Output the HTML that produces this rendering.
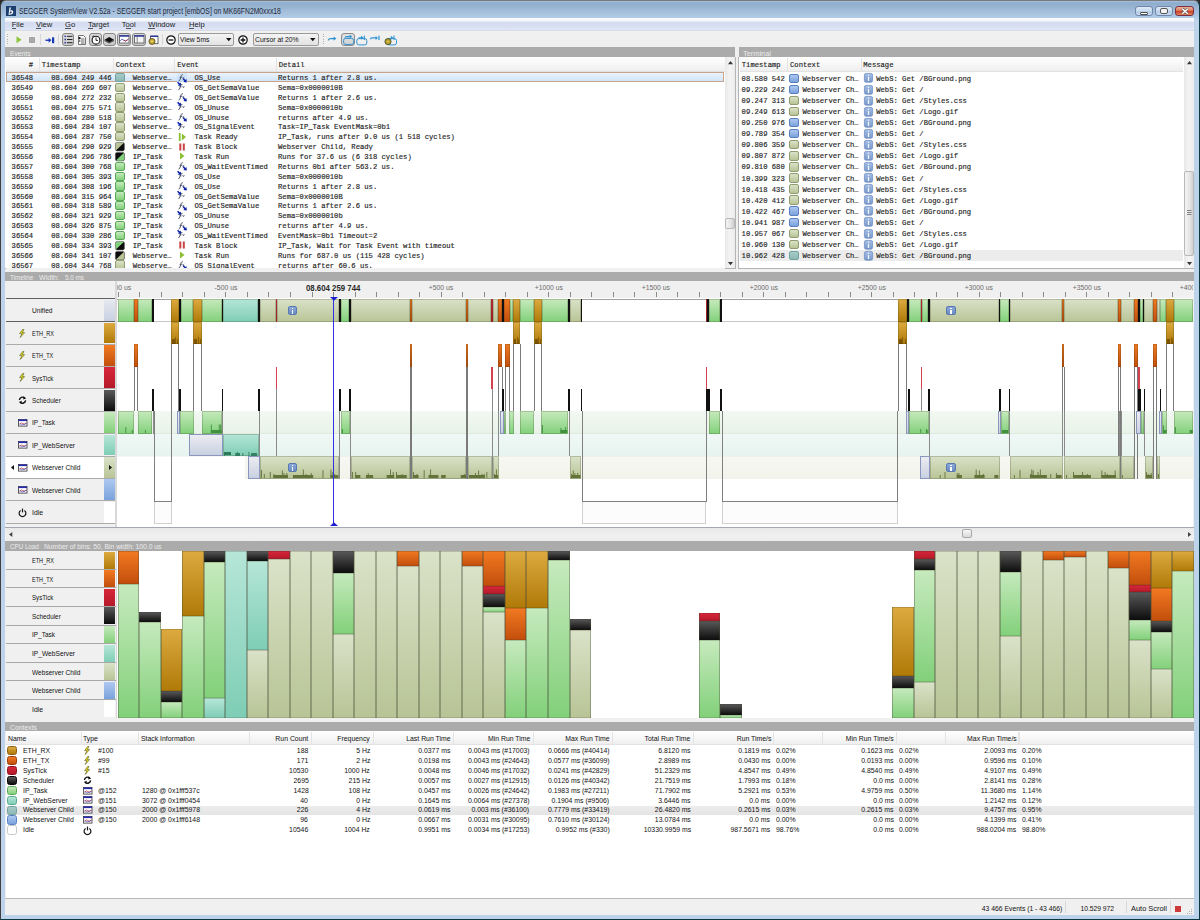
<!DOCTYPE html>
<html><head><meta charset="utf-8"><title>SEGGER SystemView</title>
<style>
html,body{margin:0;padding:0;width:1200px;height:920px;overflow:hidden;background:#2b2b2b}
#r{position:relative;width:1200px;height:920px;overflow:hidden}
#r div{position:absolute}
#r .t{white-space:pre}
#r .m{-webkit-text-stroke:0.15px currentColor}
svg{overflow:visible}
</style></head><body><div id="r">
<div style="left:0px;top:0px;width:1200px;height:920px;background:#2b2b2b;"></div>
<div style="left:0px;top:0px;width:1200px;height:920px;background:linear-gradient(#a8c0e0 0px,#8eaccc 2px,#a0bad8 9px,#b2cde6 17px,#bcd3ea 19px,#bdd3eb 100%);border:1px solid #404040;border-top-color:#7a7a7a;border-bottom-color:#0c3a42;border-right-color:#0c3a42;box-sizing:border-box;border-radius:6px 6px 0 0"></div>
<div style="left:5px;top:18px;width:1189px;height:897px;background:#f0f0f0;"></div>
<svg style="position:absolute;left:6px;top:6px;" width="10" height="10" viewBox="0 0 10 10"><rect width="10" height="10" fill="#1d3f6e"/><path d="M3.5 1.5 L5 1.5 L4.2 4.5 Q7.5 3.8 7.3 6.2 Q7 8.6 3.5 8.8 L2.5 8.8 Z M4 5.6 L3.5 7.8 Q5.8 7.6 5.9 6.3 Q6 5.2 4 5.6Z" fill="#fff"/></svg>
<div class="t" style="left:18.5px;top:4.99px;font-size:8.4px;line-height:12px;color:#1e2a3a;font-family:'Liberation Sans',sans-serif;transform:scaleX(0.811);transform-origin:left;">SEGGER SystemView V2.52a - SEGGER start project [embOS] on MK66FN2M0xxx18</div>
<div style="left:1135px;top:6px;width:18px;height:10px;background:linear-gradient(#dfe9f5,#c9dbef 50%,#b5cde8 51%,#c8dcf0);border:1px solid #6f86a8;border-radius:3px;box-sizing:border-box"></div>
<div style="left:1140px;top:12px;width:8px;height:3px;background:#fafafa;border:1px solid #505050;box-sizing:border-box;border-radius:1px"></div>
<div style="left:1155px;top:6px;width:18px;height:10px;background:linear-gradient(#dfe9f5,#c9dbef 50%,#b5cde8 51%,#c8dcf0);border:1px solid #6f86a8;border-radius:3px;box-sizing:border-box"></div>
<div style="left:1160px;top:8px;width:8px;height:6px;background:#f4f4f4;border:1px solid #555;box-sizing:border-box;border-radius:2px"></div>
<div style="left:1175px;top:6px;width:19px;height:10px;background:linear-gradient(#f0b49c,#e0765a 45%,#c8402a 55%,#e08a60);border:1px solid #7a3040;border-radius:3px;box-sizing:border-box"></div>
<svg style="position:absolute;left:1180.5px;top:8.3px;" width="8" height="6.5" viewBox="0 0 8 6.5"><path d="M1.3 0.8 L6.7 5.7 M6.7 0.8 L1.3 5.7" stroke="#555" stroke-width="2.6"/><path d="M1.3 0.8 L6.7 5.7 M6.7 0.8 L1.3 5.7" stroke="#fff" stroke-width="1.5"/></svg>
<div style="left:5px;top:18px;width:1189px;height:13px;background:linear-gradient(#fcfdff 0px,#f4f6fc 2.5px,#d6ddf0 4.5px,#d8dff2 9px,#e0e6f6 11.5px,#d6dae6 12.5px,#e4e6ec 13px)"></div>
<div class="t" style="left:11.7px;top:19.06px;font-size:7.6px;line-height:11px;color:#1a1a1a;font-family:'Liberation Sans',sans-serif;">File</div>
<div style="left:12px;top:28px;width:4px;height:1px;background:#555;"></div>
<div class="t" style="left:36px;top:19.06px;font-size:7.6px;line-height:11px;color:#1a1a1a;font-family:'Liberation Sans',sans-serif;">View</div>
<div style="left:36px;top:28px;width:5px;height:1px;background:#555;"></div>
<div class="t" style="left:65px;top:19.06px;font-size:7.6px;line-height:11px;color:#1a1a1a;font-family:'Liberation Sans',sans-serif;">Go</div>
<div style="left:65px;top:28px;width:6px;height:1px;background:#555;"></div>
<div class="t" style="left:88px;top:19.06px;font-size:7.6px;line-height:11px;color:#1a1a1a;font-family:'Liberation Sans',sans-serif;">Target</div>
<div style="left:88px;top:28px;width:5px;height:1px;background:#555;"></div>
<div class="t" style="left:121.7px;top:19.06px;font-size:7.6px;line-height:11px;color:#1a1a1a;font-family:'Liberation Sans',sans-serif;">Tool</div>
<div style="left:126px;top:28px;width:5px;height:1px;background:#555;"></div>
<div class="t" style="left:148.3px;top:19.06px;font-size:7.6px;line-height:11px;color:#1a1a1a;font-family:'Liberation Sans',sans-serif;">Window</div>
<div style="left:148px;top:28px;width:7px;height:1px;background:#555;"></div>
<div class="t" style="left:189px;top:19.06px;font-size:7.6px;line-height:11px;color:#1a1a1a;font-family:'Liberation Sans',sans-serif;">Help</div>
<div style="left:189px;top:28px;width:5px;height:1px;background:#555;"></div>
<div style="left:5px;top:31px;width:1189px;height:16px;background:linear-gradient(#f2f2ee,#f0f0f0 2px,#efefef)"></div>
<div style="left:7px;top:34px;width:1px;height:1px;background:#b0b0b0;"></div>
<div style="left:7px;top:36px;width:1px;height:1px;background:#b0b0b0;"></div>
<div style="left:7px;top:39px;width:1px;height:1px;background:#b0b0b0;"></div>
<div style="left:7px;top:41px;width:1px;height:1px;background:#b0b0b0;"></div>
<div style="left:7px;top:43px;width:1px;height:1px;background:#b0b0b0;"></div>
<div style="left:323px;top:34px;width:1px;height:1px;background:#b0b0b0;"></div>
<div style="left:323px;top:36px;width:1px;height:1px;background:#b0b0b0;"></div>
<div style="left:323px;top:39px;width:1px;height:1px;background:#b0b0b0;"></div>
<div style="left:323px;top:41px;width:1px;height:1px;background:#b0b0b0;"></div>
<div style="left:323px;top:43px;width:1px;height:1px;background:#b0b0b0;"></div>
<svg style="position:absolute;left:15.5px;top:36px;" width="6" height="7.5" viewBox="0 0 6 7.5"><path d="M0.5 0.3 L5.6 3.75 L0.5 7.2Z" fill="#8cc63e"/></svg>
<div style="left:29px;top:37px;width:6px;height:6px;background:#a8a8a8;"></div>
<div style="left:40px;top:34px;width:1px;height:11px;background:#d6d6d6;"></div>
<svg style="position:absolute;left:45px;top:36.5px;" width="10" height="6.5" viewBox="0 0 10 6.5"><path d="M0.5 3.25 H5.5" stroke="#1838b8" stroke-width="1.4"/><path d="M3.6 0.8 L6.4 3.25 L3.6 5.7Z" fill="#1838b8"/><rect x="7" y="0.3" width="2.2" height="5.9" fill="#1838b8"/></svg>
<div style="left:58px;top:34px;width:1px;height:11px;background:#d6d6d6;"></div>
<div style="left:62px;top:33px;width:12px;height:13px;background:linear-gradient(#dadada,#c8c8c8);border:1px solid #858585;border-radius:3px;box-sizing:border-box"></div>
<svg style="position:absolute;left:63.5px;top:34.5px;" width="9" height="9" viewBox="0 0 9 9"><rect x="0.5" y="0.6" width="1.4" height="1.4" fill="#1e2aa0"/><rect x="0.5" y="3.8" width="1.4" height="1.4" fill="#1e2aa0"/><rect x="0.5" y="7" width="1.4" height="1.4" fill="#1e2aa0"/><path d="M3 1.3H8.5M3 4.5H8.5M3 7.7H8.5" stroke="#222" stroke-width="1"/></svg>
<svg style="position:absolute;left:77px;top:34.5px;" width="9.5" height="10" viewBox="0 0 9.5 10"><path d="M1.5 0.5H6.5L8.5 2.5V9.5H1.5Z" fill="#fafafa" stroke="#555" stroke-width="0.8"/><path d="M4 4H7.5M4 6H7.5M4 8H7.5" stroke="#444" stroke-width="0.8"/><circle cx="2.6" cy="3.2" r="1.1" fill="#111"/><circle cx="2.6" cy="6" r="0.9" fill="#777"/></svg>
<div style="left:89px;top:33px;width:13px;height:13px;background:linear-gradient(#dadada,#c8c8c8);border:1px solid #858585;border-radius:3px;box-sizing:border-box"></div>
<div style="left:103px;top:33px;width:13px;height:13px;background:linear-gradient(#dadada,#c8c8c8);border:1px solid #858585;border-radius:3px;box-sizing:border-box"></div>
<div style="left:117px;top:33px;width:14px;height:13px;background:linear-gradient(#dadada,#c8c8c8);border:1px solid #858585;border-radius:3px;box-sizing:border-box"></div>
<div style="left:132px;top:33px;width:14px;height:13px;background:linear-gradient(#dadada,#c8c8c8);border:1px solid #858585;border-radius:3px;box-sizing:border-box"></div>
<svg style="position:absolute;left:91px;top:34.5px;" width="10" height="10" viewBox="0 0 10 10"><circle cx="5" cy="5.2" r="3.9" fill="#fff" stroke="#111" stroke-width="1.1"/><path d="M5 2.6V5.4H7" stroke="#111" stroke-width="0.9" fill="none"/><path d="M1.3 1.8 L2.8 0.8" stroke="#111" stroke-width="0.9"/></svg>
<svg style="position:absolute;left:104.2px;top:35.5px;" width="10.5" height="8" viewBox="0 0 10.5 8"><path d="M0.5 3.8 L5.2 1 L10 3.8 L5.2 6.4Z" fill="#111"/><path d="M0.5 3.8 V5 L5.2 7.6 L10 5 V3.8 L5.2 6.4Z" fill="#444"/></svg>
<svg style="position:absolute;left:119px;top:35px;" width="10.5" height="8.5" viewBox="0 0 10.5 8.5"><rect x="0.5" y="0.5" width="9.5" height="7.5" fill="#fff" stroke="#555" stroke-width="0.8"/><rect x="0.5" y="0.4" width="9.5" height="1.3" fill="#1e2aa0"/><path d="M1.2 5.8 Q2.8 3 4.6 5.2 T9.4 4.2" stroke="#2a40c0" stroke-width="0.8" fill="none"/><path d="M4.6 5.2 Q6.5 7.2 9.4 4.2" stroke="#c03030" stroke-width="0.8" fill="none"/></svg>
<svg style="position:absolute;left:133.5px;top:35px;" width="10.5" height="8.5" viewBox="0 0 10.5 8.5"><rect x="0.5" y="0.5" width="9.5" height="7.5" fill="#f4f4f4" stroke="#555" stroke-width="0.8"/><rect x="0.5" y="0.4" width="9.5" height="1.3" fill="#1e2aa0"/><path d="M3.2 1.7V8" stroke="#777" stroke-width="0.8"/></svg>
<svg style="position:absolute;left:147.5px;top:34.6px;" width="10.5" height="10" viewBox="0 0 10.5 10"><rect x="2.5" y="1.2" width="7.5" height="7.5" fill="#fff" stroke="#444" stroke-width="0.8"/><rect x="2.5" y="0.6" width="7.5" height="1.3" fill="#1e2aa0"/><circle cx="4" cy="6.4" r="3" fill="#c8a830" stroke="#4a4020" stroke-width="0.8"/><path d="M2.6 6.4H5.4M4 5V7.8" stroke="#f0e080" stroke-width="0.6"/></svg>
<div style="left:162px;top:34px;width:1px;height:11px;background:#d6d6d6;"></div>
<svg style="position:absolute;left:165.8px;top:35px;" width="10" height="10" viewBox="0 0 10 10"><circle cx="5" cy="5" r="4.2" fill="#fff" stroke="#111" stroke-width="1.2"/><path d="M2.6 5H7.4" stroke="#111" stroke-width="1.3"/></svg>
<div style="left:178px;top:33px;width:56px;height:13px;background:linear-gradient(#f4f4f4,#e2e2e2);border:1px solid #9a9a9a;border-radius:2px;box-sizing:border-box"></div>
<div class="t" style="left:180.2px;top:34.26px;font-size:7.6px;line-height:11px;color:#111;font-family:'Liberation Sans',sans-serif;transform:scaleX(0.900);transform-origin:left;">View 5ms</div>
<svg style="position:absolute;left:225.9px;top:38px;" width="5.5" height="3.5" viewBox="0 0 5.5 3.5"><path d="M0 0H5.5L2.75 3.3Z" fill="#111"/></svg>
<svg style="position:absolute;left:237.5px;top:35px;" width="10" height="10" viewBox="0 0 10 10"><circle cx="5" cy="5" r="4.2" fill="#fff" stroke="#111" stroke-width="1.2"/><path d="M2.6 5H7.4M5 2.6V7.4" stroke="#111" stroke-width="1.3"/></svg>
<div style="left:253px;top:33px;width:66px;height:13px;background:linear-gradient(#f4f4f4,#e2e2e2);border:1px solid #9a9a9a;border-radius:2px;box-sizing:border-box"></div>
<div class="t" style="left:255.2px;top:34.26px;font-size:7.6px;line-height:11px;color:#111;font-family:'Liberation Sans',sans-serif;transform:scaleX(0.900);transform-origin:left;">Cursor at 20%</div>
<svg style="position:absolute;left:310.3px;top:38px;" width="5.5" height="3.5" viewBox="0 0 5.5 3.5"><path d="M0 0H5.5L2.75 3.3Z" fill="#111"/></svg>
<svg style="position:absolute;left:326px;top:33px;" width="74" height="14" viewBox="0 0 74 14"><path d="M2.4 7.6 Q2.4 5.6 4.6 5.6 H8" stroke="#2e92d2" stroke-width="1.1" fill="none"/><path d="M7.6 3.4 L10.4 5.6 L7.6 7.8Z" fill="#2e92d2"/><rect x="30.8" y="5.6" width="10" height="6.3" rx="2" fill="none" stroke="#2e92d2" stroke-width="1"/><path d="M35 2.8 L37.6 4.8 L35 6.8Z" fill="#2e92d2"/><rect x="37.8" y="2.6" width="1.1" height="4.3" fill="#2e92d2"/><path d="M32.5 4.8H35" stroke="#2e92d2" stroke-width="1"/><path d="M44.5 6.2 Q44.5 4.9 46 4.9 H50" stroke="#2e92d2" stroke-width="1.1" fill="none"/><path d="M49.6 2.9 L52 4.9 L49.6 6.9Z" fill="#2e92d2"/><rect x="52.4" y="2.7" width="1.2" height="4.4" fill="#2e92d2"/><rect x="61" y="5.6" width="9.5" height="6.3" rx="2" fill="none" stroke="#2e92d2" stroke-width="1"/><path d="M64.8 2.8 L67.2 4.8 L64.8 6.8Z" fill="#2e92d2"/><rect x="67.4" y="2.6" width="1.1" height="4.3" fill="#2e92d2"/><circle cx="62" cy="8.6" r="3.1" fill="#b89a28" stroke="#3a4a30" stroke-width="0.8"/><path d="M60.5 8.6H63.5M62 7V10.2" stroke="#e8d060" stroke-width="0.6"/></svg>
<div style="left:341px;top:33px;width:14px;height:13px;background:linear-gradient(#e2e2e2,#d2d2d2);border:1px solid #8a8a8a;border-radius:3px;box-sizing:border-box"></div>
<svg style="position:absolute;left:340.6px;top:33px;" width="15" height="13" viewBox="0 0 15 13"><rect x="2.6" y="5.4" width="10" height="6" rx="2" fill="none" stroke="#2e92d2" stroke-width="1"/><path d="M4.2 4.8 Q4.2 3.6 5.6 3.6 H8.8" stroke="#2e92d2" stroke-width="1.1" fill="none"/><path d="M8.6 1.6 L11.2 3.6 L8.6 5.6Z" fill="#2e92d2"/></svg>
<div style="left:5px;top:47px;width:730px;height:10px;background:#ababab;"></div>
<div class="t" style="left:10px;top:47.86px;font-size:7.6px;line-height:11px;color:#ececec;font-family:'Liberation Sans',sans-serif;transform:scaleX(0.882);transform-origin:left;">Events</div>
<div style="left:739px;top:47px;width:455px;height:10px;background:#ababab;"></div>
<div class="t" style="left:743px;top:47.86px;font-size:7.6px;line-height:11px;color:#ececec;font-family:'Liberation Sans',sans-serif;transform:scaleX(0.975);transform-origin:left;">Terminal</div>
<div style="left:735px;top:47px;width:4px;height:221px;background:#f0f0f0;"></div>
<div style="left:5px;top:57px;width:731px;height:212px;background:#fff;border-right:1px solid #b4b4b4;border-bottom:1px solid #b4b4b4;box-sizing:border-box"></div>
<div style="left:738px;top:57px;width:456px;height:212px;background:#fff;border-left:1px solid #b4b4b4;border-bottom:1px solid #b4b4b4;box-sizing:border-box"></div>
<div style="left:6px;top:57px;width:719px;height:15px;background:linear-gradient(#ffffff,#f6f6f6 60%,#eeeeee);border-bottom:1px solid #e2e2e2;box-sizing:border-box"></div>
<div style="left:39px;top:58px;width:1px;height:13px;background:#e4e4e4;"></div>
<div style="left:113px;top:58px;width:1px;height:13px;background:#e4e4e4;"></div>
<div style="left:174px;top:58px;width:1px;height:13px;background:#e4e4e4;"></div>
<div style="left:276px;top:58px;width:1px;height:13px;background:#e4e4e4;"></div>
<div class="t m" style="left:28.7px;top:60.28px;font-size:7.2px;line-height:10px;color:#222;font-family:'Liberation Mono',monospace;">#</div>
<div class="t m" style="left:41.7px;top:60.28px;font-size:7.2px;line-height:10px;color:#222;font-family:'Liberation Mono',monospace;">Timestamp</div>
<div class="t m" style="left:115.7px;top:60.28px;font-size:7.2px;line-height:10px;color:#222;font-family:'Liberation Mono',monospace;">Context</div>
<div class="t m" style="left:177.3px;top:60.28px;font-size:7.2px;line-height:10px;color:#222;font-family:'Liberation Mono',monospace;">Event</div>
<div class="t m" style="left:278.7px;top:60.28px;font-size:7.2px;line-height:10px;color:#222;font-family:'Liberation Mono',monospace;">Detail</div>
<div style="left:740px;top:57px;width:443px;height:15px;background:linear-gradient(#ffffff,#f6f6f6 60%,#eeeeee);border-bottom:1px solid #e2e2e2;box-sizing:border-box"></div>
<div style="left:787px;top:58px;width:1px;height:13px;background:#e4e4e4;"></div>
<div style="left:861px;top:58px;width:1px;height:13px;background:#e4e4e4;"></div>
<div class="t m" style="left:741.8px;top:60.28px;font-size:7.2px;line-height:10px;color:#222;font-family:'Liberation Mono',monospace;">Timestamp</div>
<div class="t m" style="left:790px;top:60.28px;font-size:7.2px;line-height:10px;color:#222;font-family:'Liberation Mono',monospace;">Context</div>
<div class="t m" style="left:863.3px;top:60.28px;font-size:7.2px;line-height:10px;color:#222;font-family:'Liberation Mono',monospace;">Message</div>
<div style="left:725px;top:57px;width:10px;height:211px;background:linear-gradient(90deg,#e8e8e8,#f4f4f4 50%,#ececec)"></div>
<svg style="position:absolute;left:727.5px;top:60.5px;" width="5" height="3.5" viewBox="0 0 5 3.5"><path d="M0 3.3H5L2.5 0Z" fill="#333"/></svg>
<svg style="position:absolute;left:727.5px;top:261.5px;" width="5" height="3.5" viewBox="0 0 5 3.5"><path d="M0 0H5L2.5 3.3Z" fill="#333"/></svg>
<div style="left:725px;top:218px;width:10px;height:11px;background:linear-gradient(90deg,#f4f4f4,#e4e4e4 60%,#cfcfcf);border:1px solid #b8bab8;border-radius:2px;box-sizing:border-box"></div>
<div style="left:1184px;top:57px;width:10px;height:211px;background:linear-gradient(90deg,#e8e8e8,#f4f4f4 50%,#ececec)"></div>
<svg style="position:absolute;left:1187px;top:60.5px;" width="5" height="3.5" viewBox="0 0 5 3.5"><path d="M0 3.3H5L2.5 0Z" fill="#333"/></svg>
<svg style="position:absolute;left:1187px;top:261.5px;" width="5" height="3.5" viewBox="0 0 5 3.5"><path d="M0 0H5L2.5 3.3Z" fill="#333"/></svg>
<div style="left:1184px;top:171px;width:10px;height:85px;background:linear-gradient(90deg,#f4f4f4,#e4e4e4 60%,#cfcfcf);border:1px solid #b8bab8;border-radius:2px;box-sizing:border-box"></div>
<svg style="position:absolute;left:1187px;top:210.4px;" width="4.5" height="1" viewBox="0 0 4.5 1"><rect width="4.5" height="0.9" fill="#777"/></svg>
<svg style="position:absolute;left:1187px;top:212.4px;" width="4.5" height="1" viewBox="0 0 4.5 1"><rect width="4.5" height="0.9" fill="#777"/></svg>
<svg style="position:absolute;left:1187px;top:214.4px;" width="4.5" height="1" viewBox="0 0 4.5 1"><rect width="4.5" height="0.9" fill="#777"/></svg>
<div style="left:6px;top:72px;width:718px;height:10px;background:linear-gradient(#eaf3fc,#d2e4f7);border:1px solid #c8a48c;box-sizing:border-box"></div>
<div style="left:177px;top:73px;width:10px;height:9px;background:linear-gradient(#d8eafc,#c0dcf6)"></div>
<div class="t m" style="left:11.6px;top:73.08px;font-size:7.2px;line-height:10px;color:#222;font-family:'Liberation Mono',monospace;">36548</div>
<div class="t m" style="left:51.2px;top:73.08px;font-size:7.2px;line-height:10px;color:#222;font-family:'Liberation Mono',monospace;">08.604 249 446</div>
<div style="left:115px;top:73px;width:10px;height:9px;background:linear-gradient(#a8ccc8,#8cb8b4);border:1px solid #70a0a0;border-radius:2px;box-sizing:border-box"></div>
<div class="t m" style="left:132.7px;top:73.08px;font-size:7.2px;line-height:10px;color:#222;font-family:'Liberation Mono',monospace;">Webserve…</div>
<svg style="position:absolute;left:177px;top:72.5px;" width="11" height="10" viewBox="0 0 11 10"><path d="M1.6 8 Q2.6 8.2 3.2 6.2 L4.2 2.6 Q4.7 1.4 5.8 1.8" stroke="#4a5268" stroke-width="1" fill="none"/><path d="M2.6 4.4H5" stroke="#4a5268" stroke-width="0.8"/><path d="M5.4 3.8L7.2 6M7.2 3.8L5.4 6" stroke="#4a5268" stroke-width="0.6"/><path d="M6.2 5.8 L8.4 8" stroke="#0a1ea8" stroke-width="1.5"/><path d="M9.8 9.4 L6.4 9 L9.4 6Z" fill="#0a1ea8"/></svg>
<div class="t m" style="left:194.5px;top:73.08px;font-size:7.2px;line-height:10px;color:#222;font-family:'Liberation Mono',monospace;">OS_Use</div>
<div class="t m" style="left:278px;top:73.08px;font-size:7.2px;line-height:10px;color:#222;font-family:'Liberation Mono',monospace;">Returns 1 after 2.8 us.</div>
<div class="t m" style="left:11.6px;top:82.95px;font-size:7.2px;line-height:10px;color:#222;font-family:'Liberation Mono',monospace;">36549</div>
<div class="t m" style="left:51.2px;top:82.95px;font-size:7.2px;line-height:10px;color:#222;font-family:'Liberation Mono',monospace;">08.604 269 607</div>
<div style="left:115px;top:83px;width:10px;height:9px;background:linear-gradient(#dae2c8,#b8c496);border:1px solid #909c70;border-radius:2px;box-sizing:border-box"></div>
<div class="t m" style="left:132.7px;top:82.95px;font-size:7.2px;line-height:10px;color:#222;font-family:'Liberation Mono',monospace;">Webserve…</div>
<svg style="position:absolute;left:177px;top:82.37px;" width="11" height="10" viewBox="0 0 11 10"><path d="M0.6 0.3 L2.8 2.5" stroke="#0a1ea8" stroke-width="1.5"/><path d="M4.2 3.9 L0.8 3.5 L3.8 0.5Z" fill="#0a1ea8"/><path d="M1.4 7.6 Q2.4 7.8 3 5.8 L3.9 3.2 Q4.4 2 5.4 2.4" stroke="#4a5268" stroke-width="1" fill="none"/><path d="M2.4 4.8H4.6" stroke="#4a5268" stroke-width="0.8"/><path d="M5.6 4 L6.5 5.8 L7.4 4" stroke="#4a5268" stroke-width="0.7" fill="none"/></svg>
<div class="t m" style="left:194.5px;top:82.95px;font-size:7.2px;line-height:10px;color:#222;font-family:'Liberation Mono',monospace;">OS_GetSemaValue</div>
<div class="t m" style="left:278px;top:82.95px;font-size:7.2px;line-height:10px;color:#222;font-family:'Liberation Mono',monospace;">Sema=0x0000010B</div>
<div class="t m" style="left:11.6px;top:92.82px;font-size:7.2px;line-height:10px;color:#222;font-family:'Liberation Mono',monospace;">36550</div>
<div class="t m" style="left:51.2px;top:92.82px;font-size:7.2px;line-height:10px;color:#222;font-family:'Liberation Mono',monospace;">08.604 272 232</div>
<div style="left:115px;top:93px;width:10px;height:9px;background:linear-gradient(#dae2c8,#b8c496);border:1px solid #909c70;border-radius:2px;box-sizing:border-box"></div>
<div class="t m" style="left:132.7px;top:92.82px;font-size:7.2px;line-height:10px;color:#222;font-family:'Liberation Mono',monospace;">Webserve…</div>
<svg style="position:absolute;left:177px;top:92.24px;" width="11" height="10" viewBox="0 0 11 10"><path d="M1.6 8 Q2.6 8.2 3.2 6.2 L4.2 2.6 Q4.7 1.4 5.8 1.8" stroke="#4a5268" stroke-width="1" fill="none"/><path d="M2.6 4.4H5" stroke="#4a5268" stroke-width="0.8"/><path d="M5.4 3.8L7.2 6M7.2 3.8L5.4 6" stroke="#4a5268" stroke-width="0.6"/><path d="M6.2 5.8 L8.4 8" stroke="#0a1ea8" stroke-width="1.5"/><path d="M9.8 9.4 L6.4 9 L9.4 6Z" fill="#0a1ea8"/></svg>
<div class="t m" style="left:194.5px;top:92.82px;font-size:7.2px;line-height:10px;color:#222;font-family:'Liberation Mono',monospace;">OS_GetSemaValue</div>
<div class="t m" style="left:278px;top:92.82px;font-size:7.2px;line-height:10px;color:#222;font-family:'Liberation Mono',monospace;">Returns 1 after 2.6 us.</div>
<div class="t m" style="left:11.6px;top:102.69px;font-size:7.2px;line-height:10px;color:#222;font-family:'Liberation Mono',monospace;">36551</div>
<div class="t m" style="left:51.2px;top:102.69px;font-size:7.2px;line-height:10px;color:#222;font-family:'Liberation Mono',monospace;">08.604 275 571</div>
<div style="left:115px;top:102px;width:10px;height:10px;background:linear-gradient(#dae2c8,#b8c496);border:1px solid #909c70;border-radius:2px;box-sizing:border-box"></div>
<div class="t m" style="left:132.7px;top:102.69px;font-size:7.2px;line-height:10px;color:#222;font-family:'Liberation Mono',monospace;">Webserve…</div>
<svg style="position:absolute;left:177px;top:102.11px;" width="11" height="10" viewBox="0 0 11 10"><path d="M0.6 0.3 L2.8 2.5" stroke="#0a1ea8" stroke-width="1.5"/><path d="M4.2 3.9 L0.8 3.5 L3.8 0.5Z" fill="#0a1ea8"/><path d="M1.4 7.6 Q2.4 7.8 3 5.8 L3.9 3.2 Q4.4 2 5.4 2.4" stroke="#4a5268" stroke-width="1" fill="none"/><path d="M2.4 4.8H4.6" stroke="#4a5268" stroke-width="0.8"/><path d="M5.6 4 L6.5 5.8 L7.4 4" stroke="#4a5268" stroke-width="0.7" fill="none"/></svg>
<div class="t m" style="left:194.5px;top:102.69px;font-size:7.2px;line-height:10px;color:#222;font-family:'Liberation Mono',monospace;">OS_Unuse</div>
<div class="t m" style="left:278px;top:102.69px;font-size:7.2px;line-height:10px;color:#222;font-family:'Liberation Mono',monospace;">Sema=0x0000010b</div>
<div class="t m" style="left:11.6px;top:112.56px;font-size:7.2px;line-height:10px;color:#222;font-family:'Liberation Mono',monospace;">36552</div>
<div class="t m" style="left:51.2px;top:112.56px;font-size:7.2px;line-height:10px;color:#222;font-family:'Liberation Mono',monospace;">08.604 280 518</div>
<div style="left:115px;top:112px;width:10px;height:10px;background:linear-gradient(#dae2c8,#b8c496);border:1px solid #909c70;border-radius:2px;box-sizing:border-box"></div>
<div class="t m" style="left:132.7px;top:112.56px;font-size:7.2px;line-height:10px;color:#222;font-family:'Liberation Mono',monospace;">Webserve…</div>
<svg style="position:absolute;left:177px;top:111.98px;" width="11" height="10" viewBox="0 0 11 10"><path d="M1.6 8 Q2.6 8.2 3.2 6.2 L4.2 2.6 Q4.7 1.4 5.8 1.8" stroke="#4a5268" stroke-width="1" fill="none"/><path d="M2.6 4.4H5" stroke="#4a5268" stroke-width="0.8"/><path d="M5.4 3.8L7.2 6M7.2 3.8L5.4 6" stroke="#4a5268" stroke-width="0.6"/><path d="M6.2 5.8 L8.4 8" stroke="#0a1ea8" stroke-width="1.5"/><path d="M9.8 9.4 L6.4 9 L9.4 6Z" fill="#0a1ea8"/></svg>
<div class="t m" style="left:194.5px;top:112.56px;font-size:7.2px;line-height:10px;color:#222;font-family:'Liberation Mono',monospace;">OS_Unuse</div>
<div class="t m" style="left:278px;top:112.56px;font-size:7.2px;line-height:10px;color:#222;font-family:'Liberation Mono',monospace;">returns after 4.9 us.</div>
<div class="t m" style="left:11.6px;top:122.43px;font-size:7.2px;line-height:10px;color:#222;font-family:'Liberation Mono',monospace;">36553</div>
<div class="t m" style="left:51.2px;top:122.43px;font-size:7.2px;line-height:10px;color:#222;font-family:'Liberation Mono',monospace;">08.604 284 107</div>
<div style="left:115px;top:122px;width:10px;height:10px;background:linear-gradient(#dae2c8,#b8c496);border:1px solid #909c70;border-radius:2px;box-sizing:border-box"></div>
<div class="t m" style="left:132.7px;top:122.43px;font-size:7.2px;line-height:10px;color:#222;font-family:'Liberation Mono',monospace;">Webserve…</div>
<svg style="position:absolute;left:177px;top:121.85px;" width="11" height="10" viewBox="0 0 11 10"><path d="M0.6 0.3 L2.8 2.5" stroke="#0a1ea8" stroke-width="1.5"/><path d="M4.2 3.9 L0.8 3.5 L3.8 0.5Z" fill="#0a1ea8"/><path d="M1.4 7.6 Q2.4 7.8 3 5.8 L3.9 3.2 Q4.4 2 5.4 2.4" stroke="#4a5268" stroke-width="1" fill="none"/><path d="M2.4 4.8H4.6" stroke="#4a5268" stroke-width="0.8"/><path d="M5.6 4 L6.5 5.8 L7.4 4" stroke="#4a5268" stroke-width="0.7" fill="none"/></svg>
<div class="t m" style="left:194.5px;top:122.43px;font-size:7.2px;line-height:10px;color:#222;font-family:'Liberation Mono',monospace;">OS_SignalEvent</div>
<div class="t m" style="left:278px;top:122.43px;font-size:7.2px;line-height:10px;color:#222;font-family:'Liberation Mono',monospace;">Task=IP_Task EventMask=0b1</div>
<div class="t m" style="left:11.6px;top:132.3px;font-size:7.2px;line-height:10px;color:#222;font-family:'Liberation Mono',monospace;">36554</div>
<div class="t m" style="left:51.2px;top:132.3px;font-size:7.2px;line-height:10px;color:#222;font-family:'Liberation Mono',monospace;">08.604 287 750</div>
<div style="left:115px;top:132px;width:10px;height:9px;background:linear-gradient(#dae2c8,#b8c496);border:1px solid #909c70;border-radius:2px;box-sizing:border-box"></div>
<div class="t m" style="left:132.7px;top:132.3px;font-size:7.2px;line-height:10px;color:#222;font-family:'Liberation Mono',monospace;">Webserve…</div>
<svg style="position:absolute;left:177px;top:131.72px;" width="11" height="10" viewBox="0 0 11 10"><rect x="1.8" y="1" width="1.8" height="8" fill="#8cc034"/><path d="M4.8 1.5 L9 5 L4.8 8.5Z" fill="#8cc034"/></svg>
<div class="t m" style="left:194.5px;top:132.3px;font-size:7.2px;line-height:10px;color:#222;font-family:'Liberation Mono',monospace;">Task Ready</div>
<div class="t m" style="left:278px;top:132.3px;font-size:7.2px;line-height:10px;color:#222;font-family:'Liberation Mono',monospace;">IP_Task, runs after 9.0 us (1 518 cycles)</div>
<div class="t m" style="left:11.6px;top:142.17px;font-size:7.2px;line-height:10px;color:#222;font-family:'Liberation Mono',monospace;">36555</div>
<div class="t m" style="left:51.2px;top:142.17px;font-size:7.2px;line-height:10px;color:#222;font-family:'Liberation Mono',monospace;">08.604 290 929</div>
<svg style="position:absolute;left:115px;top:141.94px;" width="9.8" height="9.3" viewBox="0 0 9.8 9.3"><defs><clipPath id="c153"><rect x="0.4" y="0.4" width="9" height="8.5" rx="1.6"/></clipPath></defs><g clip-path="url(#c153)"><rect width="9.8" height="9.3" fill="#b8c496"/><path d="M9.8 0 L9.8 9.3 L0 9.3 Z" fill="#0c0c0c"/></g><rect x="0.4" y="0.4" width="9" height="8.5" rx="1.6" fill="none" stroke="#555" stroke-width="0.6"/></svg>
<div class="t m" style="left:132.7px;top:142.17px;font-size:7.2px;line-height:10px;color:#222;font-family:'Liberation Mono',monospace;">Webserve…</div>
<svg style="position:absolute;left:177px;top:141.59px;" width="11" height="10" viewBox="0 0 11 10"><rect x="2.3" y="1.5" width="2" height="7" fill="#c84444"/><rect x="5.8" y="1.5" width="2" height="7" fill="#c84444"/></svg>
<div class="t m" style="left:194.5px;top:142.17px;font-size:7.2px;line-height:10px;color:#222;font-family:'Liberation Mono',monospace;">Task Block</div>
<div class="t m" style="left:278px;top:142.17px;font-size:7.2px;line-height:10px;color:#222;font-family:'Liberation Mono',monospace;">Webserver Child, Ready</div>
<div class="t m" style="left:11.6px;top:152.04px;font-size:7.2px;line-height:10px;color:#222;font-family:'Liberation Mono',monospace;">36556</div>
<div class="t m" style="left:51.2px;top:152.04px;font-size:7.2px;line-height:10px;color:#222;font-family:'Liberation Mono',monospace;">08.604 296 786</div>
<svg style="position:absolute;left:115px;top:151.81px;" width="9.8" height="9.3" viewBox="0 0 9.8 9.3"><defs><clipPath id="c160"><rect x="0.4" y="0.4" width="9" height="8.5" rx="1.6"/></clipPath></defs><g clip-path="url(#c160)"><rect width="9.8" height="9.3" fill="#0c0c0c"/><path d="M9.8 0 L9.8 9.3 L0 9.3 Z" fill="#82d07a"/></g><rect x="0.4" y="0.4" width="9" height="8.5" rx="1.6" fill="none" stroke="#555" stroke-width="0.6"/></svg>
<div class="t m" style="left:132.7px;top:152.04px;font-size:7.2px;line-height:10px;color:#222;font-family:'Liberation Mono',monospace;">IP_Task</div>
<svg style="position:absolute;left:177px;top:151.46px;" width="11" height="10" viewBox="0 0 11 10"><path d="M3 1.5 L7.5 5 L3 8.5Z" fill="#8cc034"/></svg>
<div class="t m" style="left:194.5px;top:152.04px;font-size:7.2px;line-height:10px;color:#222;font-family:'Liberation Mono',monospace;">Task Run</div>
<div class="t m" style="left:278px;top:152.04px;font-size:7.2px;line-height:10px;color:#222;font-family:'Liberation Mono',monospace;">Runs for 37.6 us (6 318 cycles)</div>
<div class="t m" style="left:11.6px;top:161.91px;font-size:7.2px;line-height:10px;color:#222;font-family:'Liberation Mono',monospace;">36557</div>
<div class="t m" style="left:51.2px;top:161.91px;font-size:7.2px;line-height:10px;color:#222;font-family:'Liberation Mono',monospace;">08.604 300 768</div>
<div style="left:115px;top:162px;width:10px;height:9px;background:linear-gradient(#c6eabd,#82d07a);border:1px solid #58a858;border-radius:2px;box-sizing:border-box"></div>
<div class="t m" style="left:132.7px;top:161.91px;font-size:7.2px;line-height:10px;color:#222;font-family:'Liberation Mono',monospace;">IP_Task</div>
<svg style="position:absolute;left:177px;top:161.33px;" width="11" height="10" viewBox="0 0 11 10"><path d="M1.6 8 Q2.6 8.2 3.2 6.2 L4.2 2.6 Q4.7 1.4 5.8 1.8" stroke="#4a5268" stroke-width="1" fill="none"/><path d="M2.6 4.4H5" stroke="#4a5268" stroke-width="0.8"/><path d="M5.4 3.8L7.2 6M7.2 3.8L5.4 6" stroke="#4a5268" stroke-width="0.6"/><path d="M6.2 5.8 L8.4 8" stroke="#0a1ea8" stroke-width="1.5"/><path d="M9.8 9.4 L6.4 9 L9.4 6Z" fill="#0a1ea8"/></svg>
<div class="t m" style="left:194.5px;top:161.91px;font-size:7.2px;line-height:10px;color:#222;font-family:'Liberation Mono',monospace;">OS_WaitEventTimed</div>
<div class="t m" style="left:278px;top:161.91px;font-size:7.2px;line-height:10px;color:#222;font-family:'Liberation Mono',monospace;">Returns 0b1 after 563.2 us.</div>
<div class="t m" style="left:11.6px;top:171.78px;font-size:7.2px;line-height:10px;color:#222;font-family:'Liberation Mono',monospace;">36558</div>
<div class="t m" style="left:51.2px;top:171.78px;font-size:7.2px;line-height:10px;color:#222;font-family:'Liberation Mono',monospace;">08.604 305 393</div>
<div style="left:115px;top:172px;width:10px;height:9px;background:linear-gradient(#c6eabd,#82d07a);border:1px solid #58a858;border-radius:2px;box-sizing:border-box"></div>
<div class="t m" style="left:132.7px;top:171.78px;font-size:7.2px;line-height:10px;color:#222;font-family:'Liberation Mono',monospace;">IP_Task</div>
<svg style="position:absolute;left:177px;top:171.2px;" width="11" height="10" viewBox="0 0 11 10"><path d="M0.6 0.3 L2.8 2.5" stroke="#0a1ea8" stroke-width="1.5"/><path d="M4.2 3.9 L0.8 3.5 L3.8 0.5Z" fill="#0a1ea8"/><path d="M1.4 7.6 Q2.4 7.8 3 5.8 L3.9 3.2 Q4.4 2 5.4 2.4" stroke="#4a5268" stroke-width="1" fill="none"/><path d="M2.4 4.8H4.6" stroke="#4a5268" stroke-width="0.8"/><path d="M5.6 4 L6.5 5.8 L7.4 4" stroke="#4a5268" stroke-width="0.7" fill="none"/></svg>
<div class="t m" style="left:194.5px;top:171.78px;font-size:7.2px;line-height:10px;color:#222;font-family:'Liberation Mono',monospace;">OS_Use</div>
<div class="t m" style="left:278px;top:171.78px;font-size:7.2px;line-height:10px;color:#222;font-family:'Liberation Mono',monospace;">Sema=0x0000010b</div>
<div class="t m" style="left:11.6px;top:181.65px;font-size:7.2px;line-height:10px;color:#222;font-family:'Liberation Mono',monospace;">36559</div>
<div class="t m" style="left:51.2px;top:181.65px;font-size:7.2px;line-height:10px;color:#222;font-family:'Liberation Mono',monospace;">08.604 308 196</div>
<div style="left:115px;top:181px;width:10px;height:10px;background:linear-gradient(#c6eabd,#82d07a);border:1px solid #58a858;border-radius:2px;box-sizing:border-box"></div>
<div class="t m" style="left:132.7px;top:181.65px;font-size:7.2px;line-height:10px;color:#222;font-family:'Liberation Mono',monospace;">IP_Task</div>
<svg style="position:absolute;left:177px;top:181.07px;" width="11" height="10" viewBox="0 0 11 10"><path d="M1.6 8 Q2.6 8.2 3.2 6.2 L4.2 2.6 Q4.7 1.4 5.8 1.8" stroke="#4a5268" stroke-width="1" fill="none"/><path d="M2.6 4.4H5" stroke="#4a5268" stroke-width="0.8"/><path d="M5.4 3.8L7.2 6M7.2 3.8L5.4 6" stroke="#4a5268" stroke-width="0.6"/><path d="M6.2 5.8 L8.4 8" stroke="#0a1ea8" stroke-width="1.5"/><path d="M9.8 9.4 L6.4 9 L9.4 6Z" fill="#0a1ea8"/></svg>
<div class="t m" style="left:194.5px;top:181.65px;font-size:7.2px;line-height:10px;color:#222;font-family:'Liberation Mono',monospace;">OS_Use</div>
<div class="t m" style="left:278px;top:181.65px;font-size:7.2px;line-height:10px;color:#222;font-family:'Liberation Mono',monospace;">Returns 1 after 2.8 us.</div>
<div class="t m" style="left:11.6px;top:191.52px;font-size:7.2px;line-height:10px;color:#222;font-family:'Liberation Mono',monospace;">36560</div>
<div class="t m" style="left:51.2px;top:191.52px;font-size:7.2px;line-height:10px;color:#222;font-family:'Liberation Mono',monospace;">08.604 315 964</div>
<div style="left:115px;top:191px;width:10px;height:10px;background:linear-gradient(#c6eabd,#82d07a);border:1px solid #58a858;border-radius:2px;box-sizing:border-box"></div>
<div class="t m" style="left:132.7px;top:191.52px;font-size:7.2px;line-height:10px;color:#222;font-family:'Liberation Mono',monospace;">IP_Task</div>
<svg style="position:absolute;left:177px;top:190.94px;" width="11" height="10" viewBox="0 0 11 10"><path d="M0.6 0.3 L2.8 2.5" stroke="#0a1ea8" stroke-width="1.5"/><path d="M4.2 3.9 L0.8 3.5 L3.8 0.5Z" fill="#0a1ea8"/><path d="M1.4 7.6 Q2.4 7.8 3 5.8 L3.9 3.2 Q4.4 2 5.4 2.4" stroke="#4a5268" stroke-width="1" fill="none"/><path d="M2.4 4.8H4.6" stroke="#4a5268" stroke-width="0.8"/><path d="M5.6 4 L6.5 5.8 L7.4 4" stroke="#4a5268" stroke-width="0.7" fill="none"/></svg>
<div class="t m" style="left:194.5px;top:191.52px;font-size:7.2px;line-height:10px;color:#222;font-family:'Liberation Mono',monospace;">OS_GetSemaValue</div>
<div class="t m" style="left:278px;top:191.52px;font-size:7.2px;line-height:10px;color:#222;font-family:'Liberation Mono',monospace;">Sema=0x0000010B</div>
<div class="t m" style="left:11.6px;top:201.39px;font-size:7.2px;line-height:10px;color:#222;font-family:'Liberation Mono',monospace;">36561</div>
<div class="t m" style="left:51.2px;top:201.39px;font-size:7.2px;line-height:10px;color:#222;font-family:'Liberation Mono',monospace;">08.604 318 589</div>
<div style="left:115px;top:201px;width:10px;height:9px;background:linear-gradient(#c6eabd,#82d07a);border:1px solid #58a858;border-radius:2px;box-sizing:border-box"></div>
<div class="t m" style="left:132.7px;top:201.39px;font-size:7.2px;line-height:10px;color:#222;font-family:'Liberation Mono',monospace;">IP_Task</div>
<svg style="position:absolute;left:177px;top:200.81px;" width="11" height="10" viewBox="0 0 11 10"><path d="M1.6 8 Q2.6 8.2 3.2 6.2 L4.2 2.6 Q4.7 1.4 5.8 1.8" stroke="#4a5268" stroke-width="1" fill="none"/><path d="M2.6 4.4H5" stroke="#4a5268" stroke-width="0.8"/><path d="M5.4 3.8L7.2 6M7.2 3.8L5.4 6" stroke="#4a5268" stroke-width="0.6"/><path d="M6.2 5.8 L8.4 8" stroke="#0a1ea8" stroke-width="1.5"/><path d="M9.8 9.4 L6.4 9 L9.4 6Z" fill="#0a1ea8"/></svg>
<div class="t m" style="left:194.5px;top:201.39px;font-size:7.2px;line-height:10px;color:#222;font-family:'Liberation Mono',monospace;">OS_GetSemaValue</div>
<div class="t m" style="left:278px;top:201.39px;font-size:7.2px;line-height:10px;color:#222;font-family:'Liberation Mono',monospace;">Returns 1 after 2.6 us.</div>
<div class="t m" style="left:11.6px;top:211.26px;font-size:7.2px;line-height:10px;color:#222;font-family:'Liberation Mono',monospace;">36562</div>
<div class="t m" style="left:51.2px;top:211.26px;font-size:7.2px;line-height:10px;color:#222;font-family:'Liberation Mono',monospace;">08.604 321 929</div>
<div style="left:115px;top:211px;width:10px;height:9px;background:linear-gradient(#c6eabd,#82d07a);border:1px solid #58a858;border-radius:2px;box-sizing:border-box"></div>
<div class="t m" style="left:132.7px;top:211.26px;font-size:7.2px;line-height:10px;color:#222;font-family:'Liberation Mono',monospace;">IP_Task</div>
<svg style="position:absolute;left:177px;top:210.68px;" width="11" height="10" viewBox="0 0 11 10"><path d="M0.6 0.3 L2.8 2.5" stroke="#0a1ea8" stroke-width="1.5"/><path d="M4.2 3.9 L0.8 3.5 L3.8 0.5Z" fill="#0a1ea8"/><path d="M1.4 7.6 Q2.4 7.8 3 5.8 L3.9 3.2 Q4.4 2 5.4 2.4" stroke="#4a5268" stroke-width="1" fill="none"/><path d="M2.4 4.8H4.6" stroke="#4a5268" stroke-width="0.8"/><path d="M5.6 4 L6.5 5.8 L7.4 4" stroke="#4a5268" stroke-width="0.7" fill="none"/></svg>
<div class="t m" style="left:194.5px;top:211.26px;font-size:7.2px;line-height:10px;color:#222;font-family:'Liberation Mono',monospace;">OS_Unuse</div>
<div class="t m" style="left:278px;top:211.26px;font-size:7.2px;line-height:10px;color:#222;font-family:'Liberation Mono',monospace;">Sema=0x0000010b</div>
<div class="t m" style="left:11.6px;top:221.13px;font-size:7.2px;line-height:10px;color:#222;font-family:'Liberation Mono',monospace;">36563</div>
<div class="t m" style="left:51.2px;top:221.13px;font-size:7.2px;line-height:10px;color:#222;font-family:'Liberation Mono',monospace;">08.604 326 875</div>
<div style="left:115px;top:221px;width:10px;height:9px;background:linear-gradient(#c6eabd,#82d07a);border:1px solid #58a858;border-radius:2px;box-sizing:border-box"></div>
<div class="t m" style="left:132.7px;top:221.13px;font-size:7.2px;line-height:10px;color:#222;font-family:'Liberation Mono',monospace;">IP_Task</div>
<svg style="position:absolute;left:177px;top:220.55px;" width="11" height="10" viewBox="0 0 11 10"><path d="M1.6 8 Q2.6 8.2 3.2 6.2 L4.2 2.6 Q4.7 1.4 5.8 1.8" stroke="#4a5268" stroke-width="1" fill="none"/><path d="M2.6 4.4H5" stroke="#4a5268" stroke-width="0.8"/><path d="M5.4 3.8L7.2 6M7.2 3.8L5.4 6" stroke="#4a5268" stroke-width="0.6"/><path d="M6.2 5.8 L8.4 8" stroke="#0a1ea8" stroke-width="1.5"/><path d="M9.8 9.4 L6.4 9 L9.4 6Z" fill="#0a1ea8"/></svg>
<div class="t m" style="left:194.5px;top:221.13px;font-size:7.2px;line-height:10px;color:#222;font-family:'Liberation Mono',monospace;">OS_Unuse</div>
<div class="t m" style="left:278px;top:221.13px;font-size:7.2px;line-height:10px;color:#222;font-family:'Liberation Mono',monospace;">returns after 4.9 us.</div>
<div class="t m" style="left:11.6px;top:231px;font-size:7.2px;line-height:10px;color:#222;font-family:'Liberation Mono',monospace;">36564</div>
<div class="t m" style="left:51.2px;top:231px;font-size:7.2px;line-height:10px;color:#222;font-family:'Liberation Mono',monospace;">08.604 330 286</div>
<div style="left:115px;top:231px;width:10px;height:9px;background:linear-gradient(#c6eabd,#82d07a);border:1px solid #58a858;border-radius:2px;box-sizing:border-box"></div>
<div class="t m" style="left:132.7px;top:231px;font-size:7.2px;line-height:10px;color:#222;font-family:'Liberation Mono',monospace;">IP_Task</div>
<svg style="position:absolute;left:177px;top:230.42px;" width="11" height="10" viewBox="0 0 11 10"><path d="M0.6 0.3 L2.8 2.5" stroke="#0a1ea8" stroke-width="1.5"/><path d="M4.2 3.9 L0.8 3.5 L3.8 0.5Z" fill="#0a1ea8"/><path d="M1.4 7.6 Q2.4 7.8 3 5.8 L3.9 3.2 Q4.4 2 5.4 2.4" stroke="#4a5268" stroke-width="1" fill="none"/><path d="M2.4 4.8H4.6" stroke="#4a5268" stroke-width="0.8"/><path d="M5.6 4 L6.5 5.8 L7.4 4" stroke="#4a5268" stroke-width="0.7" fill="none"/></svg>
<div class="t m" style="left:194.5px;top:231px;font-size:7.2px;line-height:10px;color:#222;font-family:'Liberation Mono',monospace;">OS_WaitEventTimed</div>
<div class="t m" style="left:278px;top:231px;font-size:7.2px;line-height:10px;color:#222;font-family:'Liberation Mono',monospace;">EventMask=0b1 Timeout=2</div>
<div class="t m" style="left:11.6px;top:240.87px;font-size:7.2px;line-height:10px;color:#222;font-family:'Liberation Mono',monospace;">36565</div>
<div class="t m" style="left:51.2px;top:240.87px;font-size:7.2px;line-height:10px;color:#222;font-family:'Liberation Mono',monospace;">08.604 334 393</div>
<svg style="position:absolute;left:115px;top:240.64px;" width="9.8" height="9.3" viewBox="0 0 9.8 9.3"><defs><clipPath id="c223"><rect x="0.4" y="0.4" width="9" height="8.5" rx="1.6"/></clipPath></defs><g clip-path="url(#c223)"><rect width="9.8" height="9.3" fill="#82d07a"/><path d="M9.8 0 L9.8 9.3 L0 9.3 Z" fill="#0c0c0c"/></g><rect x="0.4" y="0.4" width="9" height="8.5" rx="1.6" fill="none" stroke="#555" stroke-width="0.6"/></svg>
<div class="t m" style="left:132.7px;top:240.87px;font-size:7.2px;line-height:10px;color:#222;font-family:'Liberation Mono',monospace;">IP_Task</div>
<svg style="position:absolute;left:177px;top:240.29px;" width="11" height="10" viewBox="0 0 11 10"><rect x="2.3" y="1.5" width="2" height="7" fill="#c84444"/><rect x="5.8" y="1.5" width="2" height="7" fill="#c84444"/></svg>
<div class="t m" style="left:194.5px;top:240.87px;font-size:7.2px;line-height:10px;color:#222;font-family:'Liberation Mono',monospace;">Task Block</div>
<div class="t m" style="left:278px;top:240.87px;font-size:7.2px;line-height:10px;color:#222;font-family:'Liberation Mono',monospace;">IP_Task, Wait for Task Event with timeout</div>
<div class="t m" style="left:11.6px;top:250.74px;font-size:7.2px;line-height:10px;color:#222;font-family:'Liberation Mono',monospace;">36566</div>
<div class="t m" style="left:51.2px;top:250.74px;font-size:7.2px;line-height:10px;color:#222;font-family:'Liberation Mono',monospace;">08.604 341 107</div>
<svg style="position:absolute;left:115px;top:250.51px;" width="9.8" height="9.3" viewBox="0 0 9.8 9.3"><defs><clipPath id="c230"><rect x="0.4" y="0.4" width="9" height="8.5" rx="1.6"/></clipPath></defs><g clip-path="url(#c230)"><rect width="9.8" height="9.3" fill="#0c0c0c"/><path d="M9.8 0 L9.8 9.3 L0 9.3 Z" fill="#b8c496"/></g><rect x="0.4" y="0.4" width="9" height="8.5" rx="1.6" fill="none" stroke="#555" stroke-width="0.6"/></svg>
<div class="t m" style="left:132.7px;top:250.74px;font-size:7.2px;line-height:10px;color:#222;font-family:'Liberation Mono',monospace;">Webserve…</div>
<svg style="position:absolute;left:177px;top:250.16px;" width="11" height="10" viewBox="0 0 11 10"><path d="M3 1.5 L7.5 5 L3 8.5Z" fill="#8cc034"/></svg>
<div class="t m" style="left:194.5px;top:250.74px;font-size:7.2px;line-height:10px;color:#222;font-family:'Liberation Mono',monospace;">Task Run</div>
<div class="t m" style="left:278px;top:250.74px;font-size:7.2px;line-height:10px;color:#222;font-family:'Liberation Mono',monospace;">Runs for 687.0 us (115 428 cycles)</div>
<div class="t m" style="left:11.6px;top:260.61px;font-size:7.2px;line-height:10px;color:#222;font-family:'Liberation Mono',monospace;">36567</div>
<div class="t m" style="left:51.2px;top:260.61px;font-size:7.2px;line-height:10px;color:#222;font-family:'Liberation Mono',monospace;">08.604 344 768</div>
<div style="left:115px;top:260px;width:10px;height:10px;background:linear-gradient(#dae2c8,#b8c496);border:1px solid #909c70;border-radius:2px;box-sizing:border-box"></div>
<div class="t m" style="left:132.7px;top:260.61px;font-size:7.2px;line-height:10px;color:#222;font-family:'Liberation Mono',monospace;">Webserve…</div>
<svg style="position:absolute;left:177px;top:260.03px;" width="11" height="10" viewBox="0 0 11 10"><path d="M1.6 8 Q2.6 8.2 3.2 6.2 L4.2 2.6 Q4.7 1.4 5.8 1.8" stroke="#4a5268" stroke-width="1" fill="none"/><path d="M2.6 4.4H5" stroke="#4a5268" stroke-width="0.8"/><path d="M5.4 3.8L7.2 6M7.2 3.8L5.4 6" stroke="#4a5268" stroke-width="0.6"/><path d="M6.2 5.8 L8.4 8" stroke="#0a1ea8" stroke-width="1.5"/><path d="M9.8 9.4 L6.4 9 L9.4 6Z" fill="#0a1ea8"/></svg>
<div class="t m" style="left:194.5px;top:260.61px;font-size:7.2px;line-height:10px;color:#222;font-family:'Liberation Mono',monospace;">OS_SignalEvent</div>
<div class="t m" style="left:278px;top:260.61px;font-size:7.2px;line-height:10px;color:#222;font-family:'Liberation Mono',monospace;">returns after 60.6 us.</div>
<div style="left:6px;top:268px;width:719px;height:4px;background:#f0f0f0;"></div>
<div style="left:740px;top:250px;width:443px;height:11px;background:#ececec;"></div>
<div class="t m" style="left:741.6px;top:73.83px;font-size:7.2px;line-height:10px;color:#222;font-family:'Liberation Mono',monospace;">08.580 542</div>
<div style="left:789px;top:74px;width:10px;height:9px;background:linear-gradient(#aec8f0,#7aa2dc);border:1px solid #5880c0;border-radius:2px;box-sizing:border-box"></div>
<div class="t m" style="left:802.5px;top:73.83px;font-size:7.2px;line-height:10px;color:#222;font-family:'Liberation Mono',monospace;">Webserver Ch…</div>
<svg style="position:absolute;left:863.7px;top:73.45px;" width="9" height="9.6" viewBox="0 0 9 9.6"><defs><linearGradient id="ig" x1="0" y1="0" x2="0" y2="1"><stop offset="0" stop-color="#a4bee6"/><stop offset="1" stop-color="#7898cc"/></linearGradient></defs><rect x="0.4" y="0.4" width="8.2" height="8.8" rx="1.6" fill="url(#ig)" stroke="#6a88bc" stroke-width="0.7"/><rect x="3.85" y="1.7" width="1.3" height="1.2" fill="#f4f8ff"/><rect x="3.85" y="3.9" width="1.3" height="4.1" fill="#f4f8ff"/></svg>
<div class="t m" style="left:876.2px;top:73.83px;font-size:7.2px;line-height:10px;color:#222;font-family:'Liberation Mono',monospace;">WebS: Get /BGround.png</div>
<div class="t m" style="left:741.6px;top:84.91px;font-size:7.2px;line-height:10px;color:#222;font-family:'Liberation Mono',monospace;">09.229 242</div>
<div style="left:789px;top:85px;width:10px;height:9px;background:linear-gradient(#aec8f0,#7aa2dc);border:1px solid #5880c0;border-radius:2px;box-sizing:border-box"></div>
<div class="t m" style="left:802.5px;top:84.91px;font-size:7.2px;line-height:10px;color:#222;font-family:'Liberation Mono',monospace;">Webserver Ch…</div>
<svg style="position:absolute;left:863.7px;top:84.53px;" width="9" height="9.6" viewBox="0 0 9 9.6"><defs><linearGradient id="ig" x1="0" y1="0" x2="0" y2="1"><stop offset="0" stop-color="#a4bee6"/><stop offset="1" stop-color="#7898cc"/></linearGradient></defs><rect x="0.4" y="0.4" width="8.2" height="8.8" rx="1.6" fill="url(#ig)" stroke="#6a88bc" stroke-width="0.7"/><rect x="3.85" y="1.7" width="1.3" height="1.2" fill="#f4f8ff"/><rect x="3.85" y="3.9" width="1.3" height="4.1" fill="#f4f8ff"/></svg>
<div class="t m" style="left:876.2px;top:84.91px;font-size:7.2px;line-height:10px;color:#222;font-family:'Liberation Mono',monospace;">WebS: Get /</div>
<div class="t m" style="left:741.6px;top:95.99px;font-size:7.2px;line-height:10px;color:#222;font-family:'Liberation Mono',monospace;">09.247 313</div>
<div style="left:789px;top:96px;width:10px;height:9px;background:linear-gradient(#dae2c8,#b8c496);border:1px solid #909c70;border-radius:2px;box-sizing:border-box"></div>
<div class="t m" style="left:802.5px;top:95.99px;font-size:7.2px;line-height:10px;color:#222;font-family:'Liberation Mono',monospace;">Webserver Ch…</div>
<svg style="position:absolute;left:863.7px;top:95.61px;" width="9" height="9.6" viewBox="0 0 9 9.6"><defs><linearGradient id="ig" x1="0" y1="0" x2="0" y2="1"><stop offset="0" stop-color="#a4bee6"/><stop offset="1" stop-color="#7898cc"/></linearGradient></defs><rect x="0.4" y="0.4" width="8.2" height="8.8" rx="1.6" fill="url(#ig)" stroke="#6a88bc" stroke-width="0.7"/><rect x="3.85" y="1.7" width="1.3" height="1.2" fill="#f4f8ff"/><rect x="3.85" y="3.9" width="1.3" height="4.1" fill="#f4f8ff"/></svg>
<div class="t m" style="left:876.2px;top:95.99px;font-size:7.2px;line-height:10px;color:#222;font-family:'Liberation Mono',monospace;">WebS: Get /Styles.css</div>
<div class="t m" style="left:741.6px;top:107.07px;font-size:7.2px;line-height:10px;color:#222;font-family:'Liberation Mono',monospace;">09.249 613</div>
<div style="left:789px;top:107px;width:10px;height:9px;background:linear-gradient(#dae2c8,#b8c496);border:1px solid #909c70;border-radius:2px;box-sizing:border-box"></div>
<div class="t m" style="left:802.5px;top:107.07px;font-size:7.2px;line-height:10px;color:#222;font-family:'Liberation Mono',monospace;">Webserver Ch…</div>
<svg style="position:absolute;left:863.7px;top:106.69px;" width="9" height="9.6" viewBox="0 0 9 9.6"><defs><linearGradient id="ig" x1="0" y1="0" x2="0" y2="1"><stop offset="0" stop-color="#a4bee6"/><stop offset="1" stop-color="#7898cc"/></linearGradient></defs><rect x="0.4" y="0.4" width="8.2" height="8.8" rx="1.6" fill="url(#ig)" stroke="#6a88bc" stroke-width="0.7"/><rect x="3.85" y="1.7" width="1.3" height="1.2" fill="#f4f8ff"/><rect x="3.85" y="3.9" width="1.3" height="4.1" fill="#f4f8ff"/></svg>
<div class="t m" style="left:876.2px;top:107.07px;font-size:7.2px;line-height:10px;color:#222;font-family:'Liberation Mono',monospace;">WebS: Get /Logo.gif</div>
<div class="t m" style="left:741.6px;top:118.15px;font-size:7.2px;line-height:10px;color:#222;font-family:'Liberation Mono',monospace;">09.250 976</div>
<div style="left:789px;top:118px;width:10px;height:9px;background:linear-gradient(#aec8f0,#7aa2dc);border:1px solid #5880c0;border-radius:2px;box-sizing:border-box"></div>
<div class="t m" style="left:802.5px;top:118.15px;font-size:7.2px;line-height:10px;color:#222;font-family:'Liberation Mono',monospace;">Webserver Ch…</div>
<svg style="position:absolute;left:863.7px;top:117.77px;" width="9" height="9.6" viewBox="0 0 9 9.6"><defs><linearGradient id="ig" x1="0" y1="0" x2="0" y2="1"><stop offset="0" stop-color="#a4bee6"/><stop offset="1" stop-color="#7898cc"/></linearGradient></defs><rect x="0.4" y="0.4" width="8.2" height="8.8" rx="1.6" fill="url(#ig)" stroke="#6a88bc" stroke-width="0.7"/><rect x="3.85" y="1.7" width="1.3" height="1.2" fill="#f4f8ff"/><rect x="3.85" y="3.9" width="1.3" height="4.1" fill="#f4f8ff"/></svg>
<div class="t m" style="left:876.2px;top:118.15px;font-size:7.2px;line-height:10px;color:#222;font-family:'Liberation Mono',monospace;">WebS: Get /BGround.png</div>
<div class="t m" style="left:741.6px;top:129.23px;font-size:7.2px;line-height:10px;color:#222;font-family:'Liberation Mono',monospace;">09.789 354</div>
<div style="left:789px;top:129px;width:10px;height:9px;background:linear-gradient(#aec8f0,#7aa2dc);border:1px solid #5880c0;border-radius:2px;box-sizing:border-box"></div>
<div class="t m" style="left:802.5px;top:129.23px;font-size:7.2px;line-height:10px;color:#222;font-family:'Liberation Mono',monospace;">Webserver Ch…</div>
<svg style="position:absolute;left:863.7px;top:128.85px;" width="9" height="9.6" viewBox="0 0 9 9.6"><defs><linearGradient id="ig" x1="0" y1="0" x2="0" y2="1"><stop offset="0" stop-color="#a4bee6"/><stop offset="1" stop-color="#7898cc"/></linearGradient></defs><rect x="0.4" y="0.4" width="8.2" height="8.8" rx="1.6" fill="url(#ig)" stroke="#6a88bc" stroke-width="0.7"/><rect x="3.85" y="1.7" width="1.3" height="1.2" fill="#f4f8ff"/><rect x="3.85" y="3.9" width="1.3" height="4.1" fill="#f4f8ff"/></svg>
<div class="t m" style="left:876.2px;top:129.23px;font-size:7.2px;line-height:10px;color:#222;font-family:'Liberation Mono',monospace;">WebS: Get /</div>
<div class="t m" style="left:741.6px;top:140.31px;font-size:7.2px;line-height:10px;color:#222;font-family:'Liberation Mono',monospace;">09.806 359</div>
<div style="left:789px;top:140px;width:10px;height:9px;background:linear-gradient(#dae2c8,#b8c496);border:1px solid #909c70;border-radius:2px;box-sizing:border-box"></div>
<div class="t m" style="left:802.5px;top:140.31px;font-size:7.2px;line-height:10px;color:#222;font-family:'Liberation Mono',monospace;">Webserver Ch…</div>
<svg style="position:absolute;left:863.7px;top:139.93px;" width="9" height="9.6" viewBox="0 0 9 9.6"><defs><linearGradient id="ig" x1="0" y1="0" x2="0" y2="1"><stop offset="0" stop-color="#a4bee6"/><stop offset="1" stop-color="#7898cc"/></linearGradient></defs><rect x="0.4" y="0.4" width="8.2" height="8.8" rx="1.6" fill="url(#ig)" stroke="#6a88bc" stroke-width="0.7"/><rect x="3.85" y="1.7" width="1.3" height="1.2" fill="#f4f8ff"/><rect x="3.85" y="3.9" width="1.3" height="4.1" fill="#f4f8ff"/></svg>
<div class="t m" style="left:876.2px;top:140.31px;font-size:7.2px;line-height:10px;color:#222;font-family:'Liberation Mono',monospace;">WebS: Get /Styles.css</div>
<div class="t m" style="left:741.6px;top:151.39px;font-size:7.2px;line-height:10px;color:#222;font-family:'Liberation Mono',monospace;">09.807 872</div>
<div style="left:789px;top:151px;width:10px;height:10px;background:linear-gradient(#dae2c8,#b8c496);border:1px solid #909c70;border-radius:2px;box-sizing:border-box"></div>
<div class="t m" style="left:802.5px;top:151.39px;font-size:7.2px;line-height:10px;color:#222;font-family:'Liberation Mono',monospace;">Webserver Ch…</div>
<svg style="position:absolute;left:863.7px;top:151.01px;" width="9" height="9.6" viewBox="0 0 9 9.6"><defs><linearGradient id="ig" x1="0" y1="0" x2="0" y2="1"><stop offset="0" stop-color="#a4bee6"/><stop offset="1" stop-color="#7898cc"/></linearGradient></defs><rect x="0.4" y="0.4" width="8.2" height="8.8" rx="1.6" fill="url(#ig)" stroke="#6a88bc" stroke-width="0.7"/><rect x="3.85" y="1.7" width="1.3" height="1.2" fill="#f4f8ff"/><rect x="3.85" y="3.9" width="1.3" height="4.1" fill="#f4f8ff"/></svg>
<div class="t m" style="left:876.2px;top:151.39px;font-size:7.2px;line-height:10px;color:#222;font-family:'Liberation Mono',monospace;">WebS: Get /Logo.gif</div>
<div class="t m" style="left:741.6px;top:162.47px;font-size:7.2px;line-height:10px;color:#222;font-family:'Liberation Mono',monospace;">09.810 680</div>
<div style="left:789px;top:162px;width:10px;height:10px;background:linear-gradient(#dae2c8,#b8c496);border:1px solid #909c70;border-radius:2px;box-sizing:border-box"></div>
<div class="t m" style="left:802.5px;top:162.47px;font-size:7.2px;line-height:10px;color:#222;font-family:'Liberation Mono',monospace;">Webserver Ch…</div>
<svg style="position:absolute;left:863.7px;top:162.09px;" width="9" height="9.6" viewBox="0 0 9 9.6"><defs><linearGradient id="ig" x1="0" y1="0" x2="0" y2="1"><stop offset="0" stop-color="#a4bee6"/><stop offset="1" stop-color="#7898cc"/></linearGradient></defs><rect x="0.4" y="0.4" width="8.2" height="8.8" rx="1.6" fill="url(#ig)" stroke="#6a88bc" stroke-width="0.7"/><rect x="3.85" y="1.7" width="1.3" height="1.2" fill="#f4f8ff"/><rect x="3.85" y="3.9" width="1.3" height="4.1" fill="#f4f8ff"/></svg>
<div class="t m" style="left:876.2px;top:162.47px;font-size:7.2px;line-height:10px;color:#222;font-family:'Liberation Mono',monospace;">WebS: Get /BGround.png</div>
<div class="t m" style="left:741.6px;top:173.55px;font-size:7.2px;line-height:10px;color:#222;font-family:'Liberation Mono',monospace;">10.399 323</div>
<div style="left:789px;top:173px;width:10px;height:10px;background:linear-gradient(#dae2c8,#b8c496);border:1px solid #909c70;border-radius:2px;box-sizing:border-box"></div>
<div class="t m" style="left:802.5px;top:173.55px;font-size:7.2px;line-height:10px;color:#222;font-family:'Liberation Mono',monospace;">Webserver Ch…</div>
<svg style="position:absolute;left:863.7px;top:173.17px;" width="9" height="9.6" viewBox="0 0 9 9.6"><defs><linearGradient id="ig" x1="0" y1="0" x2="0" y2="1"><stop offset="0" stop-color="#a4bee6"/><stop offset="1" stop-color="#7898cc"/></linearGradient></defs><rect x="0.4" y="0.4" width="8.2" height="8.8" rx="1.6" fill="url(#ig)" stroke="#6a88bc" stroke-width="0.7"/><rect x="3.85" y="1.7" width="1.3" height="1.2" fill="#f4f8ff"/><rect x="3.85" y="3.9" width="1.3" height="4.1" fill="#f4f8ff"/></svg>
<div class="t m" style="left:876.2px;top:173.55px;font-size:7.2px;line-height:10px;color:#222;font-family:'Liberation Mono',monospace;">WebS: Get /</div>
<div class="t m" style="left:741.6px;top:184.63px;font-size:7.2px;line-height:10px;color:#222;font-family:'Liberation Mono',monospace;">10.418 435</div>
<div style="left:789px;top:184px;width:10px;height:10px;background:linear-gradient(#dae2c8,#b8c496);border:1px solid #909c70;border-radius:2px;box-sizing:border-box"></div>
<div class="t m" style="left:802.5px;top:184.63px;font-size:7.2px;line-height:10px;color:#222;font-family:'Liberation Mono',monospace;">Webserver Ch…</div>
<svg style="position:absolute;left:863.7px;top:184.25px;" width="9" height="9.6" viewBox="0 0 9 9.6"><defs><linearGradient id="ig" x1="0" y1="0" x2="0" y2="1"><stop offset="0" stop-color="#a4bee6"/><stop offset="1" stop-color="#7898cc"/></linearGradient></defs><rect x="0.4" y="0.4" width="8.2" height="8.8" rx="1.6" fill="url(#ig)" stroke="#6a88bc" stroke-width="0.7"/><rect x="3.85" y="1.7" width="1.3" height="1.2" fill="#f4f8ff"/><rect x="3.85" y="3.9" width="1.3" height="4.1" fill="#f4f8ff"/></svg>
<div class="t m" style="left:876.2px;top:184.63px;font-size:7.2px;line-height:10px;color:#222;font-family:'Liberation Mono',monospace;">WebS: Get /Styles.css</div>
<div class="t m" style="left:741.6px;top:195.71px;font-size:7.2px;line-height:10px;color:#222;font-family:'Liberation Mono',monospace;">10.420 412</div>
<div style="left:789px;top:195px;width:10px;height:10px;background:linear-gradient(#dae2c8,#b8c496);border:1px solid #909c70;border-radius:2px;box-sizing:border-box"></div>
<div class="t m" style="left:802.5px;top:195.71px;font-size:7.2px;line-height:10px;color:#222;font-family:'Liberation Mono',monospace;">Webserver Ch…</div>
<svg style="position:absolute;left:863.7px;top:195.33px;" width="9" height="9.6" viewBox="0 0 9 9.6"><defs><linearGradient id="ig" x1="0" y1="0" x2="0" y2="1"><stop offset="0" stop-color="#a4bee6"/><stop offset="1" stop-color="#7898cc"/></linearGradient></defs><rect x="0.4" y="0.4" width="8.2" height="8.8" rx="1.6" fill="url(#ig)" stroke="#6a88bc" stroke-width="0.7"/><rect x="3.85" y="1.7" width="1.3" height="1.2" fill="#f4f8ff"/><rect x="3.85" y="3.9" width="1.3" height="4.1" fill="#f4f8ff"/></svg>
<div class="t m" style="left:876.2px;top:195.71px;font-size:7.2px;line-height:10px;color:#222;font-family:'Liberation Mono',monospace;">WebS: Get /Logo.gif</div>
<div class="t m" style="left:741.6px;top:206.79px;font-size:7.2px;line-height:10px;color:#222;font-family:'Liberation Mono',monospace;">10.422 467</div>
<div style="left:789px;top:206px;width:10px;height:10px;background:linear-gradient(#aec8f0,#7aa2dc);border:1px solid #5880c0;border-radius:2px;box-sizing:border-box"></div>
<div class="t m" style="left:802.5px;top:206.79px;font-size:7.2px;line-height:10px;color:#222;font-family:'Liberation Mono',monospace;">Webserver Ch…</div>
<svg style="position:absolute;left:863.7px;top:206.41px;" width="9" height="9.6" viewBox="0 0 9 9.6"><defs><linearGradient id="ig" x1="0" y1="0" x2="0" y2="1"><stop offset="0" stop-color="#a4bee6"/><stop offset="1" stop-color="#7898cc"/></linearGradient></defs><rect x="0.4" y="0.4" width="8.2" height="8.8" rx="1.6" fill="url(#ig)" stroke="#6a88bc" stroke-width="0.7"/><rect x="3.85" y="1.7" width="1.3" height="1.2" fill="#f4f8ff"/><rect x="3.85" y="3.9" width="1.3" height="4.1" fill="#f4f8ff"/></svg>
<div class="t m" style="left:876.2px;top:206.79px;font-size:7.2px;line-height:10px;color:#222;font-family:'Liberation Mono',monospace;">WebS: Get /BGround.png</div>
<div class="t m" style="left:741.6px;top:217.87px;font-size:7.2px;line-height:10px;color:#222;font-family:'Liberation Mono',monospace;">10.941 987</div>
<div style="left:789px;top:218px;width:10px;height:9px;background:linear-gradient(#aec8f0,#7aa2dc);border:1px solid #5880c0;border-radius:2px;box-sizing:border-box"></div>
<div class="t m" style="left:802.5px;top:217.87px;font-size:7.2px;line-height:10px;color:#222;font-family:'Liberation Mono',monospace;">Webserver Ch…</div>
<svg style="position:absolute;left:863.7px;top:217.49px;" width="9" height="9.6" viewBox="0 0 9 9.6"><defs><linearGradient id="ig" x1="0" y1="0" x2="0" y2="1"><stop offset="0" stop-color="#a4bee6"/><stop offset="1" stop-color="#7898cc"/></linearGradient></defs><rect x="0.4" y="0.4" width="8.2" height="8.8" rx="1.6" fill="url(#ig)" stroke="#6a88bc" stroke-width="0.7"/><rect x="3.85" y="1.7" width="1.3" height="1.2" fill="#f4f8ff"/><rect x="3.85" y="3.9" width="1.3" height="4.1" fill="#f4f8ff"/></svg>
<div class="t m" style="left:876.2px;top:217.87px;font-size:7.2px;line-height:10px;color:#222;font-family:'Liberation Mono',monospace;">WebS: Get /</div>
<div class="t m" style="left:741.6px;top:228.95px;font-size:7.2px;line-height:10px;color:#222;font-family:'Liberation Mono',monospace;">10.957 067</div>
<div style="left:789px;top:229px;width:10px;height:9px;background:linear-gradient(#dae2c8,#b8c496);border:1px solid #909c70;border-radius:2px;box-sizing:border-box"></div>
<div class="t m" style="left:802.5px;top:228.95px;font-size:7.2px;line-height:10px;color:#222;font-family:'Liberation Mono',monospace;">Webserver Ch…</div>
<svg style="position:absolute;left:863.7px;top:228.57px;" width="9" height="9.6" viewBox="0 0 9 9.6"><defs><linearGradient id="ig" x1="0" y1="0" x2="0" y2="1"><stop offset="0" stop-color="#a4bee6"/><stop offset="1" stop-color="#7898cc"/></linearGradient></defs><rect x="0.4" y="0.4" width="8.2" height="8.8" rx="1.6" fill="url(#ig)" stroke="#6a88bc" stroke-width="0.7"/><rect x="3.85" y="1.7" width="1.3" height="1.2" fill="#f4f8ff"/><rect x="3.85" y="3.9" width="1.3" height="4.1" fill="#f4f8ff"/></svg>
<div class="t m" style="left:876.2px;top:228.95px;font-size:7.2px;line-height:10px;color:#222;font-family:'Liberation Mono',monospace;">WebS: Get /Styles.css</div>
<div class="t m" style="left:741.6px;top:240.03px;font-size:7.2px;line-height:10px;color:#222;font-family:'Liberation Mono',monospace;">10.960 130</div>
<div style="left:789px;top:240px;width:10px;height:9px;background:linear-gradient(#dae2c8,#b8c496);border:1px solid #909c70;border-radius:2px;box-sizing:border-box"></div>
<div class="t m" style="left:802.5px;top:240.03px;font-size:7.2px;line-height:10px;color:#222;font-family:'Liberation Mono',monospace;">Webserver Ch…</div>
<svg style="position:absolute;left:863.7px;top:239.65px;" width="9" height="9.6" viewBox="0 0 9 9.6"><defs><linearGradient id="ig" x1="0" y1="0" x2="0" y2="1"><stop offset="0" stop-color="#a4bee6"/><stop offset="1" stop-color="#7898cc"/></linearGradient></defs><rect x="0.4" y="0.4" width="8.2" height="8.8" rx="1.6" fill="url(#ig)" stroke="#6a88bc" stroke-width="0.7"/><rect x="3.85" y="1.7" width="1.3" height="1.2" fill="#f4f8ff"/><rect x="3.85" y="3.9" width="1.3" height="4.1" fill="#f4f8ff"/></svg>
<div class="t m" style="left:876.2px;top:240.03px;font-size:7.2px;line-height:10px;color:#222;font-family:'Liberation Mono',monospace;">WebS: Get /Logo.gif</div>
<div class="t m" style="left:741.6px;top:251.11px;font-size:7.2px;line-height:10px;color:#222;font-family:'Liberation Mono',monospace;">10.962 428</div>
<div style="left:789px;top:251px;width:10px;height:9px;background:linear-gradient(#a8ccc8,#8cb8b4);border:1px solid #70a0a0;border-radius:2px;box-sizing:border-box"></div>
<div class="t m" style="left:802.5px;top:251.11px;font-size:7.2px;line-height:10px;color:#222;font-family:'Liberation Mono',monospace;">Webserver Ch…</div>
<svg style="position:absolute;left:863.7px;top:250.73px;" width="9" height="9.6" viewBox="0 0 9 9.6"><defs><linearGradient id="ig" x1="0" y1="0" x2="0" y2="1"><stop offset="0" stop-color="#a4bee6"/><stop offset="1" stop-color="#7898cc"/></linearGradient></defs><rect x="0.4" y="0.4" width="8.2" height="8.8" rx="1.6" fill="url(#ig)" stroke="#6a88bc" stroke-width="0.7"/><rect x="3.85" y="1.7" width="1.3" height="1.2" fill="#f4f8ff"/><rect x="3.85" y="3.9" width="1.3" height="4.1" fill="#f4f8ff"/></svg>
<div class="t m" style="left:876.2px;top:251.11px;font-size:7.2px;line-height:10px;color:#222;font-family:'Liberation Mono',monospace;">WebS: Get /BGround.png</div>
<div style="left:5px;top:269px;width:1189px;height:3px;background:#f0f0f0;"></div>
<div style="left:5px;top:272px;width:1189px;height:9px;background:#ababab;"></div>
<div class="t" style="left:10px;top:271.86px;font-size:7.6px;line-height:11px;color:#ececec;font-family:'Liberation Sans',sans-serif;transform:scaleX(0.819);transform-origin:left;">Timeline</div>
<div class="t" style="left:39px;top:271.86px;font-size:7.6px;line-height:11px;color:#ececec;font-family:'Liberation Sans',sans-serif;transform:scaleX(0.929);transform-origin:left;">Width:</div>
<div class="t" style="left:65px;top:271.86px;font-size:7.6px;line-height:11px;color:#ececec;font-family:'Liberation Sans',sans-serif;transform:scaleX(0.833);transform-origin:left;">5.0 ms</div>
<div style="left:5px;top:281px;width:1189px;height:246px;background:#f0f0f0;"></div>
<div style="left:117px;top:299px;width:1076px;height:228px;background:#ffffff;"></div>
<div style="left:6px;top:281px;width:110px;height:18px;background:#f0f0f0;"></div>
<div style="left:6px;top:299px;width:110px;height:23px;background:#f0f0f0;"></div>
<div style="left:104px;top:300px;width:11px;height:21px;background:linear-gradient(#e4e8f0,#c8d0e0);"></div>
<div class="t" style="left:31.5px;top:305.34px;font-size:7.8px;line-height:11px;color:#111;font-family:'Liberation Sans',sans-serif;transform:scaleX(0.844);transform-origin:left;">Unified</div>
<div style="left:6px;top:322px;width:110px;height:22px;background:#f0f0f0;"></div>
<div style="left:104px;top:323px;width:11px;height:20px;background:linear-gradient(#dcaa40,#b07a08);"></div>
<svg style="position:absolute;left:18px;top:328.5px;" width="8" height="9" viewBox="0 0 8 9"><path d="M4.6 0.5 L1.6 4.6 L3.9 4.6 L2.2 8.5 L6.6 3.6 L4.3 3.6 L6 0.5Z" fill="#e8e020" stroke="#4a4a10" stroke-width="0.55"/></svg>
<div class="t" style="left:31.5px;top:327.79px;font-size:7.8px;line-height:11px;color:#111;font-family:'Liberation Sans',sans-serif;transform:scaleX(0.715);transform-origin:left;">ETH_RX</div>
<div style="left:6px;top:344px;width:110px;height:23px;background:#f0f0f0;"></div>
<div style="left:104px;top:345px;width:11px;height:21px;background:linear-gradient(#f27a22,#c24e0c);"></div>
<svg style="position:absolute;left:18px;top:350.9px;" width="8" height="9" viewBox="0 0 8 9"><path d="M4.6 0.5 L1.6 4.6 L3.9 4.6 L2.2 8.5 L6.6 3.6 L4.3 3.6 L6 0.5Z" fill="#e8e020" stroke="#4a4a10" stroke-width="0.55"/></svg>
<div class="t" style="left:31.5px;top:350.19px;font-size:7.8px;line-height:11px;color:#111;font-family:'Liberation Sans',sans-serif;transform:scaleX(0.712);transform-origin:left;">ETH_TX</div>
<div style="left:6px;top:367px;width:110px;height:22px;background:#f0f0f0;"></div>
<div style="left:104px;top:367px;width:11px;height:21px;background:linear-gradient(#d8263a,#b41a2a);"></div>
<svg style="position:absolute;left:18px;top:373.3px;" width="8" height="9" viewBox="0 0 8 9"><path d="M4.6 0.5 L1.6 4.6 L3.9 4.6 L2.2 8.5 L6.6 3.6 L4.3 3.6 L6 0.5Z" fill="#e8e020" stroke="#4a4a10" stroke-width="0.55"/></svg>
<div class="t" style="left:31.5px;top:372.59px;font-size:7.8px;line-height:11px;color:#111;font-family:'Liberation Sans',sans-serif;transform:scaleX(0.789);transform-origin:left;">SysTick</div>
<div style="left:6px;top:389px;width:110px;height:22px;background:#f0f0f0;"></div>
<div style="left:104px;top:390px;width:11px;height:21px;background:linear-gradient(#5a5a5a,#0c0c0c);"></div>
<svg style="position:absolute;left:18px;top:396px;" width="9" height="8.4" viewBox="0 0 9 8.4"><path d="M1.4 4 A3.1 3.1 0 0 1 6.6 2" stroke="#111" stroke-width="1.4" fill="none"/><path d="M5.6 0.3 L8.2 2.4 L5.2 3.6Z" fill="#111"/><path d="M7.6 4.4 A3.1 3.1 0 0 1 2.4 6.4" stroke="#111" stroke-width="1.4" fill="none"/><path d="M3.4 8.1 L0.8 6 L3.8 4.8Z" fill="#111"/></svg>
<div class="t" style="left:31.5px;top:394.99px;font-size:7.8px;line-height:11px;color:#111;font-family:'Liberation Sans',sans-serif;transform:scaleX(0.820);transform-origin:left;">Scheduler</div>
<div style="left:6px;top:411px;width:110px;height:23px;background:#f0f0f0;"></div>
<div style="left:104px;top:412px;width:11px;height:21px;background:linear-gradient(#c6eabd,#82d07a);"></div>
<svg style="position:absolute;left:18px;top:418.8px;" width="9.5" height="7.6" viewBox="0 0 9.5 7.6"><rect x="0.5" y="0.5" width="8.5" height="6.6" fill="#fff" stroke="#333" stroke-width="0.8"/><rect x="0.5" y="0.5" width="8.5" height="1.6" fill="#2a2ab0"/><path d="M1.5 5.5 Q3 2.8 5 4.6 T8.5 3.6" stroke="#c03030" stroke-width="0.7" fill="none"/><path d="M1.5 4.5 L4 6 L8.5 4.5" stroke="#2a2ab0" stroke-width="0.6" fill="none"/></svg>
<div class="t" style="left:31.5px;top:417.39px;font-size:7.8px;line-height:11px;color:#111;font-family:'Liberation Sans',sans-serif;transform:scaleX(0.829);transform-origin:left;">IP_Task</div>
<div style="left:6px;top:434px;width:110px;height:22px;background:#f0f0f0;"></div>
<div style="left:104px;top:435px;width:11px;height:20px;background:linear-gradient(#b6e6d8,#7ecdb4);"></div>
<svg style="position:absolute;left:18px;top:441.2px;" width="9.5" height="7.6" viewBox="0 0 9.5 7.6"><rect x="0.5" y="0.5" width="8.5" height="6.6" fill="#fff" stroke="#333" stroke-width="0.8"/><rect x="0.5" y="0.5" width="8.5" height="1.6" fill="#2a2ab0"/><path d="M1.5 5.5 Q3 2.8 5 4.6 T8.5 3.6" stroke="#c03030" stroke-width="0.7" fill="none"/><path d="M1.5 4.5 L4 6 L8.5 4.5" stroke="#2a2ab0" stroke-width="0.6" fill="none"/></svg>
<div class="t" style="left:31.5px;top:439.79px;font-size:7.8px;line-height:11px;color:#111;font-family:'Liberation Sans',sans-serif;transform:scaleX(0.852);transform-origin:left;">IP_WebServer</div>
<div style="left:6px;top:456px;width:110px;height:23px;background:#ffffff;"></div>
<div style="left:104px;top:457px;width:11px;height:21px;background:linear-gradient(#dae2c8,#b8c496);"></div>
<svg style="position:absolute;left:18px;top:463.6px;" width="9.5" height="7.6" viewBox="0 0 9.5 7.6"><rect x="0.5" y="0.5" width="8.5" height="6.6" fill="#fff" stroke="#333" stroke-width="0.8"/><rect x="0.5" y="0.5" width="8.5" height="1.6" fill="#2a2ab0"/><path d="M1.5 5.5 Q3 2.8 5 4.6 T8.5 3.6" stroke="#c03030" stroke-width="0.7" fill="none"/><path d="M1.5 4.5 L4 6 L8.5 4.5" stroke="#2a2ab0" stroke-width="0.6" fill="none"/></svg>
<div class="t" style="left:31.5px;top:462.19px;font-size:7.8px;line-height:11px;color:#111;font-family:'Liberation Sans',sans-serif;transform:scaleX(0.843);transform-origin:left;">Webserver Child</div>
<svg style="position:absolute;left:10.5px;top:464.9px;" width="3" height="5" viewBox="0 0 3 5"><path d="M3 0V5L0 2.5Z" fill="#111"/></svg>
<svg style="position:absolute;left:108.5px;top:464.9px;" width="3" height="5" viewBox="0 0 3 5"><path d="M0 0V5L3 2.5Z" fill="#111"/></svg>
<div style="left:6px;top:479px;width:110px;height:22px;background:#f0f0f0;"></div>
<div style="left:104px;top:479px;width:11px;height:21px;background:linear-gradient(#aec8f0,#7aa2dc);"></div>
<svg style="position:absolute;left:18px;top:486px;" width="9.5" height="7.6" viewBox="0 0 9.5 7.6"><rect x="0.5" y="0.5" width="8.5" height="6.6" fill="#fff" stroke="#333" stroke-width="0.8"/><rect x="0.5" y="0.5" width="8.5" height="1.6" fill="#2a2ab0"/><path d="M1.5 5.5 Q3 2.8 5 4.6 T8.5 3.6" stroke="#c03030" stroke-width="0.7" fill="none"/><path d="M1.5 4.5 L4 6 L8.5 4.5" stroke="#2a2ab0" stroke-width="0.6" fill="none"/></svg>
<div class="t" style="left:31.5px;top:484.59px;font-size:7.8px;line-height:11px;color:#111;font-family:'Liberation Sans',sans-serif;transform:scaleX(0.843);transform-origin:left;">Webserver Child</div>
<div style="left:6px;top:501px;width:110px;height:22px;background:#f0f0f0;"></div>
<div style="left:104px;top:502px;width:11px;height:21px;background:linear-gradient(#ffffff,#ffffff);"></div>
<svg style="position:absolute;left:18px;top:508px;" width="9" height="9" viewBox="0 0 9 9"><path d="M2.6 2.4 A3.4 3.4 0 1 0 6.4 2.4" stroke="#111" stroke-width="1.2" fill="none"/><path d="M4.5 0.6V4.4" stroke="#111" stroke-width="1.2"/></svg>
<div class="t" style="left:31.5px;top:506.99px;font-size:7.8px;line-height:11px;color:#111;font-family:'Liberation Sans',sans-serif;transform:scaleX(0.875);transform-origin:left;">Idle</div>
<div style="left:6px;top:321px;width:110px;height:1px;background:#acacac;"></div>
<div style="left:6px;top:344px;width:110px;height:1px;background:#acacac;"></div>
<div style="left:6px;top:366px;width:110px;height:1px;background:#acacac;"></div>
<div style="left:6px;top:388px;width:110px;height:1px;background:#acacac;"></div>
<div style="left:6px;top:411px;width:110px;height:1px;background:#acacac;"></div>
<div style="left:6px;top:433px;width:110px;height:1px;background:#acacac;"></div>
<div style="left:6px;top:456px;width:110px;height:1px;background:#acacac;"></div>
<div style="left:6px;top:478px;width:110px;height:1px;background:#acacac;"></div>
<div style="left:6px;top:500px;width:110px;height:1px;background:#acacac;"></div>
<div style="left:6px;top:523px;width:110px;height:1px;background:#acacac;"></div>
<div style="left:6px;top:298px;width:110px;height:1px;background:#606060;"></div>
<div style="left:6px;top:321px;width:110px;height:1px;background:#606060;"></div>
<div style="left:115px;top:281px;width:2px;height:246px;background:#d8d8d8;"></div>
<div style="left:117px;top:281px;width:1076px;height:17px;background:#f0f0f0;"></div>
<div style="left:117px;top:298px;width:1076px;height:1px;background:#ffffff;"></div>
<div style="left:117.3px;top:281px;width:1076px;height:18px;overflow:hidden">
<div style="left:0.7px;top:11px;width:1px;height:5px;background:#8a8a8a;"></div>
<div style="left:21.7px;top:11px;width:1px;height:5px;background:#8a8a8a;"></div>
<div style="left:43.7px;top:11px;width:1px;height:5px;background:#8a8a8a;"></div>
<div style="left:64.7px;top:11px;width:1px;height:5px;background:#8a8a8a;"></div>
<div style="left:86.7px;top:11px;width:1px;height:5px;background:#8a8a8a;"></div>
<div style="left:107.7px;top:11px;width:1px;height:5px;background:#8a8a8a;"></div>
<div style="left:129.7px;top:11px;width:1px;height:5px;background:#8a8a8a;"></div>
<div style="left:150.7px;top:11px;width:1px;height:5px;background:#8a8a8a;"></div>
<div style="left:172.7px;top:11px;width:1px;height:5px;background:#8a8a8a;"></div>
<div style="left:194.7px;top:11px;width:1px;height:5px;background:#8a8a8a;"></div>
<div style="left:215.7px;top:11px;width:1px;height:5px;background:#8a8a8a;"></div>
<div style="left:237.7px;top:11px;width:1px;height:5px;background:#8a8a8a;"></div>
<div style="left:258.7px;top:11px;width:1px;height:5px;background:#8a8a8a;"></div>
<div style="left:280.7px;top:11px;width:1px;height:5px;background:#8a8a8a;"></div>
<div style="left:301.7px;top:11px;width:1px;height:5px;background:#8a8a8a;"></div>
<div style="left:323.7px;top:11px;width:1px;height:5px;background:#8a8a8a;"></div>
<div style="left:344.7px;top:11px;width:1px;height:5px;background:#8a8a8a;"></div>
<div style="left:366.7px;top:11px;width:1px;height:5px;background:#8a8a8a;"></div>
<div style="left:387.7px;top:11px;width:1px;height:5px;background:#8a8a8a;"></div>
<div style="left:409.7px;top:11px;width:1px;height:5px;background:#8a8a8a;"></div>
<div style="left:430.7px;top:11px;width:1px;height:5px;background:#8a8a8a;"></div>
<div style="left:452.7px;top:11px;width:1px;height:5px;background:#8a8a8a;"></div>
<div style="left:473.7px;top:11px;width:1px;height:5px;background:#8a8a8a;"></div>
<div style="left:495.7px;top:11px;width:1px;height:5px;background:#8a8a8a;"></div>
<div style="left:516.7px;top:11px;width:1px;height:5px;background:#8a8a8a;"></div>
<div style="left:538.7px;top:11px;width:1px;height:5px;background:#8a8a8a;"></div>
<div style="left:559.7px;top:11px;width:1px;height:5px;background:#8a8a8a;"></div>
<div style="left:581.7px;top:11px;width:1px;height:5px;background:#8a8a8a;"></div>
<div style="left:602.7px;top:11px;width:1px;height:5px;background:#8a8a8a;"></div>
<div style="left:624.7px;top:11px;width:1px;height:5px;background:#8a8a8a;"></div>
<div style="left:645.7px;top:11px;width:1px;height:5px;background:#8a8a8a;"></div>
<div style="left:667.7px;top:11px;width:1px;height:5px;background:#8a8a8a;"></div>
<div style="left:688.7px;top:11px;width:1px;height:5px;background:#8a8a8a;"></div>
<div style="left:710.7px;top:11px;width:1px;height:5px;background:#8a8a8a;"></div>
<div style="left:732.7px;top:11px;width:1px;height:5px;background:#8a8a8a;"></div>
<div style="left:753.7px;top:11px;width:1px;height:5px;background:#8a8a8a;"></div>
<div style="left:775.7px;top:11px;width:1px;height:5px;background:#8a8a8a;"></div>
<div style="left:796.7px;top:11px;width:1px;height:5px;background:#8a8a8a;"></div>
<div style="left:818.7px;top:11px;width:1px;height:5px;background:#8a8a8a;"></div>
<div style="left:839.7px;top:11px;width:1px;height:5px;background:#8a8a8a;"></div>
<div style="left:861.7px;top:11px;width:1px;height:5px;background:#8a8a8a;"></div>
<div style="left:882.7px;top:11px;width:1px;height:5px;background:#8a8a8a;"></div>
<div style="left:904.7px;top:11px;width:1px;height:5px;background:#8a8a8a;"></div>
<div style="left:925.7px;top:11px;width:1px;height:5px;background:#8a8a8a;"></div>
<div style="left:947.7px;top:11px;width:1px;height:5px;background:#8a8a8a;"></div>
<div style="left:968.7px;top:11px;width:1px;height:5px;background:#8a8a8a;"></div>
<div style="left:990.7px;top:11px;width:1px;height:5px;background:#8a8a8a;"></div>
<div style="left:1011.7px;top:11px;width:1px;height:5px;background:#8a8a8a;"></div>
<div style="left:1033.7px;top:11px;width:1px;height:5px;background:#8a8a8a;"></div>
<div style="left:1054.7px;top:11px;width:1px;height:5px;background:#8a8a8a;"></div>
<div class="t" style="left:-13.01px;top:2.1px;font-size:7.2px;line-height:10px;color:#6a6a6a;font-family:'Liberation Sans',sans-serif;transform:scaleX(0.950);transform-origin:center;">-1000 us</div>
<div class="t" style="left:96.59px;top:2.1px;font-size:7.2px;line-height:10px;color:#6a6a6a;font-family:'Liberation Sans',sans-serif;transform:scaleX(0.950);transform-origin:center;">-500 us</div>
<div class="t" style="left:310.89px;top:2.1px;font-size:7.2px;line-height:10px;color:#6a6a6a;font-family:'Liberation Sans',sans-serif;transform:scaleX(0.950);transform-origin:center;">+500 us</div>
<div class="t" style="left:416.49px;top:2.1px;font-size:7.2px;line-height:10px;color:#6a6a6a;font-family:'Liberation Sans',sans-serif;transform:scaleX(0.950);transform-origin:center;">+1000 us</div>
<div class="t" style="left:524.09px;top:2.1px;font-size:7.2px;line-height:10px;color:#6a6a6a;font-family:'Liberation Sans',sans-serif;transform:scaleX(0.950);transform-origin:center;">+1500 us</div>
<div class="t" style="left:631.69px;top:2.1px;font-size:7.2px;line-height:10px;color:#6a6a6a;font-family:'Liberation Sans',sans-serif;transform:scaleX(0.950);transform-origin:center;">+2000 us</div>
<div class="t" style="left:739.29px;top:2.1px;font-size:7.2px;line-height:10px;color:#6a6a6a;font-family:'Liberation Sans',sans-serif;transform:scaleX(0.950);transform-origin:center;">+2500 us</div>
<div class="t" style="left:846.89px;top:2.1px;font-size:7.2px;line-height:10px;color:#6a6a6a;font-family:'Liberation Sans',sans-serif;transform:scaleX(0.950);transform-origin:center;">+3000 us</div>
<div class="t" style="left:954.49px;top:2.1px;font-size:7.2px;line-height:10px;color:#6a6a6a;font-family:'Liberation Sans',sans-serif;transform:scaleX(0.950);transform-origin:center;">+3500 us</div>
<div class="t" style="left:1062.09px;top:2.1px;font-size:7.2px;line-height:10px;color:#6a6a6a;font-family:'Liberation Sans',sans-serif;transform:scaleX(0.950);transform-origin:center;">+4000 us</div>
</div>
<div class="t" style="left:306px;top:283.5px;font-size:8.2px;line-height:10px;font-family:'Liberation Sans',sans-serif;font-weight:bold;color:#2a2a2a;transform:scaleX(0.955);transform-origin:left">08.604 259 744</div>
<div style="left:116px;top:281px;width:1px;height:18px;background:#d8d8d8;"></div>
<div style="left:117px;top:411px;width:1076px;height:23px;background:linear-gradient(#f2f8f2,#e8f3e8);"></div>
<div style="left:117px;top:434px;width:1076px;height:22px;background:linear-gradient(#f0f8f6,#e6f4f0);"></div>
<div style="left:245px;top:456px;width:948px;height:23px;background:linear-gradient(#f8f8f4,#f2f3ea);"></div>
<div style="left:117px;top:433px;width:1076px;height:1px;background:rgba(0,0,0,0.03);"></div>
<div style="left:117px;top:456px;width:1076px;height:1px;background:rgba(0,0,0,0.03);"></div>
<div style="left:117px;top:299px;width:1076px;height:1px;background:#a0a0a0;"></div>
<div style="left:117px;top:321px;width:1076px;height:1px;background:#c8c8c8;"></div>
<div style="left:154px;top:501px;width:18px;height:23px;background:#fcfcfc;border:1px solid #d0d0d0;border-top:none;box-sizing:border-box"></div>
<div style="left:154px;top:411px;width:1px;height:91px;background:#808080;"></div>
<div style="left:171px;top:411px;width:1px;height:91px;background:#808080;"></div>
<div style="left:154px;top:501px;width:18px;height:1px;background:#808080;"></div>
<div style="left:582px;top:501px;width:124px;height:23px;background:#fcfcfc;border:1px solid #d0d0d0;border-top:none;box-sizing:border-box"></div>
<div style="left:582px;top:411px;width:1px;height:91px;background:#808080;"></div>
<div style="left:706px;top:411px;width:1px;height:91px;background:#808080;"></div>
<div style="left:582px;top:501px;width:124px;height:1px;background:#808080;"></div>
<div style="left:722px;top:501px;width:176px;height:23px;background:#fcfcfc;border:1px solid #d0d0d0;border-top:none;box-sizing:border-box"></div>
<div style="left:722px;top:411px;width:1px;height:91px;background:#808080;"></div>
<div style="left:897px;top:411px;width:1px;height:91px;background:#808080;"></div>
<div style="left:722px;top:501px;width:176px;height:1px;background:#808080;"></div>
<div style="left:171px;top:344px;width:1px;height:67px;background:#7a7a7a;"></div>
<div style="left:178px;top:344px;width:1px;height:67px;background:#7a7a7a;"></div>
<div style="left:193px;top:344px;width:1px;height:67px;background:#7a7a7a;"></div>
<div style="left:201px;top:344px;width:1px;height:67px;background:#7a7a7a;"></div>
<div style="left:513px;top:344px;width:1px;height:67px;background:#7a7a7a;"></div>
<div style="left:520px;top:344px;width:1px;height:67px;background:#7a7a7a;"></div>
<div style="left:534px;top:344px;width:1px;height:67px;background:#7a7a7a;"></div>
<div style="left:541px;top:344px;width:1px;height:67px;background:#7a7a7a;"></div>
<div style="left:898px;top:344px;width:1px;height:67px;background:#7a7a7a;"></div>
<div style="left:906px;top:344px;width:1px;height:67px;background:#7a7a7a;"></div>
<div style="left:1166px;top:344px;width:1px;height:67px;background:#7a7a7a;"></div>
<div style="left:1173px;top:344px;width:1px;height:67px;background:#7a7a7a;"></div>
<div style="left:134px;top:367px;width:1px;height:44px;background:#7a7a7a;"></div>
<div style="left:137px;top:367px;width:1px;height:44px;background:#7a7a7a;"></div>
<div style="left:410px;top:367px;width:1px;height:112px;background:#7a7a7a;"></div>
<div style="left:411px;top:367px;width:1px;height:112px;background:#7a7a7a;"></div>
<div style="left:466px;top:367px;width:1px;height:112px;background:#7a7a7a;"></div>
<div style="left:467px;top:367px;width:1px;height:112px;background:#7a7a7a;"></div>
<div style="left:498px;top:367px;width:1px;height:44px;background:#7a7a7a;"></div>
<div style="left:502px;top:367px;width:1px;height:44px;background:#7a7a7a;"></div>
<div style="left:505px;top:367px;width:1px;height:44px;background:#7a7a7a;"></div>
<div style="left:509px;top:367px;width:1px;height:44px;background:#7a7a7a;"></div>
<div style="left:1062px;top:367px;width:1px;height:112px;background:#7a7a7a;"></div>
<div style="left:1064px;top:367px;width:1px;height:112px;background:#7a7a7a;"></div>
<div style="left:1118px;top:367px;width:1px;height:112px;background:#7a7a7a;"></div>
<div style="left:1120px;top:367px;width:1px;height:112px;background:#7a7a7a;"></div>
<div style="left:1134px;top:367px;width:1px;height:112px;background:#7a7a7a;"></div>
<div style="left:1137px;top:367px;width:1px;height:112px;background:#7a7a7a;"></div>
<div style="left:1153px;top:367px;width:1px;height:112px;background:#7a7a7a;"></div>
<div style="left:1156px;top:367px;width:1px;height:112px;background:#7a7a7a;"></div>
<div style="left:276px;top:389px;width:1px;height:90px;background:#8a8a8a;"></div>
<div style="left:492px;top:389px;width:1px;height:90px;background:#8a8a8a;"></div>
<div style="left:706px;top:389px;width:1px;height:22px;background:#8a8a8a;"></div>
<div style="left:921px;top:389px;width:1px;height:22px;background:#8a8a8a;"></div>
<div style="left:1138px;top:389px;width:2px;height:22px;background:#8a8a8a;"></div>
<div style="left:339px;top:411px;width:1px;height:68px;background:#8a8a8a;"></div>
<div style="left:350px;top:411px;width:1px;height:68px;background:#8a8a8a;"></div>
<div style="left:222px;top:411px;width:1px;height:23px;background:#8a8a8a;"></div>
<div style="left:259px;top:411px;width:1px;height:45px;background:#8a8a8a;"></div>
<div style="left:569px;top:411px;width:1px;height:45px;background:#8a8a8a;"></div>
<div style="left:929px;top:411px;width:1px;height:45px;background:#8a8a8a;"></div>
<div style="left:1009px;top:411px;width:1px;height:45px;background:#8a8a8a;"></div>
<div style="left:1144px;top:411px;width:1px;height:45px;background:#8a8a8a;"></div>
<div style="left:498px;top:411px;width:1px;height:68px;background:#8a8a8a;"></div>
<div style="left:153px;top:411px;width:1px;height:23px;background:#8a8a8a;"></div>
<div style="left:1062px;top:411px;width:1px;height:68px;background:#8a8a8a;"></div>
<div style="left:1064px;top:411px;width:1px;height:68px;background:#8a8a8a;"></div>
<div style="left:1119px;top:411px;width:1px;height:68px;background:#8a8a8a;"></div>
<div style="left:1121px;top:411px;width:1px;height:68px;background:#8a8a8a;"></div>
<div style="left:118px;top:299px;width:16px;height:23px;background:linear-gradient(#c6eabd,#82d07a);box-shadow:inset 0 0 0 1px rgba(40,50,20,0.22);"></div>
<div style="left:134px;top:299px;width:4px;height:23px;background:linear-gradient(#f27a22,#c24e0c);box-shadow:inset 0 0 0 1px rgba(40,50,20,0.22);"></div>
<div style="left:138px;top:299px;width:14px;height:23px;background:linear-gradient(#c6eabd,#82d07a);box-shadow:inset 0 0 0 1px rgba(40,50,20,0.22);"></div>
<div style="left:152px;top:299px;width:2px;height:23px;background:#111;"></div>
<div style="left:171px;top:299px;width:8px;height:23px;background:linear-gradient(#dcaa40,#b07a08);box-shadow:inset 0 0 0 1px rgba(40,50,20,0.22);"></div>
<div style="left:179px;top:299px;width:2px;height:23px;background:#111;"></div>
<div style="left:181px;top:299px;width:12px;height:23px;background:linear-gradient(#c6eabd,#82d07a);box-shadow:inset 0 0 0 1px rgba(40,50,20,0.22);"></div>
<div style="left:193px;top:299px;width:9px;height:23px;background:linear-gradient(#dcaa40,#b07a08);box-shadow:inset 0 0 0 1px rgba(40,50,20,0.22);"></div>
<div style="left:202px;top:299px;width:20px;height:23px;background:linear-gradient(#c6eabd,#82d07a);box-shadow:inset 0 0 0 1px rgba(40,50,20,0.22);"></div>
<div style="left:222px;top:299px;width:1px;height:23px;background:#111;"></div>
<div style="left:223px;top:299px;width:35px;height:23px;background:linear-gradient(#b6e6d8,#7ecdb4);box-shadow:inset 0 0 0 1px rgba(40,50,20,0.22);"></div>
<div style="left:258px;top:299px;width:2px;height:23px;background:#111;"></div>
<div style="left:260px;top:299px;width:16px;height:23px;background:linear-gradient(#dae2c8,#b8c496);box-shadow:inset 0 0 0 1px rgba(40,50,20,0.22);"></div>
<div style="left:276px;top:299px;width:1px;height:23px;background:linear-gradient(#d8263a,#b41a2a);box-shadow:inset 0 0 0 1px rgba(40,50,20,0.22);"></div>
<div style="left:277px;top:299px;width:62px;height:23px;background:linear-gradient(#dae2c8,#b8c496);box-shadow:inset 0 0 0 1px rgba(40,50,20,0.22);"></div>
<div style="left:339px;top:299px;width:2px;height:23px;background:#111;"></div>
<div style="left:341px;top:299px;width:8px;height:23px;background:linear-gradient(#c6eabd,#82d07a);box-shadow:inset 0 0 0 1px rgba(40,50,20,0.22);"></div>
<div style="left:349px;top:299px;width:2px;height:23px;background:#111;"></div>
<div style="left:351px;top:299px;width:59px;height:23px;background:linear-gradient(#dae2c8,#b8c496);box-shadow:inset 0 0 0 1px rgba(40,50,20,0.22);"></div>
<div style="left:410px;top:299px;width:2px;height:23px;background:linear-gradient(#f27a22,#c24e0c);box-shadow:inset 0 0 0 1px rgba(40,50,20,0.22);"></div>
<div style="left:412px;top:299px;width:54px;height:23px;background:linear-gradient(#dae2c8,#b8c496);box-shadow:inset 0 0 0 1px rgba(40,50,20,0.22);"></div>
<div style="left:466px;top:299px;width:2px;height:23px;background:linear-gradient(#f27a22,#c24e0c);box-shadow:inset 0 0 0 1px rgba(40,50,20,0.22);"></div>
<div style="left:468px;top:299px;width:23px;height:23px;background:linear-gradient(#dae2c8,#b8c496);box-shadow:inset 0 0 0 1px rgba(40,50,20,0.22);"></div>
<div style="left:491px;top:299px;width:2px;height:23px;background:linear-gradient(#d8263a,#b41a2a);box-shadow:inset 0 0 0 1px rgba(40,50,20,0.22);"></div>
<div style="left:493px;top:299px;width:5px;height:23px;background:linear-gradient(#dae2c8,#b8c496);box-shadow:inset 0 0 0 1px rgba(40,50,20,0.22);"></div>
<div style="left:498px;top:299px;width:4px;height:23px;background:linear-gradient(#f27a22,#c24e0c);box-shadow:inset 0 0 0 1px rgba(40,50,20,0.22);"></div>
<div style="left:502px;top:299px;width:2px;height:23px;background:#111;"></div>
<div style="left:504px;top:299px;width:6px;height:23px;background:linear-gradient(#f27a22,#c24e0c);box-shadow:inset 0 0 0 1px rgba(40,50,20,0.22);"></div>
<div style="left:510px;top:299px;width:3px;height:23px;background:linear-gradient(#c6eabd,#82d07a);box-shadow:inset 0 0 0 1px rgba(40,50,20,0.22);"></div>
<div style="left:513px;top:299px;width:7px;height:23px;background:linear-gradient(#dcaa40,#b07a08);box-shadow:inset 0 0 0 1px rgba(40,50,20,0.22);"></div>
<div style="left:520px;top:299px;width:14px;height:23px;background:linear-gradient(#c6eabd,#82d07a);box-shadow:inset 0 0 0 1px rgba(40,50,20,0.22);"></div>
<div style="left:534px;top:299px;width:8px;height:23px;background:linear-gradient(#dcaa40,#b07a08);box-shadow:inset 0 0 0 1px rgba(40,50,20,0.22);"></div>
<div style="left:542px;top:299px;width:26px;height:23px;background:linear-gradient(#c6eabd,#82d07a);box-shadow:inset 0 0 0 1px rgba(40,50,20,0.22);"></div>
<div style="left:568px;top:299px;width:2px;height:23px;background:#111;"></div>
<div style="left:570px;top:299px;width:11px;height:23px;background:linear-gradient(#dae2c8,#b8c496);box-shadow:inset 0 0 0 1px rgba(40,50,20,0.22);"></div>
<div style="left:581px;top:299px;width:1px;height:23px;background:#111;"></div>
<div style="left:706px;top:299px;width:1px;height:23px;background:linear-gradient(#d8263a,#b41a2a);box-shadow:inset 0 0 0 1px rgba(40,50,20,0.22);"></div>
<div style="left:707px;top:299px;width:2px;height:23px;background:#111;"></div>
<div style="left:709px;top:299px;width:11px;height:23px;background:linear-gradient(#c6eabd,#82d07a);box-shadow:inset 0 0 0 1px rgba(40,50,20,0.22);"></div>
<div style="left:720px;top:299px;width:2px;height:23px;background:#111;"></div>
<div style="left:898px;top:299px;width:9px;height:23px;background:linear-gradient(#dcaa40,#b07a08);box-shadow:inset 0 0 0 1px rgba(40,50,20,0.22);"></div>
<div style="left:907px;top:299px;width:2px;height:23px;background:#111;"></div>
<div style="left:909px;top:299px;width:12px;height:23px;background:linear-gradient(#c6eabd,#82d07a);box-shadow:inset 0 0 0 1px rgba(40,50,20,0.22);"></div>
<div style="left:921px;top:299px;width:1px;height:23px;background:linear-gradient(#d8263a,#b41a2a);box-shadow:inset 0 0 0 1px rgba(40,50,20,0.22);"></div>
<div style="left:922px;top:299px;width:6px;height:23px;background:linear-gradient(#c6eabd,#82d07a);box-shadow:inset 0 0 0 1px rgba(40,50,20,0.22);"></div>
<div style="left:928px;top:299px;width:2px;height:23px;background:#111;"></div>
<div style="left:930px;top:299px;width:69px;height:23px;background:linear-gradient(#dae2c8,#b8c496);box-shadow:inset 0 0 0 1px rgba(40,50,20,0.22);"></div>
<div style="left:999px;top:299px;width:1px;height:23px;background:#111;"></div>
<div style="left:1000px;top:299px;width:9px;height:23px;background:linear-gradient(#c6eabd,#82d07a);box-shadow:inset 0 0 0 1px rgba(40,50,20,0.22);"></div>
<div style="left:1009px;top:299px;width:1px;height:23px;background:#111;"></div>
<div style="left:1010px;top:299px;width:52px;height:23px;background:linear-gradient(#dae2c8,#b8c496);box-shadow:inset 0 0 0 1px rgba(40,50,20,0.22);"></div>
<div style="left:1062px;top:299px;width:2px;height:23px;background:linear-gradient(#f27a22,#c24e0c);box-shadow:inset 0 0 0 1px rgba(40,50,20,0.22);"></div>
<div style="left:1064px;top:299px;width:54px;height:23px;background:linear-gradient(#dae2c8,#b8c496);box-shadow:inset 0 0 0 1px rgba(40,50,20,0.22);"></div>
<div style="left:1118px;top:299px;width:3px;height:23px;background:linear-gradient(#f27a22,#c24e0c);box-shadow:inset 0 0 0 1px rgba(40,50,20,0.22);"></div>
<div style="left:1121px;top:299px;width:13px;height:23px;background:linear-gradient(#dae2c8,#b8c496);box-shadow:inset 0 0 0 1px rgba(40,50,20,0.22);"></div>
<div style="left:1134px;top:299px;width:4px;height:23px;background:linear-gradient(#f27a22,#c24e0c);box-shadow:inset 0 0 0 1px rgba(40,50,20,0.22);"></div>
<div style="left:1138px;top:299px;width:2px;height:23px;background:#111;"></div>
<div style="left:1140px;top:299px;width:3px;height:23px;background:linear-gradient(#c6eabd,#82d07a);box-shadow:inset 0 0 0 1px rgba(40,50,20,0.22);"></div>
<div style="left:1143px;top:299px;width:1px;height:23px;background:#111;"></div>
<div style="left:1144px;top:299px;width:9px;height:23px;background:linear-gradient(#dae2c8,#b8c496);box-shadow:inset 0 0 0 1px rgba(40,50,20,0.22);"></div>
<div style="left:1153px;top:299px;width:4px;height:23px;background:linear-gradient(#f27a22,#c24e0c);box-shadow:inset 0 0 0 1px rgba(40,50,20,0.22);"></div>
<div style="left:1157px;top:299px;width:3px;height:23px;background:linear-gradient(#dae2c8,#b8c496);box-shadow:inset 0 0 0 1px rgba(40,50,20,0.22);"></div>
<div style="left:1160px;top:299px;width:1px;height:23px;background:#111;"></div>
<div style="left:1160px;top:299px;width:6px;height:23px;background:linear-gradient(#c6eabd,#82d07a);box-shadow:inset 0 0 0 1px rgba(40,50,20,0.22);"></div>
<div style="left:1166px;top:299px;width:8px;height:23px;background:linear-gradient(#dcaa40,#b07a08);box-shadow:inset 0 0 0 1px rgba(40,50,20,0.22);"></div>
<div style="left:1174px;top:299px;width:19px;height:23px;background:linear-gradient(#c6eabd,#82d07a);box-shadow:inset 0 0 0 1px rgba(40,50,20,0.22);"></div>
<div style="left:171px;top:322px;width:8px;height:22px;background:linear-gradient(#dcaa40,#b07a08);box-shadow:inset 0 0 0 1px rgba(40,50,20,0.22);"></div>
<div style="left:172px;top:339px;width:3px;height:5px;background:rgba(80,50,0,0.55);"></div>
<div style="left:175px;top:337px;width:1px;height:7px;background:rgba(80,50,0,0.45);"></div>
<div style="left:177px;top:339px;width:1px;height:5px;background:rgba(80,50,0,0.45);"></div>
<div style="left:193px;top:322px;width:9px;height:22px;background:linear-gradient(#dcaa40,#b07a08);box-shadow:inset 0 0 0 1px rgba(40,50,20,0.22);"></div>
<div style="left:194px;top:339px;width:3px;height:5px;background:rgba(80,50,0,0.55);"></div>
<div style="left:198px;top:337px;width:1px;height:7px;background:rgba(80,50,0,0.45);"></div>
<div style="left:200px;top:339px;width:1px;height:5px;background:rgba(80,50,0,0.45);"></div>
<div style="left:513px;top:322px;width:7px;height:22px;background:linear-gradient(#dcaa40,#b07a08);box-shadow:inset 0 0 0 1px rgba(40,50,20,0.22);"></div>
<div style="left:514px;top:339px;width:2px;height:5px;background:rgba(80,50,0,0.55);"></div>
<div style="left:517px;top:337px;width:1px;height:7px;background:rgba(80,50,0,0.45);"></div>
<div style="left:518px;top:339px;width:1px;height:5px;background:rgba(80,50,0,0.45);"></div>
<div style="left:534px;top:322px;width:8px;height:22px;background:linear-gradient(#dcaa40,#b07a08);box-shadow:inset 0 0 0 1px rgba(40,50,20,0.22);"></div>
<div style="left:535px;top:339px;width:3px;height:5px;background:rgba(80,50,0,0.55);"></div>
<div style="left:538px;top:337px;width:1px;height:7px;background:rgba(80,50,0,0.45);"></div>
<div style="left:540px;top:339px;width:1px;height:5px;background:rgba(80,50,0,0.45);"></div>
<div style="left:898px;top:322px;width:9px;height:22px;background:linear-gradient(#dcaa40,#b07a08);box-shadow:inset 0 0 0 1px rgba(40,50,20,0.22);"></div>
<div style="left:899px;top:339px;width:3px;height:5px;background:rgba(80,50,0,0.55);"></div>
<div style="left:902px;top:337px;width:1px;height:7px;background:rgba(80,50,0,0.45);"></div>
<div style="left:905px;top:339px;width:1px;height:5px;background:rgba(80,50,0,0.45);"></div>
<div style="left:1166px;top:322px;width:8px;height:22px;background:linear-gradient(#dcaa40,#b07a08);box-shadow:inset 0 0 0 1px rgba(40,50,20,0.22);"></div>
<div style="left:1167px;top:339px;width:3px;height:5px;background:rgba(80,50,0,0.55);"></div>
<div style="left:1171px;top:337px;width:1px;height:7px;background:rgba(80,50,0,0.45);"></div>
<div style="left:1172px;top:339px;width:1px;height:5px;background:rgba(80,50,0,0.45);"></div>
<div style="left:134px;top:344px;width:4px;height:23px;background:linear-gradient(#f27a22,#c24e0c);box-shadow:inset 0 0 0 1px rgba(40,50,20,0.22);"></div>
<div style="left:410px;top:344px;width:2px;height:23px;background:linear-gradient(#f27a22,#c24e0c);box-shadow:inset 0 0 0 1px rgba(40,50,20,0.22);"></div>
<div style="left:466px;top:344px;width:2px;height:23px;background:linear-gradient(#f27a22,#c24e0c);box-shadow:inset 0 0 0 1px rgba(40,50,20,0.22);"></div>
<div style="left:498px;top:344px;width:4px;height:23px;background:linear-gradient(#f27a22,#c24e0c);box-shadow:inset 0 0 0 1px rgba(40,50,20,0.22);"></div>
<div style="left:505px;top:344px;width:5px;height:23px;background:linear-gradient(#f27a22,#c24e0c);box-shadow:inset 0 0 0 1px rgba(40,50,20,0.22);"></div>
<div style="left:1062px;top:344px;width:2px;height:23px;background:linear-gradient(#f27a22,#c24e0c);box-shadow:inset 0 0 0 1px rgba(40,50,20,0.22);"></div>
<div style="left:1118px;top:344px;width:3px;height:23px;background:linear-gradient(#f27a22,#c24e0c);box-shadow:inset 0 0 0 1px rgba(40,50,20,0.22);"></div>
<div style="left:1134px;top:344px;width:4px;height:23px;background:linear-gradient(#f27a22,#c24e0c);box-shadow:inset 0 0 0 1px rgba(40,50,20,0.22);"></div>
<div style="left:1153px;top:344px;width:4px;height:23px;background:linear-gradient(#f27a22,#c24e0c);box-shadow:inset 0 0 0 1px rgba(40,50,20,0.22);"></div>
<div style="left:276px;top:367px;width:1px;height:22px;background:#d44050;"></div>
<div style="left:491px;top:367px;width:2px;height:22px;background:#d44050;"></div>
<div style="left:706px;top:367px;width:1px;height:22px;background:#d44050;"></div>
<div style="left:921px;top:367px;width:1px;height:22px;background:#d44050;"></div>
<div style="left:1138px;top:367px;width:2px;height:22px;background:#d44050;"></div>
<div style="left:152px;top:389px;width:2px;height:22px;background:#111;"></div>
<div style="left:179px;top:389px;width:2px;height:22px;background:#111;"></div>
<div style="left:222px;top:389px;width:1px;height:22px;background:#111;"></div>
<div style="left:258px;top:389px;width:2px;height:22px;background:#111;"></div>
<div style="left:339px;top:389px;width:2px;height:22px;background:#111;"></div>
<div style="left:349px;top:389px;width:2px;height:22px;background:#111;"></div>
<div style="left:502px;top:389px;width:2px;height:22px;background:#111;"></div>
<div style="left:568px;top:389px;width:2px;height:22px;background:#111;"></div>
<div style="left:581px;top:389px;width:1px;height:22px;background:#111;"></div>
<div style="left:706px;top:389px;width:4px;height:22px;background:#111;"></div>
<div style="left:720px;top:389px;width:2px;height:22px;background:#111;"></div>
<div style="left:908px;top:389px;width:2px;height:22px;background:#111;"></div>
<div style="left:928px;top:389px;width:2px;height:22px;background:#111;"></div>
<div style="left:999px;top:389px;width:2px;height:22px;background:#111;"></div>
<div style="left:1009px;top:389px;width:1px;height:22px;background:#111;"></div>
<div style="left:1138px;top:389px;width:3px;height:22px;background:#111;"></div>
<div style="left:1144px;top:389px;width:1px;height:22px;background:#111;"></div>
<div style="left:1160px;top:389px;width:1px;height:22px;background:#111;"></div>
<div style="left:177px;top:411px;width:3px;height:23px;background:linear-gradient(#ececf2,#c8d0e0);border:1px solid #8a96bc;box-sizing:border-box"></div>
<div style="left:500px;top:411px;width:4px;height:23px;background:linear-gradient(#ececf2,#c8d0e0);border:1px solid #8a96bc;box-sizing:border-box"></div>
<div style="left:906px;top:411px;width:3px;height:23px;background:linear-gradient(#ececf2,#c8d0e0);border:1px solid #8a96bc;box-sizing:border-box"></div>
<div style="left:998px;top:411px;width:3px;height:23px;background:linear-gradient(#ececf2,#c8d0e0);border:1px solid #8a96bc;box-sizing:border-box"></div>
<div style="left:1136px;top:411px;width:5px;height:23px;background:linear-gradient(#ececf2,#c8d0e0);border:1px solid #8a96bc;box-sizing:border-box"></div>
<div style="left:1159px;top:411px;width:3px;height:23px;background:linear-gradient(#ececf2,#c8d0e0);border:1px solid #8a96bc;box-sizing:border-box"></div>
<div style="left:189px;top:434px;width:34px;height:22px;background:linear-gradient(#ececf2,#c8d0e0);border:1px solid #8a96bc;box-sizing:border-box"></div>
<div style="left:248px;top:456px;width:12px;height:23px;background:linear-gradient(#ececf2,#c8d0e0);border:1px solid #8a96bc;box-sizing:border-box"></div>
<div style="left:920px;top:456px;width:10px;height:23px;background:linear-gradient(#ececf2,#c8d0e0);border:1px solid #8a96bc;box-sizing:border-box"></div>
<div style="left:118px;top:411px;width:16px;height:23px;background:linear-gradient(#c6eabd,#82d07a);box-shadow:inset 0 0 0 1px rgba(40,50,20,0.22);"></div>
<svg style="position:absolute;left:118px;top:423.2px;" width="15.75" height="10" viewBox="0 0 15.75 10"><g fill="#3a8a3a" opacity="0.9"><rect x="7.36" y="4.00" width="0.9" height="6.00"/><rect x="13.73" y="7.00" width="1.02" height="3.00"/></g></svg>
<div style="left:138px;top:411px;width:14px;height:23px;background:linear-gradient(#c6eabd,#82d07a);box-shadow:inset 0 0 0 1px rgba(40,50,20,0.22);"></div>
<svg style="position:absolute;left:138.25px;top:423.2px;" width="14.25" height="10" viewBox="0 0 14.25 10"><g fill="#3a8a3a" opacity="0.9"><rect x="6.94" y="7.00" width="0.9" height="3.00"/></g></svg>
<div style="left:180px;top:411px;width:14px;height:23px;background:linear-gradient(#c6eabd,#82d07a);box-shadow:inset 0 0 0 1px rgba(40,50,20,0.22);"></div>
<div style="left:202px;top:411px;width:20px;height:23px;background:linear-gradient(#c6eabd,#82d07a);box-shadow:inset 0 0 0 1px rgba(40,50,20,0.22);"></div>
<svg style="position:absolute;left:201.5px;top:423.2px;" width="20.75" height="10" viewBox="0 0 20.75 10"><g fill="#3a8a3a" opacity="0.9"><rect x="8.88" y="7.00" width="10.87" height="3.00"/><rect x="8.88" y="1.50" width="0.9" height="8.50"/><rect x="16.81" y="1.50" width="0.9" height="8.50"/><rect x="18.27" y="1.50" width="0.9" height="8.50"/></g></svg>
<div style="left:341px;top:411px;width:9px;height:23px;background:linear-gradient(#c6eabd,#82d07a);box-shadow:inset 0 0 0 1px rgba(40,50,20,0.22);"></div>
<svg style="position:absolute;left:340.6px;top:423.2px;" width="9.7" height="10" viewBox="0 0 9.7 10"><g fill="#3a8a3a" opacity="0.9"><rect x="1.00" y="6.00" width="0.9" height="4.00"/></g></svg>
<div style="left:504px;top:411px;width:2px;height:23px;background:linear-gradient(#c6eabd,#82d07a);box-shadow:inset 0 0 0 1px rgba(40,50,20,0.22);"></div>
<div style="left:509px;top:411px;width:5px;height:23px;background:linear-gradient(#c6eabd,#82d07a);box-shadow:inset 0 0 0 1px rgba(40,50,20,0.22);"></div>
<div style="left:520px;top:411px;width:14px;height:23px;background:linear-gradient(#c6eabd,#82d07a);box-shadow:inset 0 0 0 1px rgba(40,50,20,0.22);"></div>
<div style="left:541px;top:411px;width:27px;height:23px;background:linear-gradient(#c6eabd,#82d07a);box-shadow:inset 0 0 0 1px rgba(40,50,20,0.22);"></div>
<svg style="position:absolute;left:541.25px;top:423.2px;" width="27" height="10" viewBox="0 0 27 10"><g fill="#3a8a3a" opacity="0.9"><rect x="1.00" y="2.00" width="0.9" height="8.00"/><rect x="19.47" y="7.00" width="6.53" height="3.00"/><rect x="19.47" y="5.00" width="0.9" height="5.00"/><rect x="24.17" y="4.00" width="0.9" height="6.00"/></g></svg>
<div style="left:709px;top:411px;width:11px;height:23px;background:linear-gradient(#c6eabd,#82d07a);box-shadow:inset 0 0 0 1px rgba(40,50,20,0.22);"></div>
<div style="left:909px;top:411px;width:20px;height:23px;background:linear-gradient(#c6eabd,#82d07a);box-shadow:inset 0 0 0 1px rgba(40,50,20,0.22);"></div>
<svg style="position:absolute;left:909.3px;top:423.2px;" width="19.7" height="10" viewBox="0 0 19.7 10"><g fill="#3a8a3a" opacity="0.9"><rect x="11.27" y="6.00" width="0.9" height="4.00"/><rect x="17.17" y="7.00" width="1.53" height="3.00"/><rect x="17.17" y="6.00" width="0.9" height="4.00"/></g></svg>
<div style="left:1001px;top:411px;width:8px;height:23px;background:linear-gradient(#c6eabd,#82d07a);box-shadow:inset 0 0 0 1px rgba(40,50,20,0.22);"></div>
<svg style="position:absolute;left:1000.8px;top:423.2px;" width="8.2" height="10" viewBox="0 0 8.2 10"><g fill="#3a8a3a" opacity="0.9"><rect x="1.00" y="7.00" width="6.20" height="3.00"/></g></svg>
<div style="left:1141px;top:411px;width:3px;height:23px;background:linear-gradient(#c6eabd,#82d07a);box-shadow:inset 0 0 0 1px rgba(40,50,20,0.22);"></div>
<div style="left:1162px;top:411px;width:5px;height:23px;background:linear-gradient(#c6eabd,#82d07a);box-shadow:inset 0 0 0 1px rgba(40,50,20,0.22);"></div>
<svg style="position:absolute;left:1161.5px;top:423.2px;" width="5.5" height="10" viewBox="0 0 5.5 10"><g fill="#3a8a3a" opacity="0.9"><rect x="1.00" y="7.00" width="3.50" height="3.00"/><rect x="1.00" y="2.50" width="0.9" height="7.50"/></g></svg>
<div style="left:1174px;top:411px;width:19px;height:23px;background:linear-gradient(#c6eabd,#82d07a);box-shadow:inset 0 0 0 1px rgba(40,50,20,0.22);"></div>
<svg style="position:absolute;left:1173.5px;top:423.2px;" width="19.8" height="10" viewBox="0 0 19.8 10"><g fill="#3a8a3a" opacity="0.9"><rect x="1.00" y="4.00" width="0.9" height="6.00"/><rect x="15.62" y="7.00" width="3.18" height="3.00"/></g></svg>
<div style="left:223px;top:434px;width:36px;height:22px;background:linear-gradient(#b6e6d8,#7ecdb4);box-shadow:inset 0 0 0 1px rgba(40,50,20,0.22);"></div>
<svg style="position:absolute;left:223.3px;top:445.6px;" width="35.4" height="10" viewBox="0 0 35.4 10"><g fill="#2a7a5a" opacity="0.9"><rect x="1.00" y="6.00" width="0.9" height="4.00"/><rect x="12.32" y="7.00" width="4.66" height="3.00"/><rect x="13.99" y="6.00" width="0.9" height="4.00"/><rect x="19.42" y="7.00" width="0.9" height="3.00"/><rect x="25.49" y="6.00" width="0.9" height="4.00"/><rect x="28.13" y="7.00" width="5.85" height="3.00"/></g></svg>
<div style="left:224px;top:452px;width:7px;height:3px;background:#2a7a5a;"></div>
<div style="left:260px;top:456px;width:79px;height:23px;background:linear-gradient(#dae2c8,#b8c496);box-shadow:inset 0 0 0 1px rgba(40,50,20,0.22);"></div>
<svg style="position:absolute;left:260px;top:468px;" width="79.3" height="10" viewBox="0 0 79.3 10"><g fill="#5a6a30" opacity="0.9"><rect x="1.00" y="2.00" width="0.9" height="8.00"/><rect x="3.84" y="6.00" width="0.9" height="4.00"/><rect x="9.80" y="4.00" width="0.9" height="6.00"/><rect x="13.46" y="7.00" width="14.49" height="3.00"/><rect x="13.46" y="6.00" width="0.9" height="4.00"/><rect x="21.88" y="2.50" width="0.9" height="7.50"/><rect x="23.51" y="5.00" width="0.9" height="5.00"/><rect x="26.41" y="5.00" width="0.9" height="5.00"/><rect x="32.92" y="7.00" width="20.27" height="3.00"/><rect x="42.87" y="1.50" width="0.9" height="8.50"/><rect x="45.61" y="6.00" width="0.9" height="4.00"/><rect x="50.83" y="5.00" width="0.9" height="5.00"/><rect x="62.52" y="2.00" width="0.9" height="8.00"/><rect x="70.47" y="7.00" width="7.83" height="3.00"/><rect x="70.47" y="1.50" width="0.9" height="8.50"/><rect x="72.39" y="4.00" width="0.9" height="6.00"/><rect x="74.23" y="6.00" width="0.9" height="4.00"/></g></svg>
<div style="left:351px;top:456px;width:59px;height:23px;background:linear-gradient(#dae2c8,#b8c496);box-shadow:inset 0 0 0 1px rgba(40,50,20,0.22);"></div>
<svg style="position:absolute;left:350.6px;top:468px;" width="59.4" height="10" viewBox="0 0 59.4 10"><g fill="#5a6a30" opacity="0.9"><rect x="1.00" y="4.00" width="0.9" height="6.00"/><rect x="4.26" y="7.00" width="5.06" height="3.00"/><rect x="4.26" y="4.00" width="0.9" height="6.00"/><rect x="14.96" y="7.00" width="7.19" height="3.00"/><rect x="16.75" y="5.00" width="0.9" height="5.00"/><rect x="35.64" y="7.00" width="7.53" height="3.00"/><rect x="39.03" y="1.50" width="0.9" height="8.50"/><rect x="41.75" y="4.00" width="0.9" height="6.00"/><rect x="45.09" y="7.00" width="10.62" height="3.00"/><rect x="45.09" y="4.00" width="0.9" height="6.00"/><rect x="50.70" y="6.00" width="0.9" height="4.00"/></g></svg>
<div style="left:412px;top:456px;width:54px;height:23px;background:linear-gradient(#dae2c8,#b8c496);box-shadow:inset 0 0 0 1px rgba(40,50,20,0.22);"></div>
<svg style="position:absolute;left:411.5px;top:468px;" width="55" height="10" viewBox="0 0 55 10"><g fill="#5a6a30" opacity="0.9"><rect x="1.00" y="7.00" width="5.54" height="3.00"/><rect x="1.00" y="4.00" width="0.9" height="6.00"/><rect x="4.45" y="6.00" width="0.9" height="4.00"/><rect x="11.70" y="2.00" width="0.9" height="8.00"/><rect x="16.51" y="7.00" width="9.93" height="3.00"/><rect x="18.14" y="1.50" width="0.9" height="8.50"/><rect x="29.15" y="7.00" width="4.51" height="3.00"/><rect x="48.74" y="7.00" width="5.26" height="3.00"/><rect x="51.84" y="6.00" width="0.9" height="4.00"/></g></svg>
<div style="left:468px;top:456px;width:24px;height:23px;background:linear-gradient(#dae2c8,#b8c496);box-shadow:inset 0 0 0 1px rgba(40,50,20,0.22);"></div>
<svg style="position:absolute;left:468.25px;top:468px;" width="23.75" height="10" viewBox="0 0 23.75 10"><g fill="#5a6a30" opacity="0.9"><rect x="1.00" y="7.00" width="15.85" height="3.00"/><rect x="7.06" y="5.00" width="0.9" height="5.00"/><rect x="10.17" y="2.50" width="0.9" height="7.50"/><rect x="13.51" y="6.00" width="0.9" height="4.00"/><rect x="15.74" y="6.00" width="0.9" height="4.00"/><rect x="18.38" y="4.00" width="0.9" height="6.00"/></g></svg>
<div style="left:493px;top:456px;width:6px;height:23px;background:linear-gradient(#dae2c8,#b8c496);box-shadow:inset 0 0 0 1px rgba(40,50,20,0.22);"></div>
<svg style="position:absolute;left:492.75px;top:468px;" width="6" height="10" viewBox="0 0 6 10"><g fill="#5a6a30" opacity="0.9"><rect x="1.00" y="7.00" width="4.00" height="3.00"/><rect x="1.00" y="6.00" width="0.9" height="4.00"/><rect x="2.94" y="1.50" width="0.9" height="8.50"/></g></svg>
<div style="left:570px;top:456px;width:11px;height:23px;background:linear-gradient(#dae2c8,#b8c496);box-shadow:inset 0 0 0 1px rgba(40,50,20,0.22);"></div>
<svg style="position:absolute;left:569.5px;top:468px;" width="11.5" height="10" viewBox="0 0 11.5 10"><g fill="#5a6a30" opacity="0.9"><rect x="1.00" y="7.00" width="9.50" height="3.00"/><rect x="1.00" y="6.00" width="0.9" height="4.00"/><rect x="2.77" y="2.50" width="0.9" height="7.50"/><rect x="4.36" y="5.00" width="0.9" height="5.00"/><rect x="7.34" y="5.00" width="0.9" height="5.00"/></g></svg>
<div style="left:930px;top:456px;width:70px;height:23px;background:linear-gradient(#dae2c8,#b8c496);box-shadow:inset 0 0 0 1px rgba(40,50,20,0.22);"></div>
<svg style="position:absolute;left:930.3px;top:468px;" width="69.3" height="10" viewBox="0 0 69.3 10"><g fill="#5a6a30" opacity="0.9"><rect x="9.70" y="7.00" width="0.9" height="3.00"/><rect x="14.56" y="4.00" width="0.9" height="6.00"/><rect x="26.77" y="7.00" width="5.19" height="3.00"/><rect x="26.77" y="5.00" width="0.9" height="5.00"/><rect x="28.53" y="5.00" width="0.9" height="5.00"/><rect x="44.41" y="7.00" width="10.19" height="3.00"/><rect x="45.73" y="1.50" width="0.9" height="8.50"/><rect x="48.93" y="2.50" width="0.9" height="7.50"/><rect x="52.99" y="6.00" width="0.9" height="4.00"/><rect x="64.40" y="7.00" width="3.90" height="3.00"/></g></svg>
<div style="left:1010px;top:456px;width:53px;height:23px;background:linear-gradient(#dae2c8,#b8c496);box-shadow:inset 0 0 0 1px rgba(40,50,20,0.22);"></div>
<svg style="position:absolute;left:1010px;top:468px;" width="52.6" height="10" viewBox="0 0 52.6 10"><g fill="#5a6a30" opacity="0.9"><rect x="3.90" y="7.00" width="0.9" height="3.00"/><rect x="9.54" y="2.00" width="0.9" height="8.00"/><rect x="19.99" y="7.00" width="16.88" height="3.00"/><rect x="19.99" y="6.00" width="0.9" height="4.00"/><rect x="21.34" y="1.50" width="0.9" height="8.50"/><rect x="22.73" y="2.50" width="0.9" height="7.50"/><rect x="27.52" y="4.00" width="0.9" height="6.00"/><rect x="29.87" y="1.50" width="0.9" height="8.50"/><rect x="40.33" y="6.00" width="0.9" height="4.00"/><rect x="45.94" y="7.00" width="5.66" height="3.00"/><rect x="45.94" y="5.00" width="0.9" height="5.00"/></g></svg>
<div style="left:1064px;top:456px;width:56px;height:23px;background:linear-gradient(#dae2c8,#b8c496);box-shadow:inset 0 0 0 1px rgba(40,50,20,0.22);"></div>
<svg style="position:absolute;left:1064.5px;top:468px;" width="55" height="10" viewBox="0 0 55 10"><g fill="#5a6a30" opacity="0.9"><rect x="1.00" y="7.00" width="0.9" height="3.00"/><rect x="8.04" y="7.00" width="17.87" height="3.00"/><rect x="8.04" y="4.00" width="0.9" height="6.00"/><rect x="17.14" y="4.00" width="0.9" height="6.00"/><rect x="21.92" y="6.00" width="0.9" height="4.00"/><rect x="36.40" y="7.00" width="14.56" height="3.00"/><rect x="36.40" y="2.50" width="0.9" height="7.50"/><rect x="39.68" y="4.00" width="0.9" height="6.00"/><rect x="41.92" y="6.00" width="0.9" height="4.00"/><rect x="49.67" y="2.50" width="0.9" height="7.50"/></g></svg>
<div style="left:1121px;top:456px;width:13px;height:23px;background:linear-gradient(#dae2c8,#b8c496);box-shadow:inset 0 0 0 1px rgba(40,50,20,0.22);"></div>
<svg style="position:absolute;left:1121px;top:468px;" width="13" height="10" viewBox="0 0 13 10"><g fill="#5a6a30" opacity="0.9"><rect x="1.00" y="7.00" width="0.9" height="3.00"/></g></svg>
<div style="left:1145px;top:456px;width:8px;height:23px;background:linear-gradient(#dae2c8,#b8c496);box-shadow:inset 0 0 0 1px rgba(40,50,20,0.22);"></div>
<svg style="position:absolute;left:1145px;top:468px;" width="8" height="10" viewBox="0 0 8 10"><g fill="#5a6a30" opacity="0.9"><rect x="1.00" y="7.00" width="6.00" height="3.00"/><rect x="1.00" y="4.00" width="0.9" height="6.00"/><rect x="2.79" y="6.00" width="0.9" height="4.00"/><rect x="5.75" y="5.00" width="0.9" height="5.00"/></g></svg>
<div style="left:1157px;top:456px;width:3px;height:23px;background:linear-gradient(#dae2c8,#b8c496);box-shadow:inset 0 0 0 1px rgba(40,50,20,0.22);"></div>
<svg style="position:absolute;left:1157px;top:468px;" width="3.5" height="10" viewBox="0 0 3.5 10"><g fill="#5a6a30" opacity="0.9"><rect x="1.00" y="6.00" width="0.9" height="4.00"/></g></svg>
<div style="left:288px;top:306px;width:9px;height:9px;background:linear-gradient(#8aa8d8,#6a8cc4);border:1px solid #5a78b0;border-radius:2px;box-sizing:border-box"></div>
<div style="left:292px;top:308px;width:1px;height:1px;background:#fff;"></div>
<div style="left:292px;top:310px;width:1px;height:4px;background:#fff;"></div>
<div style="left:946px;top:306px;width:10px;height:9px;background:linear-gradient(#8aa8d8,#6a8cc4);border:1px solid #5a78b0;border-radius:2px;box-sizing:border-box"></div>
<div style="left:950px;top:308px;width:2px;height:1px;background:#fff;"></div>
<div style="left:950px;top:310px;width:2px;height:4px;background:#fff;"></div>
<div style="left:288px;top:463px;width:9px;height:9px;background:linear-gradient(#8aa8d8,#6a8cc4);border:1px solid #5a78b0;border-radius:2px;box-sizing:border-box"></div>
<div style="left:292px;top:465px;width:1px;height:1px;background:#fff;"></div>
<div style="left:292px;top:467px;width:1px;height:4px;background:#fff;"></div>
<div style="left:946px;top:463px;width:10px;height:9px;background:linear-gradient(#8aa8d8,#6a8cc4);border:1px solid #5a78b0;border-radius:2px;box-sizing:border-box"></div>
<div style="left:950px;top:465px;width:2px;height:1px;background:#fff;"></div>
<div style="left:950px;top:467px;width:2px;height:4px;background:#fff;"></div>
<div style="left:333px;top:297px;width:1px;height:228px;background:#3030e8;"></div>
<svg style="position:absolute;left:329.5px;top:296.6px;" width="8" height="4" viewBox="0 0 8 4"><path d="M0 0H8L4 3.8Z" fill="#2020d0"/></svg>
<svg style="position:absolute;left:329.5px;top:522px;" width="8" height="4" viewBox="0 0 8 4"><path d="M0 4H8L4 0.2Z" fill="#2020d0"/></svg>
<div style="left:5px;top:527px;width:1189px;height:1px;background:#a4a8b4;"></div>
<div style="left:6px;top:528px;width:1188px;height:13px;background:linear-gradient(#e8e8e8,#f0f0f0 60%,#ececec)"></div>
<svg style="position:absolute;left:8.5px;top:532.2px;" width="3.5" height="5" viewBox="0 0 3.5 5"><path d="M3.3 0V5L0 2.5Z" fill="#444"/></svg>
<svg style="position:absolute;left:1187.5px;top:532.2px;" width="3.5" height="5" viewBox="0 0 3.5 5"><path d="M0 0V5L3.3 2.5Z" fill="#444"/></svg>
<div style="left:962px;top:529px;width:10px;height:9px;background:linear-gradient(#f8f8f8,#d8d8d8);border:1px solid #a8a8a8;border-radius:2px;box-sizing:border-box"></div>
<div style="left:5px;top:541px;width:1189px;height:10px;background:#ababab;"></div>
<div class="t" style="left:10px;top:541.46px;font-size:7.6px;line-height:11px;color:#ececec;font-family:'Liberation Sans',sans-serif;transform:scaleX(0.820);transform-origin:left;">CPU Load</div>
<div class="t" style="left:43.75px;top:541.46px;font-size:7.6px;line-height:11px;color:#ececec;font-family:'Liberation Sans',sans-serif;transform:scaleX(0.886);transform-origin:left;">Number of bins: 50, Bin width: 100.0 us</div>
<div style="left:6px;top:551px;width:111px;height:167px;background:#d8d8d8;"></div>
<div style="left:6px;top:551px;width:110px;height:18px;background:#f0f0f0;"></div>
<div style="left:104px;top:552px;width:11px;height:17px;background:linear-gradient(#dcaa40,#b07a08);"></div>
<div class="t" style="left:31.5px;top:555.09px;font-size:7.8px;line-height:11px;color:#111;font-family:'Liberation Sans',sans-serif;transform:scaleX(0.715);transform-origin:left;">ETH_RX</div>
<div style="left:6px;top:569px;width:110px;height:19px;background:#f0f0f0;"></div>
<div style="left:104px;top:570px;width:11px;height:17px;background:linear-gradient(#f27a22,#c24e0c);"></div>
<div class="t" style="left:31.5px;top:573.69px;font-size:7.8px;line-height:11px;color:#111;font-family:'Liberation Sans',sans-serif;transform:scaleX(0.712);transform-origin:left;">ETH_TX</div>
<div style="left:6px;top:588px;width:110px;height:19px;background:#f0f0f0;"></div>
<div style="left:104px;top:589px;width:11px;height:17px;background:linear-gradient(#d8263a,#b41a2a);"></div>
<div class="t" style="left:31.5px;top:592.29px;font-size:7.8px;line-height:11px;color:#111;font-family:'Liberation Sans',sans-serif;transform:scaleX(0.789);transform-origin:left;">SysTick</div>
<div style="left:6px;top:607px;width:110px;height:18px;background:#f0f0f0;"></div>
<div style="left:104px;top:607px;width:11px;height:17px;background:linear-gradient(#5a5a5a,#0c0c0c);"></div>
<div class="t" style="left:31.5px;top:610.89px;font-size:7.8px;line-height:11px;color:#111;font-family:'Liberation Sans',sans-serif;transform:scaleX(0.820);transform-origin:left;">Scheduler</div>
<div style="left:6px;top:625px;width:110px;height:19px;background:#f0f0f0;"></div>
<div style="left:104px;top:626px;width:11px;height:17px;background:linear-gradient(#c6eabd,#82d07a);"></div>
<div class="t" style="left:31.5px;top:629.49px;font-size:7.8px;line-height:11px;color:#111;font-family:'Liberation Sans',sans-serif;transform:scaleX(0.829);transform-origin:left;">IP_Task</div>
<div style="left:6px;top:644px;width:110px;height:18px;background:#f0f0f0;"></div>
<div style="left:104px;top:645px;width:11px;height:17px;background:linear-gradient(#b6e6d8,#7ecdb4);"></div>
<div class="t" style="left:31.5px;top:648.09px;font-size:7.8px;line-height:11px;color:#111;font-family:'Liberation Sans',sans-serif;transform:scaleX(0.852);transform-origin:left;">IP_WebServer</div>
<div style="left:6px;top:662px;width:110px;height:19px;background:#f0f0f0;"></div>
<div style="left:104px;top:663px;width:11px;height:17px;background:linear-gradient(#dae2c8,#b8c496);"></div>
<div class="t" style="left:31.5px;top:666.69px;font-size:7.8px;line-height:11px;color:#111;font-family:'Liberation Sans',sans-serif;transform:scaleX(0.843);transform-origin:left;">Webserver Child</div>
<div style="left:6px;top:681px;width:110px;height:19px;background:#f0f0f0;"></div>
<div style="left:104px;top:682px;width:11px;height:17px;background:linear-gradient(#aec8f0,#7aa2dc);"></div>
<div class="t" style="left:31.5px;top:685.29px;font-size:7.8px;line-height:11px;color:#111;font-family:'Liberation Sans',sans-serif;transform:scaleX(0.843);transform-origin:left;">Webserver Child</div>
<div style="left:6px;top:700px;width:110px;height:18px;background:#f0f0f0;"></div>
<div style="left:104px;top:700px;width:11px;height:17px;background:linear-gradient(#ffffff,#ffffff);"></div>
<div class="t" style="left:31.5px;top:703.89px;font-size:7.8px;line-height:11px;color:#111;font-family:'Liberation Sans',sans-serif;transform:scaleX(0.875);transform-origin:left;">Idle</div>
<div style="left:6px;top:569px;width:110px;height:1px;background:#a8a8a8;"></div>
<div style="left:6px;top:587px;width:110px;height:1px;background:#a8a8a8;"></div>
<div style="left:6px;top:606px;width:110px;height:1px;background:#a8a8a8;"></div>
<div style="left:6px;top:625px;width:110px;height:1px;background:#a8a8a8;"></div>
<div style="left:6px;top:643px;width:110px;height:1px;background:#a8a8a8;"></div>
<div style="left:6px;top:662px;width:110px;height:1px;background:#a8a8a8;"></div>
<div style="left:6px;top:680px;width:110px;height:1px;background:#a8a8a8;"></div>
<div style="left:6px;top:699px;width:110px;height:1px;background:#a8a8a8;"></div>
<div style="left:6px;top:718px;width:110px;height:1px;background:#a8a8a8;"></div>
<div style="left:117px;top:551px;width:1076px;height:167px;background:#ffffff;"></div>
<div style="left:118px;top:584px;width:21px;height:134px;background:linear-gradient(#c6eabd,#82d07a);box-shadow:inset 1px 0 0 rgba(70,75,55,0.38),inset -1px 0 0 rgba(70,75,55,0.38),inset 0 1px 0 rgba(40,40,20,0.2),inset 0 -1px 0 rgba(40,40,20,0.15)"></div>
<div style="left:118px;top:551px;width:21px;height:33px;background:linear-gradient(#f27a22,#c24e0c);box-shadow:inset 1px 0 0 rgba(70,75,55,0.38),inset -1px 0 0 rgba(70,75,55,0.38),inset 0 1px 0 rgba(40,40,20,0.2),inset 0 -1px 0 rgba(40,40,20,0.15)"></div>
<div style="left:139px;top:622px;width:22px;height:96px;background:linear-gradient(#c6eabd,#82d07a);box-shadow:inset 1px 0 0 rgba(70,75,55,0.38),inset -1px 0 0 rgba(70,75,55,0.38),inset 0 1px 0 rgba(40,40,20,0.2),inset 0 -1px 0 rgba(40,40,20,0.15)"></div>
<div style="left:139px;top:612px;width:22px;height:10px;background:linear-gradient(#5a5a5a,#0c0c0c);box-shadow:inset 1px 0 0 rgba(70,75,55,0.38),inset -1px 0 0 rgba(70,75,55,0.38),inset 0 1px 0 rgba(40,40,20,0.2),inset 0 -1px 0 rgba(40,40,20,0.15)"></div>
<div style="left:161px;top:702px;width:21px;height:16px;background:linear-gradient(#c6eabd,#82d07a);box-shadow:inset 1px 0 0 rgba(70,75,55,0.38),inset -1px 0 0 rgba(70,75,55,0.38),inset 0 1px 0 rgba(40,40,20,0.2),inset 0 -1px 0 rgba(40,40,20,0.15)"></div>
<div style="left:161px;top:691px;width:21px;height:11px;background:linear-gradient(#5a5a5a,#0c0c0c);box-shadow:inset 1px 0 0 rgba(70,75,55,0.38),inset -1px 0 0 rgba(70,75,55,0.38),inset 0 1px 0 rgba(40,40,20,0.2),inset 0 -1px 0 rgba(40,40,20,0.15)"></div>
<div style="left:161px;top:629px;width:21px;height:62px;background:linear-gradient(#dcaa40,#b07a08);box-shadow:inset 1px 0 0 rgba(70,75,55,0.38),inset -1px 0 0 rgba(70,75,55,0.38),inset 0 1px 0 rgba(40,40,20,0.2),inset 0 -1px 0 rgba(40,40,20,0.15)"></div>
<div style="left:182px;top:616px;width:22px;height:102px;background:linear-gradient(#c6eabd,#82d07a);box-shadow:inset 1px 0 0 rgba(70,75,55,0.38),inset -1px 0 0 rgba(70,75,55,0.38),inset 0 1px 0 rgba(40,40,20,0.2),inset 0 -1px 0 rgba(40,40,20,0.15)"></div>
<div style="left:182px;top:551px;width:22px;height:65px;background:linear-gradient(#dcaa40,#b07a08);box-shadow:inset 1px 0 0 rgba(70,75,55,0.38),inset -1px 0 0 rgba(70,75,55,0.38),inset 0 1px 0 rgba(40,40,20,0.2),inset 0 -1px 0 rgba(40,40,20,0.15)"></div>
<div style="left:204px;top:698px;width:21px;height:20px;background:linear-gradient(#b6e6d8,#7ecdb4);box-shadow:inset 1px 0 0 rgba(70,75,55,0.38),inset -1px 0 0 rgba(70,75,55,0.38),inset 0 1px 0 rgba(40,40,20,0.2),inset 0 -1px 0 rgba(40,40,20,0.15)"></div>
<div style="left:204px;top:562px;width:21px;height:136px;background:linear-gradient(#c6eabd,#82d07a);box-shadow:inset 1px 0 0 rgba(70,75,55,0.38),inset -1px 0 0 rgba(70,75,55,0.38),inset 0 1px 0 rgba(40,40,20,0.2),inset 0 -1px 0 rgba(40,40,20,0.15)"></div>
<div style="left:204px;top:551px;width:21px;height:11px;background:linear-gradient(#5a5a5a,#0c0c0c);box-shadow:inset 1px 0 0 rgba(70,75,55,0.38),inset -1px 0 0 rgba(70,75,55,0.38),inset 0 1px 0 rgba(40,40,20,0.2),inset 0 -1px 0 rgba(40,40,20,0.15)"></div>
<div style="left:225px;top:551px;width:22px;height:167px;background:linear-gradient(#b6e6d8,#7ecdb4);box-shadow:inset 1px 0 0 rgba(70,75,55,0.38),inset -1px 0 0 rgba(70,75,55,0.38),inset 0 1px 0 rgba(40,40,20,0.2),inset 0 -1px 0 rgba(40,40,20,0.15)"></div>
<div style="left:247px;top:650px;width:21px;height:68px;background:linear-gradient(#dae2c8,#b8c496);box-shadow:inset 1px 0 0 rgba(70,75,55,0.38),inset -1px 0 0 rgba(70,75,55,0.38),inset 0 1px 0 rgba(40,40,20,0.2),inset 0 -1px 0 rgba(40,40,20,0.15)"></div>
<div style="left:247px;top:561px;width:21px;height:89px;background:linear-gradient(#b6e6d8,#7ecdb4);box-shadow:inset 1px 0 0 rgba(70,75,55,0.38),inset -1px 0 0 rgba(70,75,55,0.38),inset 0 1px 0 rgba(40,40,20,0.2),inset 0 -1px 0 rgba(40,40,20,0.15)"></div>
<div style="left:247px;top:551px;width:21px;height:10px;background:linear-gradient(#5a5a5a,#0c0c0c);box-shadow:inset 1px 0 0 rgba(70,75,55,0.38),inset -1px 0 0 rgba(70,75,55,0.38),inset 0 1px 0 rgba(40,40,20,0.2),inset 0 -1px 0 rgba(40,40,20,0.15)"></div>
<div style="left:268px;top:559px;width:22px;height:159px;background:linear-gradient(#dae2c8,#b8c496);box-shadow:inset 1px 0 0 rgba(70,75,55,0.38),inset -1px 0 0 rgba(70,75,55,0.38),inset 0 1px 0 rgba(40,40,20,0.2),inset 0 -1px 0 rgba(40,40,20,0.15)"></div>
<div style="left:268px;top:551px;width:22px;height:8px;background:linear-gradient(#d8263a,#b41a2a);box-shadow:inset 1px 0 0 rgba(70,75,55,0.38),inset -1px 0 0 rgba(70,75,55,0.38),inset 0 1px 0 rgba(40,40,20,0.2),inset 0 -1px 0 rgba(40,40,20,0.15)"></div>
<div style="left:290px;top:551px;width:21px;height:167px;background:linear-gradient(#dae2c8,#b8c496);box-shadow:inset 1px 0 0 rgba(70,75,55,0.38),inset -1px 0 0 rgba(70,75,55,0.38),inset 0 1px 0 rgba(40,40,20,0.2),inset 0 -1px 0 rgba(40,40,20,0.15)"></div>
<div style="left:311px;top:551px;width:22px;height:167px;background:linear-gradient(#dae2c8,#b8c496);box-shadow:inset 1px 0 0 rgba(70,75,55,0.38),inset -1px 0 0 rgba(70,75,55,0.38),inset 0 1px 0 rgba(40,40,20,0.2),inset 0 -1px 0 rgba(40,40,20,0.15)"></div>
<div style="left:333px;top:634px;width:21px;height:84px;background:linear-gradient(#dae2c8,#b8c496);box-shadow:inset 1px 0 0 rgba(70,75,55,0.38),inset -1px 0 0 rgba(70,75,55,0.38),inset 0 1px 0 rgba(40,40,20,0.2),inset 0 -1px 0 rgba(40,40,20,0.15)"></div>
<div style="left:333px;top:573px;width:21px;height:61px;background:linear-gradient(#c6eabd,#82d07a);box-shadow:inset 1px 0 0 rgba(70,75,55,0.38),inset -1px 0 0 rgba(70,75,55,0.38),inset 0 1px 0 rgba(40,40,20,0.2),inset 0 -1px 0 rgba(40,40,20,0.15)"></div>
<div style="left:333px;top:551px;width:21px;height:22px;background:linear-gradient(#5a5a5a,#0c0c0c);box-shadow:inset 1px 0 0 rgba(70,75,55,0.38),inset -1px 0 0 rgba(70,75,55,0.38),inset 0 1px 0 rgba(40,40,20,0.2),inset 0 -1px 0 rgba(40,40,20,0.15)"></div>
<div style="left:354px;top:551px;width:22px;height:167px;background:linear-gradient(#dae2c8,#b8c496);box-shadow:inset 1px 0 0 rgba(70,75,55,0.38),inset -1px 0 0 rgba(70,75,55,0.38),inset 0 1px 0 rgba(40,40,20,0.2),inset 0 -1px 0 rgba(40,40,20,0.15)"></div>
<div style="left:376px;top:551px;width:21px;height:167px;background:linear-gradient(#dae2c8,#b8c496);box-shadow:inset 1px 0 0 rgba(70,75,55,0.38),inset -1px 0 0 rgba(70,75,55,0.38),inset 0 1px 0 rgba(40,40,20,0.2),inset 0 -1px 0 rgba(40,40,20,0.15)"></div>
<div style="left:397px;top:566px;width:22px;height:152px;background:linear-gradient(#dae2c8,#b8c496);box-shadow:inset 1px 0 0 rgba(70,75,55,0.38),inset -1px 0 0 rgba(70,75,55,0.38),inset 0 1px 0 rgba(40,40,20,0.2),inset 0 -1px 0 rgba(40,40,20,0.15)"></div>
<div style="left:397px;top:551px;width:22px;height:15px;background:linear-gradient(#f27a22,#c24e0c);box-shadow:inset 1px 0 0 rgba(70,75,55,0.38),inset -1px 0 0 rgba(70,75,55,0.38),inset 0 1px 0 rgba(40,40,20,0.2),inset 0 -1px 0 rgba(40,40,20,0.15)"></div>
<div style="left:419px;top:551px;width:21px;height:167px;background:linear-gradient(#dae2c8,#b8c496);box-shadow:inset 1px 0 0 rgba(70,75,55,0.38),inset -1px 0 0 rgba(70,75,55,0.38),inset 0 1px 0 rgba(40,40,20,0.2),inset 0 -1px 0 rgba(40,40,20,0.15)"></div>
<div style="left:440px;top:551px;width:22px;height:167px;background:linear-gradient(#dae2c8,#b8c496);box-shadow:inset 1px 0 0 rgba(70,75,55,0.38),inset -1px 0 0 rgba(70,75,55,0.38),inset 0 1px 0 rgba(40,40,20,0.2),inset 0 -1px 0 rgba(40,40,20,0.15)"></div>
<div style="left:462px;top:566px;width:21px;height:152px;background:linear-gradient(#dae2c8,#b8c496);box-shadow:inset 1px 0 0 rgba(70,75,55,0.38),inset -1px 0 0 rgba(70,75,55,0.38),inset 0 1px 0 rgba(40,40,20,0.2),inset 0 -1px 0 rgba(40,40,20,0.15)"></div>
<div style="left:462px;top:551px;width:21px;height:15px;background:linear-gradient(#f27a22,#c24e0c);box-shadow:inset 1px 0 0 rgba(70,75,55,0.38),inset -1px 0 0 rgba(70,75,55,0.38),inset 0 1px 0 rgba(40,40,20,0.2),inset 0 -1px 0 rgba(40,40,20,0.15)"></div>
<div style="left:483px;top:612px;width:22px;height:106px;background:linear-gradient(#dae2c8,#b8c496);box-shadow:inset 1px 0 0 rgba(70,75,55,0.38),inset -1px 0 0 rgba(70,75,55,0.38),inset 0 1px 0 rgba(40,40,20,0.2),inset 0 -1px 0 rgba(40,40,20,0.15)"></div>
<div style="left:483px;top:607px;width:22px;height:5px;background:linear-gradient(#c6eabd,#82d07a);box-shadow:inset 1px 0 0 rgba(70,75,55,0.38),inset -1px 0 0 rgba(70,75,55,0.38),inset 0 1px 0 rgba(40,40,20,0.2),inset 0 -1px 0 rgba(40,40,20,0.15)"></div>
<div style="left:483px;top:594px;width:22px;height:13px;background:linear-gradient(#5a5a5a,#0c0c0c);box-shadow:inset 1px 0 0 rgba(70,75,55,0.38),inset -1px 0 0 rgba(70,75,55,0.38),inset 0 1px 0 rgba(40,40,20,0.2),inset 0 -1px 0 rgba(40,40,20,0.15)"></div>
<div style="left:483px;top:586px;width:22px;height:8px;background:linear-gradient(#d8263a,#b41a2a);box-shadow:inset 1px 0 0 rgba(70,75,55,0.38),inset -1px 0 0 rgba(70,75,55,0.38),inset 0 1px 0 rgba(40,40,20,0.2),inset 0 -1px 0 rgba(40,40,20,0.15)"></div>
<div style="left:483px;top:551px;width:22px;height:35px;background:linear-gradient(#f27a22,#c24e0c);box-shadow:inset 1px 0 0 rgba(70,75,55,0.38),inset -1px 0 0 rgba(70,75,55,0.38),inset 0 1px 0 rgba(40,40,20,0.2),inset 0 -1px 0 rgba(40,40,20,0.15)"></div>
<div style="left:505px;top:640px;width:21px;height:78px;background:linear-gradient(#c6eabd,#82d07a);box-shadow:inset 1px 0 0 rgba(70,75,55,0.38),inset -1px 0 0 rgba(70,75,55,0.38),inset 0 1px 0 rgba(40,40,20,0.2),inset 0 -1px 0 rgba(40,40,20,0.15)"></div>
<div style="left:505px;top:608px;width:21px;height:32px;background:linear-gradient(#f27a22,#c24e0c);box-shadow:inset 1px 0 0 rgba(70,75,55,0.38),inset -1px 0 0 rgba(70,75,55,0.38),inset 0 1px 0 rgba(40,40,20,0.2),inset 0 -1px 0 rgba(40,40,20,0.15)"></div>
<div style="left:505px;top:551px;width:21px;height:57px;background:linear-gradient(#dcaa40,#b07a08);box-shadow:inset 1px 0 0 rgba(70,75,55,0.38),inset -1px 0 0 rgba(70,75,55,0.38),inset 0 1px 0 rgba(40,40,20,0.2),inset 0 -1px 0 rgba(40,40,20,0.15)"></div>
<div style="left:526px;top:608px;width:22px;height:110px;background:linear-gradient(#c6eabd,#82d07a);box-shadow:inset 1px 0 0 rgba(70,75,55,0.38),inset -1px 0 0 rgba(70,75,55,0.38),inset 0 1px 0 rgba(40,40,20,0.2),inset 0 -1px 0 rgba(40,40,20,0.15)"></div>
<div style="left:526px;top:551px;width:22px;height:57px;background:linear-gradient(#dcaa40,#b07a08);box-shadow:inset 1px 0 0 rgba(70,75,55,0.38),inset -1px 0 0 rgba(70,75,55,0.38),inset 0 1px 0 rgba(40,40,20,0.2),inset 0 -1px 0 rgba(40,40,20,0.15)"></div>
<div style="left:548px;top:560px;width:22px;height:158px;background:linear-gradient(#c6eabd,#82d07a);box-shadow:inset 1px 0 0 rgba(70,75,55,0.38),inset -1px 0 0 rgba(70,75,55,0.38),inset 0 1px 0 rgba(40,40,20,0.2),inset 0 -1px 0 rgba(40,40,20,0.15)"></div>
<div style="left:548px;top:551px;width:22px;height:9px;background:linear-gradient(#5a5a5a,#0c0c0c);box-shadow:inset 1px 0 0 rgba(70,75,55,0.38),inset -1px 0 0 rgba(70,75,55,0.38),inset 0 1px 0 rgba(40,40,20,0.2),inset 0 -1px 0 rgba(40,40,20,0.15)"></div>
<div style="left:570px;top:630px;width:21px;height:88px;background:linear-gradient(#dae2c8,#b8c496);box-shadow:inset 1px 0 0 rgba(70,75,55,0.38),inset -1px 0 0 rgba(70,75,55,0.38),inset 0 1px 0 rgba(40,40,20,0.2),inset 0 -1px 0 rgba(40,40,20,0.15)"></div>
<div style="left:570px;top:619px;width:21px;height:11px;background:linear-gradient(#5a5a5a,#0c0c0c);box-shadow:inset 1px 0 0 rgba(70,75,55,0.38),inset -1px 0 0 rgba(70,75,55,0.38),inset 0 1px 0 rgba(40,40,20,0.2),inset 0 -1px 0 rgba(40,40,20,0.15)"></div>
<div style="left:699px;top:640px;width:21px;height:78px;background:linear-gradient(#c6eabd,#82d07a);box-shadow:inset 1px 0 0 rgba(70,75,55,0.38),inset -1px 0 0 rgba(70,75,55,0.38),inset 0 1px 0 rgba(40,40,20,0.2),inset 0 -1px 0 rgba(40,40,20,0.15)"></div>
<div style="left:699px;top:621px;width:21px;height:19px;background:linear-gradient(#5a5a5a,#0c0c0c);box-shadow:inset 1px 0 0 rgba(70,75,55,0.38),inset -1px 0 0 rgba(70,75,55,0.38),inset 0 1px 0 rgba(40,40,20,0.2),inset 0 -1px 0 rgba(40,40,20,0.15)"></div>
<div style="left:699px;top:613px;width:21px;height:8px;background:linear-gradient(#d8263a,#b41a2a);box-shadow:inset 1px 0 0 rgba(70,75,55,0.38),inset -1px 0 0 rgba(70,75,55,0.38),inset 0 1px 0 rgba(40,40,20,0.2),inset 0 -1px 0 rgba(40,40,20,0.15)"></div>
<div style="left:720px;top:715px;width:22px;height:3px;background:linear-gradient(#c6eabd,#82d07a);box-shadow:inset 1px 0 0 rgba(70,75,55,0.38),inset -1px 0 0 rgba(70,75,55,0.38),inset 0 1px 0 rgba(40,40,20,0.2),inset 0 -1px 0 rgba(40,40,20,0.15)"></div>
<div style="left:720px;top:704px;width:22px;height:11px;background:linear-gradient(#5a5a5a,#0c0c0c);box-shadow:inset 1px 0 0 rgba(70,75,55,0.38),inset -1px 0 0 rgba(70,75,55,0.38),inset 0 1px 0 rgba(40,40,20,0.2),inset 0 -1px 0 rgba(40,40,20,0.15)"></div>
<div style="left:892px;top:688px;width:22px;height:30px;background:linear-gradient(#c6eabd,#82d07a);box-shadow:inset 1px 0 0 rgba(70,75,55,0.38),inset -1px 0 0 rgba(70,75,55,0.38),inset 0 1px 0 rgba(40,40,20,0.2),inset 0 -1px 0 rgba(40,40,20,0.15)"></div>
<div style="left:892px;top:676px;width:22px;height:12px;background:linear-gradient(#5a5a5a,#0c0c0c);box-shadow:inset 1px 0 0 rgba(70,75,55,0.38),inset -1px 0 0 rgba(70,75,55,0.38),inset 0 1px 0 rgba(40,40,20,0.2),inset 0 -1px 0 rgba(40,40,20,0.15)"></div>
<div style="left:892px;top:607px;width:22px;height:69px;background:linear-gradient(#dcaa40,#b07a08);box-shadow:inset 1px 0 0 rgba(70,75,55,0.38),inset -1px 0 0 rgba(70,75,55,0.38),inset 0 1px 0 rgba(40,40,20,0.2),inset 0 -1px 0 rgba(40,40,20,0.15)"></div>
<div style="left:914px;top:682px;width:21px;height:36px;background:linear-gradient(#dae2c8,#b8c496);box-shadow:inset 1px 0 0 rgba(70,75,55,0.38),inset -1px 0 0 rgba(70,75,55,0.38),inset 0 1px 0 rgba(40,40,20,0.2),inset 0 -1px 0 rgba(40,40,20,0.15)"></div>
<div style="left:914px;top:570px;width:21px;height:112px;background:linear-gradient(#c6eabd,#82d07a);box-shadow:inset 1px 0 0 rgba(70,75,55,0.38),inset -1px 0 0 rgba(70,75,55,0.38),inset 0 1px 0 rgba(40,40,20,0.2),inset 0 -1px 0 rgba(40,40,20,0.15)"></div>
<div style="left:914px;top:559px;width:21px;height:11px;background:linear-gradient(#5a5a5a,#0c0c0c);box-shadow:inset 1px 0 0 rgba(70,75,55,0.38),inset -1px 0 0 rgba(70,75,55,0.38),inset 0 1px 0 rgba(40,40,20,0.2),inset 0 -1px 0 rgba(40,40,20,0.15)"></div>
<div style="left:914px;top:551px;width:21px;height:8px;background:linear-gradient(#d8263a,#b41a2a);box-shadow:inset 1px 0 0 rgba(70,75,55,0.38),inset -1px 0 0 rgba(70,75,55,0.38),inset 0 1px 0 rgba(40,40,20,0.2),inset 0 -1px 0 rgba(40,40,20,0.15)"></div>
<div style="left:935px;top:551px;width:22px;height:167px;background:linear-gradient(#dae2c8,#b8c496);box-shadow:inset 1px 0 0 rgba(70,75,55,0.38),inset -1px 0 0 rgba(70,75,55,0.38),inset 0 1px 0 rgba(40,40,20,0.2),inset 0 -1px 0 rgba(40,40,20,0.15)"></div>
<div style="left:957px;top:551px;width:21px;height:167px;background:linear-gradient(#dae2c8,#b8c496);box-shadow:inset 1px 0 0 rgba(70,75,55,0.38),inset -1px 0 0 rgba(70,75,55,0.38),inset 0 1px 0 rgba(40,40,20,0.2),inset 0 -1px 0 rgba(40,40,20,0.15)"></div>
<div style="left:978px;top:551px;width:22px;height:167px;background:linear-gradient(#dae2c8,#b8c496);box-shadow:inset 1px 0 0 rgba(70,75,55,0.38),inset -1px 0 0 rgba(70,75,55,0.38),inset 0 1px 0 rgba(40,40,20,0.2),inset 0 -1px 0 rgba(40,40,20,0.15)"></div>
<div style="left:1000px;top:636px;width:21px;height:82px;background:linear-gradient(#dae2c8,#b8c496);box-shadow:inset 1px 0 0 rgba(70,75,55,0.38),inset -1px 0 0 rgba(70,75,55,0.38),inset 0 1px 0 rgba(40,40,20,0.2),inset 0 -1px 0 rgba(40,40,20,0.15)"></div>
<div style="left:1000px;top:572px;width:21px;height:64px;background:linear-gradient(#c6eabd,#82d07a);box-shadow:inset 1px 0 0 rgba(70,75,55,0.38),inset -1px 0 0 rgba(70,75,55,0.38),inset 0 1px 0 rgba(40,40,20,0.2),inset 0 -1px 0 rgba(40,40,20,0.15)"></div>
<div style="left:1000px;top:551px;width:21px;height:21px;background:linear-gradient(#5a5a5a,#0c0c0c);box-shadow:inset 1px 0 0 rgba(70,75,55,0.38),inset -1px 0 0 rgba(70,75,55,0.38),inset 0 1px 0 rgba(40,40,20,0.2),inset 0 -1px 0 rgba(40,40,20,0.15)"></div>
<div style="left:1021px;top:551px;width:22px;height:167px;background:linear-gradient(#dae2c8,#b8c496);box-shadow:inset 1px 0 0 rgba(70,75,55,0.38),inset -1px 0 0 rgba(70,75,55,0.38),inset 0 1px 0 rgba(40,40,20,0.2),inset 0 -1px 0 rgba(40,40,20,0.15)"></div>
<div style="left:1043px;top:560px;width:21px;height:158px;background:linear-gradient(#dae2c8,#b8c496);box-shadow:inset 1px 0 0 rgba(70,75,55,0.38),inset -1px 0 0 rgba(70,75,55,0.38),inset 0 1px 0 rgba(40,40,20,0.2),inset 0 -1px 0 rgba(40,40,20,0.15)"></div>
<div style="left:1043px;top:551px;width:21px;height:9px;background:linear-gradient(#f27a22,#c24e0c);box-shadow:inset 1px 0 0 rgba(70,75,55,0.38),inset -1px 0 0 rgba(70,75,55,0.38),inset 0 1px 0 rgba(40,40,20,0.2),inset 0 -1px 0 rgba(40,40,20,0.15)"></div>
<div style="left:1064px;top:557px;width:22px;height:161px;background:linear-gradient(#dae2c8,#b8c496);box-shadow:inset 1px 0 0 rgba(70,75,55,0.38),inset -1px 0 0 rgba(70,75,55,0.38),inset 0 1px 0 rgba(40,40,20,0.2),inset 0 -1px 0 rgba(40,40,20,0.15)"></div>
<div style="left:1064px;top:551px;width:22px;height:6px;background:linear-gradient(#f27a22,#c24e0c);box-shadow:inset 1px 0 0 rgba(70,75,55,0.38),inset -1px 0 0 rgba(70,75,55,0.38),inset 0 1px 0 rgba(40,40,20,0.2),inset 0 -1px 0 rgba(40,40,20,0.15)"></div>
<div style="left:1086px;top:551px;width:22px;height:167px;background:linear-gradient(#dae2c8,#b8c496);box-shadow:inset 1px 0 0 rgba(70,75,55,0.38),inset -1px 0 0 rgba(70,75,55,0.38),inset 0 1px 0 rgba(40,40,20,0.2),inset 0 -1px 0 rgba(40,40,20,0.15)"></div>
<div style="left:1108px;top:568px;width:21px;height:150px;background:linear-gradient(#dae2c8,#b8c496);box-shadow:inset 1px 0 0 rgba(70,75,55,0.38),inset -1px 0 0 rgba(70,75,55,0.38),inset 0 1px 0 rgba(40,40,20,0.2),inset 0 -1px 0 rgba(40,40,20,0.15)"></div>
<div style="left:1108px;top:551px;width:21px;height:17px;background:linear-gradient(#f27a22,#c24e0c);box-shadow:inset 1px 0 0 rgba(70,75,55,0.38),inset -1px 0 0 rgba(70,75,55,0.38),inset 0 1px 0 rgba(40,40,20,0.2),inset 0 -1px 0 rgba(40,40,20,0.15)"></div>
<div style="left:1129px;top:640px;width:22px;height:78px;background:linear-gradient(#dae2c8,#b8c496);box-shadow:inset 1px 0 0 rgba(70,75,55,0.38),inset -1px 0 0 rgba(70,75,55,0.38),inset 0 1px 0 rgba(40,40,20,0.2),inset 0 -1px 0 rgba(40,40,20,0.15)"></div>
<div style="left:1129px;top:620px;width:22px;height:20px;background:linear-gradient(#c6eabd,#82d07a);box-shadow:inset 1px 0 0 rgba(70,75,55,0.38),inset -1px 0 0 rgba(70,75,55,0.38),inset 0 1px 0 rgba(40,40,20,0.2),inset 0 -1px 0 rgba(40,40,20,0.15)"></div>
<div style="left:1129px;top:592px;width:22px;height:28px;background:linear-gradient(#5a5a5a,#0c0c0c);box-shadow:inset 1px 0 0 rgba(70,75,55,0.38),inset -1px 0 0 rgba(70,75,55,0.38),inset 0 1px 0 rgba(40,40,20,0.2),inset 0 -1px 0 rgba(40,40,20,0.15)"></div>
<div style="left:1129px;top:585px;width:22px;height:7px;background:linear-gradient(#d8263a,#b41a2a);box-shadow:inset 1px 0 0 rgba(70,75,55,0.38),inset -1px 0 0 rgba(70,75,55,0.38),inset 0 1px 0 rgba(40,40,20,0.2),inset 0 -1px 0 rgba(40,40,20,0.15)"></div>
<div style="left:1129px;top:551px;width:22px;height:34px;background:linear-gradient(#f27a22,#c24e0c);box-shadow:inset 1px 0 0 rgba(70,75,55,0.38),inset -1px 0 0 rgba(70,75,55,0.38),inset 0 1px 0 rgba(40,40,20,0.2),inset 0 -1px 0 rgba(40,40,20,0.15)"></div>
<div style="left:1151px;top:669px;width:21px;height:49px;background:linear-gradient(#dae2c8,#b8c496);box-shadow:inset 1px 0 0 rgba(70,75,55,0.38),inset -1px 0 0 rgba(70,75,55,0.38),inset 0 1px 0 rgba(40,40,20,0.2),inset 0 -1px 0 rgba(40,40,20,0.15)"></div>
<div style="left:1151px;top:632px;width:21px;height:37px;background:linear-gradient(#c6eabd,#82d07a);box-shadow:inset 1px 0 0 rgba(70,75,55,0.38),inset -1px 0 0 rgba(70,75,55,0.38),inset 0 1px 0 rgba(40,40,20,0.2),inset 0 -1px 0 rgba(40,40,20,0.15)"></div>
<div style="left:1151px;top:621px;width:21px;height:11px;background:linear-gradient(#5a5a5a,#0c0c0c);box-shadow:inset 1px 0 0 rgba(70,75,55,0.38),inset -1px 0 0 rgba(70,75,55,0.38),inset 0 1px 0 rgba(40,40,20,0.2),inset 0 -1px 0 rgba(40,40,20,0.15)"></div>
<div style="left:1151px;top:588px;width:21px;height:33px;background:linear-gradient(#f27a22,#c24e0c);box-shadow:inset 1px 0 0 rgba(70,75,55,0.38),inset -1px 0 0 rgba(70,75,55,0.38),inset 0 1px 0 rgba(40,40,20,0.2),inset 0 -1px 0 rgba(40,40,20,0.15)"></div>
<div style="left:1151px;top:551px;width:21px;height:37px;background:linear-gradient(#dcaa40,#b07a08);box-shadow:inset 1px 0 0 rgba(70,75,55,0.38),inset -1px 0 0 rgba(70,75,55,0.38),inset 0 1px 0 rgba(40,40,20,0.2),inset 0 -1px 0 rgba(40,40,20,0.15)"></div>
<div style="left:1172px;top:571px;width:22px;height:147px;background:linear-gradient(#c6eabd,#82d07a);box-shadow:inset 1px 0 0 rgba(70,75,55,0.38),inset -1px 0 0 rgba(70,75,55,0.38),inset 0 1px 0 rgba(40,40,20,0.2),inset 0 -1px 0 rgba(40,40,20,0.15)"></div>
<div style="left:1172px;top:551px;width:22px;height:20px;background:linear-gradient(#dcaa40,#b07a08);box-shadow:inset 1px 0 0 rgba(70,75,55,0.38),inset -1px 0 0 rgba(70,75,55,0.38),inset 0 1px 0 rgba(40,40,20,0.2),inset 0 -1px 0 rgba(40,40,20,0.15)"></div>
<div style="left:5px;top:718px;width:1189px;height:4px;background:#f0f0f0;"></div>
<div style="left:5px;top:722px;width:1189px;height:9px;background:#ababab;"></div>
<div class="t" style="left:10px;top:721.86px;font-size:7.6px;line-height:11px;color:#ececec;font-family:'Liberation Sans',sans-serif;transform:scaleX(0.900);transform-origin:left;">Contexts</div>
<div style="left:6px;top:731px;width:1188px;height:167px;background:#ffffff;"></div>
<div style="left:6px;top:731px;width:1188px;height:14px;background:linear-gradient(#ffffff,#f6f6f6 60%,#eeeeee);border-bottom:1px solid #e2e2e2;box-sizing:border-box"></div>
<div style="left:81px;top:732px;width:1px;height:12px;background:#e4e4e4;"></div>
<div style="left:138px;top:732px;width:1px;height:12px;background:#e4e4e4;"></div>
<div style="left:249px;top:732px;width:1px;height:12px;background:#e4e4e4;"></div>
<div style="left:311px;top:732px;width:1px;height:12px;background:#e4e4e4;"></div>
<div style="left:373px;top:732px;width:1px;height:12px;background:#e4e4e4;"></div>
<div style="left:453px;top:732px;width:1px;height:12px;background:#e4e4e4;"></div>
<div style="left:533px;top:732px;width:1px;height:12px;background:#e4e4e4;"></div>
<div style="left:612px;top:732px;width:1px;height:12px;background:#e4e4e4;"></div>
<div style="left:693px;top:732px;width:1px;height:12px;background:#e4e4e4;"></div>
<div style="left:773px;top:732px;width:1px;height:12px;background:#e4e4e4;"></div>
<div style="left:822px;top:732px;width:1px;height:12px;background:#e4e4e4;"></div>
<div style="left:896px;top:732px;width:1px;height:12px;background:#e4e4e4;"></div>
<div style="left:945px;top:732px;width:1px;height:12px;background:#e4e4e4;"></div>
<div style="left:1018px;top:732px;width:2px;height:12px;background:#e4e4e4;"></div>
<div class="t" style="left:8.3px;top:733.32px;font-size:8px;line-height:11px;color:#111;font-family:'Liberation Sans',sans-serif;transform:scaleX(0.860);transform-origin:left;">Name</div>
<div class="t" style="left:83.3px;top:733.32px;font-size:8px;line-height:11px;color:#111;font-family:'Liberation Sans',sans-serif;transform:scaleX(0.860);transform-origin:left;">Type</div>
<div class="t" style="left:140.7px;top:733.32px;font-size:8px;line-height:11px;color:#111;font-family:'Liberation Sans',sans-serif;transform:scaleX(0.860);transform-origin:left;">Stack Information</div>
<div class="t" style="left:270.05px;top:733.32px;font-size:8px;line-height:11px;color:#111;font-family:'Liberation Sans',sans-serif;transform:scaleX(0.860);transform-origin:right;">Run Count</div>
<div class="t" style="left:332.2px;top:733.32px;font-size:8px;line-height:11px;color:#111;font-family:'Liberation Sans',sans-serif;transform:scaleX(0.860);transform-origin:right;">Frequency</div>
<div class="t" style="left:398.72px;top:733.32px;font-size:8px;line-height:11px;color:#111;font-family:'Liberation Sans',sans-serif;transform:scaleX(0.860);transform-origin:right;">Last Run Time</div>
<div class="t" style="left:480.65px;top:733.32px;font-size:8px;line-height:11px;color:#111;font-family:'Liberation Sans',sans-serif;transform:scaleX(0.860);transform-origin:right;">Min Run Time</div>
<div class="t" style="left:558.43px;top:733.32px;font-size:8px;line-height:11px;color:#111;font-family:'Liberation Sans',sans-serif;transform:scaleX(0.860);transform-origin:right;">Max Run Time</div>
<div class="t" style="left:637.34px;top:733.32px;font-size:8px;line-height:11px;color:#111;font-family:'Liberation Sans',sans-serif;transform:scaleX(0.860);transform-origin:right;">Total Run Time</div>
<div class="t" style="left:730.54px;top:733.32px;font-size:8px;line-height:11px;color:#111;font-family:'Liberation Sans',sans-serif;transform:scaleX(0.860);transform-origin:right;">Run Time/s</div>
<div class="t" style="left:838.23px;top:733.32px;font-size:8px;line-height:11px;color:#111;font-family:'Liberation Sans',sans-serif;transform:scaleX(0.860);transform-origin:right;">Min Run Time/s</div>
<div class="t" style="left:958.91px;top:733.32px;font-size:8px;line-height:11px;color:#111;font-family:'Liberation Sans',sans-serif;transform:scaleX(0.860);transform-origin:right;">Max Run Time/s</div>
<div style="left:6px;top:806px;width:1188px;height:9px;background:linear-gradient(#ececec,#e4e4e4);"></div>
<div style="left:7px;top:746px;width:10px;height:9px;background:linear-gradient(#dcaa40,#b07a08);border:1px solid #8a6010;border-radius:2.5px;box-sizing:border-box"></div>
<div class="t" style="left:22.7px;top:745.02px;font-size:8px;line-height:11px;color:#111;font-family:'Liberation Sans',sans-serif;transform:scaleX(0.860);transform-origin:left;">ETH_RX</div>
<svg style="position:absolute;left:83.3px;top:746.2px;" width="8" height="9" viewBox="0 0 8 9"><path d="M4.6 0.5 L1.6 4.6 L3.9 4.6 L2.2 8.5 L6.6 3.6 L4.3 3.6 L6 0.5Z" fill="#e8e020" stroke="#4a4a10" stroke-width="0.55"/></svg>
<div class="t" style="left:98.3px;top:745.02px;font-size:8px;line-height:11px;color:#111;font-family:'Liberation Sans',sans-serif;transform:scaleX(0.860);transform-origin:left;">#100</div>
<div class="t" style="left:294.95px;top:745.02px;font-size:8px;line-height:11px;color:#111;font-family:'Liberation Sans',sans-serif;transform:scaleX(0.860);transform-origin:right;">188</div>
<div class="t" style="left:353.55px;top:745.02px;font-size:8px;line-height:11px;color:#111;font-family:'Liberation Sans',sans-serif;transform:scaleX(0.860);transform-origin:right;">5 Hz</div>
<div class="t" style="left:413.34px;top:745.02px;font-size:8px;line-height:11px;color:#111;font-family:'Liberation Sans',sans-serif;transform:scaleX(0.860);transform-origin:right;">0.0377 ms</div>
<div class="t" style="left:457.7px;top:745.02px;font-size:8px;line-height:11px;color:#111;font-family:'Liberation Sans',sans-serif;transform:scaleX(0.860);transform-origin:right;">0.0043 ms (#17003)</div>
<div class="t" style="left:537.9px;top:745.02px;font-size:8px;line-height:11px;color:#111;font-family:'Liberation Sans',sans-serif;transform:scaleX(0.860);transform-origin:right;">0.0666 ms (#40414)</div>
<div class="t" style="left:653.34px;top:745.02px;font-size:8px;line-height:11px;color:#111;font-family:'Liberation Sans',sans-serif;transform:scaleX(0.860);transform-origin:right;">6.8120 ms</div>
<div class="t" style="left:732.64px;top:745.02px;font-size:8px;line-height:11px;color:#111;font-family:'Liberation Sans',sans-serif;transform:scaleX(0.860);transform-origin:right;">0.1819 ms</div>
<div class="t" style="left:776px;top:745.02px;font-size:8px;line-height:11px;color:#111;font-family:'Liberation Sans',sans-serif;transform:scaleX(0.860);transform-origin:left;">0.02%</div>
<div class="t" style="left:856.44px;top:745.02px;font-size:8px;line-height:11px;color:#111;font-family:'Liberation Sans',sans-serif;transform:scaleX(0.860);transform-origin:right;">0.1623 ms</div>
<div class="t" style="left:898.6px;top:745.02px;font-size:8px;line-height:11px;color:#111;font-family:'Liberation Sans',sans-serif;transform:scaleX(0.860);transform-origin:left;">0.02%</div>
<div class="t" style="left:979.34px;top:745.02px;font-size:8px;line-height:11px;color:#111;font-family:'Liberation Sans',sans-serif;transform:scaleX(0.860);transform-origin:right;">2.0093 ms</div>
<div class="t" style="left:1022.2px;top:745.02px;font-size:8px;line-height:11px;color:#111;font-family:'Liberation Sans',sans-serif;transform:scaleX(0.860);transform-origin:left;">0.20%</div>
<div style="left:7px;top:756px;width:10px;height:9px;background:linear-gradient(#f27a22,#c24e0c);border:1px solid #9a3c08;border-radius:2.5px;box-sizing:border-box"></div>
<div class="t" style="left:22.7px;top:754.92px;font-size:8px;line-height:11px;color:#111;font-family:'Liberation Sans',sans-serif;transform:scaleX(0.860);transform-origin:left;">ETH_TX</div>
<svg style="position:absolute;left:83.3px;top:756.1px;" width="8" height="9" viewBox="0 0 8 9"><path d="M4.6 0.5 L1.6 4.6 L3.9 4.6 L2.2 8.5 L6.6 3.6 L4.3 3.6 L6 0.5Z" fill="#e8e020" stroke="#4a4a10" stroke-width="0.55"/></svg>
<div class="t" style="left:98.3px;top:754.92px;font-size:8px;line-height:11px;color:#111;font-family:'Liberation Sans',sans-serif;transform:scaleX(0.860);transform-origin:left;">#99</div>
<div class="t" style="left:294.95px;top:754.92px;font-size:8px;line-height:11px;color:#111;font-family:'Liberation Sans',sans-serif;transform:scaleX(0.860);transform-origin:right;">171</div>
<div class="t" style="left:353.55px;top:754.92px;font-size:8px;line-height:11px;color:#111;font-family:'Liberation Sans',sans-serif;transform:scaleX(0.860);transform-origin:right;">2 Hz</div>
<div class="t" style="left:413.34px;top:754.92px;font-size:8px;line-height:11px;color:#111;font-family:'Liberation Sans',sans-serif;transform:scaleX(0.860);transform-origin:right;">0.0198 ms</div>
<div class="t" style="left:457.7px;top:754.92px;font-size:8px;line-height:11px;color:#111;font-family:'Liberation Sans',sans-serif;transform:scaleX(0.860);transform-origin:right;">0.0043 ms (#24643)</div>
<div class="t" style="left:537.9px;top:754.92px;font-size:8px;line-height:11px;color:#111;font-family:'Liberation Sans',sans-serif;transform:scaleX(0.860);transform-origin:right;">0.0577 ms (#36099)</div>
<div class="t" style="left:653.34px;top:754.92px;font-size:8px;line-height:11px;color:#111;font-family:'Liberation Sans',sans-serif;transform:scaleX(0.860);transform-origin:right;">2.8989 ms</div>
<div class="t" style="left:732.64px;top:754.92px;font-size:8px;line-height:11px;color:#111;font-family:'Liberation Sans',sans-serif;transform:scaleX(0.860);transform-origin:right;">0.0430 ms</div>
<div class="t" style="left:776px;top:754.92px;font-size:8px;line-height:11px;color:#111;font-family:'Liberation Sans',sans-serif;transform:scaleX(0.860);transform-origin:left;">0.00%</div>
<div class="t" style="left:856.44px;top:754.92px;font-size:8px;line-height:11px;color:#111;font-family:'Liberation Sans',sans-serif;transform:scaleX(0.860);transform-origin:right;">0.0193 ms</div>
<div class="t" style="left:898.6px;top:754.92px;font-size:8px;line-height:11px;color:#111;font-family:'Liberation Sans',sans-serif;transform:scaleX(0.860);transform-origin:left;">0.00%</div>
<div class="t" style="left:979.34px;top:754.92px;font-size:8px;line-height:11px;color:#111;font-family:'Liberation Sans',sans-serif;transform:scaleX(0.860);transform-origin:right;">0.9596 ms</div>
<div class="t" style="left:1022.2px;top:754.92px;font-size:8px;line-height:11px;color:#111;font-family:'Liberation Sans',sans-serif;transform:scaleX(0.860);transform-origin:left;">0.10%</div>
<div style="left:7px;top:766px;width:10px;height:9px;background:linear-gradient(#d8263a,#b41a2a);border:1px solid #8a1020;border-radius:2.5px;box-sizing:border-box"></div>
<div class="t" style="left:22.7px;top:764.82px;font-size:8px;line-height:11px;color:#111;font-family:'Liberation Sans',sans-serif;transform:scaleX(0.860);transform-origin:left;">SysTick</div>
<svg style="position:absolute;left:83.3px;top:766px;" width="8" height="9" viewBox="0 0 8 9"><path d="M4.6 0.5 L1.6 4.6 L3.9 4.6 L2.2 8.5 L6.6 3.6 L4.3 3.6 L6 0.5Z" fill="#e8e020" stroke="#4a4a10" stroke-width="0.55"/></svg>
<div class="t" style="left:98.3px;top:764.82px;font-size:8px;line-height:11px;color:#111;font-family:'Liberation Sans',sans-serif;transform:scaleX(0.860);transform-origin:left;">#15</div>
<div class="t" style="left:286.05px;top:764.82px;font-size:8px;line-height:11px;color:#111;font-family:'Liberation Sans',sans-serif;transform:scaleX(0.860);transform-origin:right;">10530</div>
<div class="t" style="left:340.2px;top:764.82px;font-size:8px;line-height:11px;color:#111;font-family:'Liberation Sans',sans-serif;transform:scaleX(0.860);transform-origin:right;">1000 Hz</div>
<div class="t" style="left:413.34px;top:764.82px;font-size:8px;line-height:11px;color:#111;font-family:'Liberation Sans',sans-serif;transform:scaleX(0.860);transform-origin:right;">0.0048 ms</div>
<div class="t" style="left:457.7px;top:764.82px;font-size:8px;line-height:11px;color:#111;font-family:'Liberation Sans',sans-serif;transform:scaleX(0.860);transform-origin:right;">0.0046 ms (#17032)</div>
<div class="t" style="left:537.9px;top:764.82px;font-size:8px;line-height:11px;color:#111;font-family:'Liberation Sans',sans-serif;transform:scaleX(0.860);transform-origin:right;">0.0241 ms (#42829)</div>
<div class="t" style="left:648.9px;top:764.82px;font-size:8px;line-height:11px;color:#111;font-family:'Liberation Sans',sans-serif;transform:scaleX(0.860);transform-origin:right;">51.2329 ms</div>
<div class="t" style="left:732.64px;top:764.82px;font-size:8px;line-height:11px;color:#111;font-family:'Liberation Sans',sans-serif;transform:scaleX(0.860);transform-origin:right;">4.8547 ms</div>
<div class="t" style="left:776px;top:764.82px;font-size:8px;line-height:11px;color:#111;font-family:'Liberation Sans',sans-serif;transform:scaleX(0.860);transform-origin:left;">0.49%</div>
<div class="t" style="left:856.44px;top:764.82px;font-size:8px;line-height:11px;color:#111;font-family:'Liberation Sans',sans-serif;transform:scaleX(0.860);transform-origin:right;">4.8540 ms</div>
<div class="t" style="left:898.6px;top:764.82px;font-size:8px;line-height:11px;color:#111;font-family:'Liberation Sans',sans-serif;transform:scaleX(0.860);transform-origin:left;">0.49%</div>
<div class="t" style="left:979.34px;top:764.82px;font-size:8px;line-height:11px;color:#111;font-family:'Liberation Sans',sans-serif;transform:scaleX(0.860);transform-origin:right;">4.9107 ms</div>
<div class="t" style="left:1022.2px;top:764.82px;font-size:8px;line-height:11px;color:#111;font-family:'Liberation Sans',sans-serif;transform:scaleX(0.860);transform-origin:left;">0.49%</div>
<div style="left:7px;top:776px;width:10px;height:9px;background:linear-gradient(#5a5a5a,#0c0c0c);border:1px solid #000000;border-radius:2.5px;box-sizing:border-box"></div>
<div class="t" style="left:22.7px;top:774.72px;font-size:8px;line-height:11px;color:#111;font-family:'Liberation Sans',sans-serif;transform:scaleX(0.860);transform-origin:left;">Scheduler</div>
<svg style="position:absolute;left:83.3px;top:776.2px;" width="9" height="8.4" viewBox="0 0 9 8.4"><path d="M1.4 4 A3.1 3.1 0 0 1 6.6 2" stroke="#111" stroke-width="1.4" fill="none"/><path d="M5.6 0.3 L8.2 2.4 L5.2 3.6Z" fill="#111"/><path d="M7.6 4.4 A3.1 3.1 0 0 1 2.4 6.4" stroke="#111" stroke-width="1.4" fill="none"/><path d="M3.4 8.1 L0.8 6 L3.8 4.8Z" fill="#111"/></svg>
<div class="t" style="left:290.5px;top:774.72px;font-size:8px;line-height:11px;color:#111;font-family:'Liberation Sans',sans-serif;transform:scaleX(0.860);transform-origin:right;">2695</div>
<div class="t" style="left:344.65px;top:774.72px;font-size:8px;line-height:11px;color:#111;font-family:'Liberation Sans',sans-serif;transform:scaleX(0.860);transform-origin:right;">215 Hz</div>
<div class="t" style="left:413.34px;top:774.72px;font-size:8px;line-height:11px;color:#111;font-family:'Liberation Sans',sans-serif;transform:scaleX(0.860);transform-origin:right;">0.0057 ms</div>
<div class="t" style="left:457.7px;top:774.72px;font-size:8px;line-height:11px;color:#111;font-family:'Liberation Sans',sans-serif;transform:scaleX(0.860);transform-origin:right;">0.0027 ms (#12915)</div>
<div class="t" style="left:537.9px;top:774.72px;font-size:8px;line-height:11px;color:#111;font-family:'Liberation Sans',sans-serif;transform:scaleX(0.860);transform-origin:right;">0.0126 ms (#40342)</div>
<div class="t" style="left:648.9px;top:774.72px;font-size:8px;line-height:11px;color:#111;font-family:'Liberation Sans',sans-serif;transform:scaleX(0.860);transform-origin:right;">21.7519 ms</div>
<div class="t" style="left:732.64px;top:774.72px;font-size:8px;line-height:11px;color:#111;font-family:'Liberation Sans',sans-serif;transform:scaleX(0.860);transform-origin:right;">1.7993 ms</div>
<div class="t" style="left:776px;top:774.72px;font-size:8px;line-height:11px;color:#111;font-family:'Liberation Sans',sans-serif;transform:scaleX(0.860);transform-origin:left;">0.18%</div>
<div class="t" style="left:869.79px;top:774.72px;font-size:8px;line-height:11px;color:#111;font-family:'Liberation Sans',sans-serif;transform:scaleX(0.860);transform-origin:right;">0.0 ms</div>
<div class="t" style="left:898.6px;top:774.72px;font-size:8px;line-height:11px;color:#111;font-family:'Liberation Sans',sans-serif;transform:scaleX(0.860);transform-origin:left;">0.00%</div>
<div class="t" style="left:979.34px;top:774.72px;font-size:8px;line-height:11px;color:#111;font-family:'Liberation Sans',sans-serif;transform:scaleX(0.860);transform-origin:right;">2.8141 ms</div>
<div class="t" style="left:1022.2px;top:774.72px;font-size:8px;line-height:11px;color:#111;font-family:'Liberation Sans',sans-serif;transform:scaleX(0.860);transform-origin:left;">0.28%</div>
<div style="left:7px;top:786px;width:10px;height:9px;background:linear-gradient(#c6eabd,#82d07a);border:1px solid #58a858;border-radius:2.5px;box-sizing:border-box"></div>
<div class="t" style="left:22.7px;top:784.62px;font-size:8px;line-height:11px;color:#111;font-family:'Liberation Sans',sans-serif;transform:scaleX(0.860);transform-origin:left;">IP_Task</div>
<svg style="position:absolute;left:83.3px;top:786.5px;" width="9.5" height="7.6" viewBox="0 0 9.5 7.6"><rect x="0.5" y="0.5" width="8.5" height="6.6" fill="#fff" stroke="#333" stroke-width="0.8"/><rect x="0.5" y="0.5" width="8.5" height="1.6" fill="#2a2ab0"/><path d="M1.5 5.5 Q3 2.8 5 4.6 T8.5 3.6" stroke="#c03030" stroke-width="0.7" fill="none"/><path d="M1.5 4.5 L4 6 L8.5 4.5" stroke="#2a2ab0" stroke-width="0.6" fill="none"/></svg>
<div class="t" style="left:98.3px;top:784.62px;font-size:8px;line-height:11px;color:#111;font-family:'Liberation Sans',sans-serif;transform:scaleX(0.860);transform-origin:left;">@152</div>
<div class="t" style="left:141.7px;top:784.62px;font-size:8px;line-height:11px;color:#111;font-family:'Liberation Sans',sans-serif;transform:scaleX(0.860);transform-origin:left;">1280 @ 0x1fff537c</div>
<div class="t" style="left:290.5px;top:784.62px;font-size:8px;line-height:11px;color:#111;font-family:'Liberation Sans',sans-serif;transform:scaleX(0.860);transform-origin:right;">1428</div>
<div class="t" style="left:344.65px;top:784.62px;font-size:8px;line-height:11px;color:#111;font-family:'Liberation Sans',sans-serif;transform:scaleX(0.860);transform-origin:right;">108 Hz</div>
<div class="t" style="left:413.34px;top:784.62px;font-size:8px;line-height:11px;color:#111;font-family:'Liberation Sans',sans-serif;transform:scaleX(0.860);transform-origin:right;">0.0457 ms</div>
<div class="t" style="left:457.7px;top:784.62px;font-size:8px;line-height:11px;color:#111;font-family:'Liberation Sans',sans-serif;transform:scaleX(0.860);transform-origin:right;">0.0026 ms (#24642)</div>
<div class="t" style="left:538.49px;top:784.62px;font-size:8px;line-height:11px;color:#111;font-family:'Liberation Sans',sans-serif;transform:scaleX(0.860);transform-origin:right;">0.1983 ms (#27211)</div>
<div class="t" style="left:648.9px;top:784.62px;font-size:8px;line-height:11px;color:#111;font-family:'Liberation Sans',sans-serif;transform:scaleX(0.860);transform-origin:right;">71.7902 ms</div>
<div class="t" style="left:732.64px;top:784.62px;font-size:8px;line-height:11px;color:#111;font-family:'Liberation Sans',sans-serif;transform:scaleX(0.860);transform-origin:right;">5.2921 ms</div>
<div class="t" style="left:776px;top:784.62px;font-size:8px;line-height:11px;color:#111;font-family:'Liberation Sans',sans-serif;transform:scaleX(0.860);transform-origin:left;">0.53%</div>
<div class="t" style="left:856.44px;top:784.62px;font-size:8px;line-height:11px;color:#111;font-family:'Liberation Sans',sans-serif;transform:scaleX(0.860);transform-origin:right;">4.9759 ms</div>
<div class="t" style="left:898.6px;top:784.62px;font-size:8px;line-height:11px;color:#111;font-family:'Liberation Sans',sans-serif;transform:scaleX(0.860);transform-origin:left;">0.50%</div>
<div class="t" style="left:975.49px;top:784.62px;font-size:8px;line-height:11px;color:#111;font-family:'Liberation Sans',sans-serif;transform:scaleX(0.860);transform-origin:right;">11.3680 ms</div>
<div class="t" style="left:1022.2px;top:784.62px;font-size:8px;line-height:11px;color:#111;font-family:'Liberation Sans',sans-serif;transform:scaleX(0.860);transform-origin:left;">1.14%</div>
<div style="left:7px;top:796px;width:10px;height:9px;background:linear-gradient(#b6e6d8,#7ecdb4);border:1px solid #58a890;border-radius:2.5px;box-sizing:border-box"></div>
<div class="t" style="left:22.7px;top:794.52px;font-size:8px;line-height:11px;color:#111;font-family:'Liberation Sans',sans-serif;transform:scaleX(0.860);transform-origin:left;">IP_WebServer</div>
<svg style="position:absolute;left:83.3px;top:796.4px;" width="9.5" height="7.6" viewBox="0 0 9.5 7.6"><rect x="0.5" y="0.5" width="8.5" height="6.6" fill="#fff" stroke="#333" stroke-width="0.8"/><rect x="0.5" y="0.5" width="8.5" height="1.6" fill="#2a2ab0"/><path d="M1.5 5.5 Q3 2.8 5 4.6 T8.5 3.6" stroke="#c03030" stroke-width="0.7" fill="none"/><path d="M1.5 4.5 L4 6 L8.5 4.5" stroke="#2a2ab0" stroke-width="0.6" fill="none"/></svg>
<div class="t" style="left:98.3px;top:794.52px;font-size:8px;line-height:11px;color:#111;font-family:'Liberation Sans',sans-serif;transform:scaleX(0.860);transform-origin:left;">@151</div>
<div class="t" style="left:141.7px;top:794.52px;font-size:8px;line-height:11px;color:#111;font-family:'Liberation Sans',sans-serif;transform:scaleX(0.860);transform-origin:left;">3072 @ 0x1fff0454</div>
<div class="t" style="left:299.4px;top:794.52px;font-size:8px;line-height:11px;color:#111;font-family:'Liberation Sans',sans-serif;transform:scaleX(0.860);transform-origin:right;">40</div>
<div class="t" style="left:353.55px;top:794.52px;font-size:8px;line-height:11px;color:#111;font-family:'Liberation Sans',sans-serif;transform:scaleX(0.860);transform-origin:right;">0 Hz</div>
<div class="t" style="left:413.34px;top:794.52px;font-size:8px;line-height:11px;color:#111;font-family:'Liberation Sans',sans-serif;transform:scaleX(0.860);transform-origin:right;">0.1645 ms</div>
<div class="t" style="left:457.7px;top:794.52px;font-size:8px;line-height:11px;color:#111;font-family:'Liberation Sans',sans-serif;transform:scaleX(0.860);transform-origin:right;">0.0064 ms (#27378)</div>
<div class="t" style="left:542.35px;top:794.52px;font-size:8px;line-height:11px;color:#111;font-family:'Liberation Sans',sans-serif;transform:scaleX(0.860);transform-origin:right;">0.1904 ms (#9506)</div>
<div class="t" style="left:653.34px;top:794.52px;font-size:8px;line-height:11px;color:#111;font-family:'Liberation Sans',sans-serif;transform:scaleX(0.860);transform-origin:right;">3.6446 ms</div>
<div class="t" style="left:745.99px;top:794.52px;font-size:8px;line-height:11px;color:#111;font-family:'Liberation Sans',sans-serif;transform:scaleX(0.860);transform-origin:right;">0.0 ms</div>
<div class="t" style="left:776px;top:794.52px;font-size:8px;line-height:11px;color:#111;font-family:'Liberation Sans',sans-serif;transform:scaleX(0.860);transform-origin:left;">0.00%</div>
<div class="t" style="left:869.79px;top:794.52px;font-size:8px;line-height:11px;color:#111;font-family:'Liberation Sans',sans-serif;transform:scaleX(0.860);transform-origin:right;">0.0 ms</div>
<div class="t" style="left:898.6px;top:794.52px;font-size:8px;line-height:11px;color:#111;font-family:'Liberation Sans',sans-serif;transform:scaleX(0.860);transform-origin:left;">0.00%</div>
<div class="t" style="left:979.34px;top:794.52px;font-size:8px;line-height:11px;color:#111;font-family:'Liberation Sans',sans-serif;transform:scaleX(0.860);transform-origin:right;">1.2142 ms</div>
<div class="t" style="left:1022.2px;top:794.52px;font-size:8px;line-height:11px;color:#111;font-family:'Liberation Sans',sans-serif;transform:scaleX(0.860);transform-origin:left;">0.12%</div>
<div style="left:7px;top:806px;width:10px;height:9px;background:linear-gradient(#a8ccc8,#8cb8b4);border:1px solid #70a0a0;border-radius:2.5px;box-sizing:border-box"></div>
<div class="t" style="left:22.7px;top:804.42px;font-size:8px;line-height:11px;color:#111;font-family:'Liberation Sans',sans-serif;transform:scaleX(0.860);transform-origin:left;">Webserver Child</div>
<svg style="position:absolute;left:83.3px;top:806.3px;" width="9.5" height="7.6" viewBox="0 0 9.5 7.6"><rect x="0.5" y="0.5" width="8.5" height="6.6" fill="#fff" stroke="#333" stroke-width="0.8"/><rect x="0.5" y="0.5" width="8.5" height="1.6" fill="#2a2ab0"/><path d="M1.5 5.5 Q3 2.8 5 4.6 T8.5 3.6" stroke="#c03030" stroke-width="0.7" fill="none"/><path d="M1.5 4.5 L4 6 L8.5 4.5" stroke="#2a2ab0" stroke-width="0.6" fill="none"/></svg>
<div class="t" style="left:98.3px;top:804.42px;font-size:8px;line-height:11px;color:#111;font-family:'Liberation Sans',sans-serif;transform:scaleX(0.860);transform-origin:left;">@150</div>
<div class="t" style="left:141.7px;top:804.42px;font-size:8px;line-height:11px;color:#111;font-family:'Liberation Sans',sans-serif;transform:scaleX(0.860);transform-origin:left;">2000 @ 0x1fff5978</div>
<div class="t" style="left:294.95px;top:804.42px;font-size:8px;line-height:11px;color:#111;font-family:'Liberation Sans',sans-serif;transform:scaleX(0.860);transform-origin:right;">226</div>
<div class="t" style="left:353.55px;top:804.42px;font-size:8px;line-height:11px;color:#111;font-family:'Liberation Sans',sans-serif;transform:scaleX(0.860);transform-origin:right;">4 Hz</div>
<div class="t" style="left:413.34px;top:804.42px;font-size:8px;line-height:11px;color:#111;font-family:'Liberation Sans',sans-serif;transform:scaleX(0.860);transform-origin:right;">0.0619 ms</div>
<div class="t" style="left:462.15px;top:804.42px;font-size:8px;line-height:11px;color:#111;font-family:'Liberation Sans',sans-serif;transform:scaleX(0.860);transform-origin:right;">0.003 ms (#36100)</div>
<div class="t" style="left:537.9px;top:804.42px;font-size:8px;line-height:11px;color:#111;font-family:'Liberation Sans',sans-serif;transform:scaleX(0.860);transform-origin:right;">0.7779 ms (#33419)</div>
<div class="t" style="left:648.9px;top:804.42px;font-size:8px;line-height:11px;color:#111;font-family:'Liberation Sans',sans-serif;transform:scaleX(0.860);transform-origin:right;">26.4820 ms</div>
<div class="t" style="left:732.64px;top:804.42px;font-size:8px;line-height:11px;color:#111;font-family:'Liberation Sans',sans-serif;transform:scaleX(0.860);transform-origin:right;">0.2615 ms</div>
<div class="t" style="left:776px;top:804.42px;font-size:8px;line-height:11px;color:#111;font-family:'Liberation Sans',sans-serif;transform:scaleX(0.860);transform-origin:left;">0.03%</div>
<div class="t" style="left:856.44px;top:804.42px;font-size:8px;line-height:11px;color:#111;font-family:'Liberation Sans',sans-serif;transform:scaleX(0.860);transform-origin:right;">0.2615 ms</div>
<div class="t" style="left:898.6px;top:804.42px;font-size:8px;line-height:11px;color:#111;font-family:'Liberation Sans',sans-serif;transform:scaleX(0.860);transform-origin:left;">0.03%</div>
<div class="t" style="left:979.34px;top:804.42px;font-size:8px;line-height:11px;color:#111;font-family:'Liberation Sans',sans-serif;transform:scaleX(0.860);transform-origin:right;">9.4757 ms</div>
<div class="t" style="left:1022.2px;top:804.42px;font-size:8px;line-height:11px;color:#111;font-family:'Liberation Sans',sans-serif;transform:scaleX(0.860);transform-origin:left;">0.95%</div>
<div style="left:7px;top:815px;width:10px;height:10px;background:linear-gradient(#aec8f0,#7aa2dc);border:1px solid #5880c0;border-radius:2.5px;box-sizing:border-box"></div>
<div class="t" style="left:22.7px;top:814.32px;font-size:8px;line-height:11px;color:#111;font-family:'Liberation Sans',sans-serif;transform:scaleX(0.860);transform-origin:left;">Webserver Child</div>
<svg style="position:absolute;left:83.3px;top:816.2px;" width="9.5" height="7.6" viewBox="0 0 9.5 7.6"><rect x="0.5" y="0.5" width="8.5" height="6.6" fill="#fff" stroke="#333" stroke-width="0.8"/><rect x="0.5" y="0.5" width="8.5" height="1.6" fill="#2a2ab0"/><path d="M1.5 5.5 Q3 2.8 5 4.6 T8.5 3.6" stroke="#c03030" stroke-width="0.7" fill="none"/><path d="M1.5 4.5 L4 6 L8.5 4.5" stroke="#2a2ab0" stroke-width="0.6" fill="none"/></svg>
<div class="t" style="left:98.3px;top:814.32px;font-size:8px;line-height:11px;color:#111;font-family:'Liberation Sans',sans-serif;transform:scaleX(0.860);transform-origin:left;">@150</div>
<div class="t" style="left:141.7px;top:814.32px;font-size:8px;line-height:11px;color:#111;font-family:'Liberation Sans',sans-serif;transform:scaleX(0.860);transform-origin:left;">2000 @ 0x1fff6148</div>
<div class="t" style="left:299.4px;top:814.32px;font-size:8px;line-height:11px;color:#111;font-family:'Liberation Sans',sans-serif;transform:scaleX(0.860);transform-origin:right;">96</div>
<div class="t" style="left:353.55px;top:814.32px;font-size:8px;line-height:11px;color:#111;font-family:'Liberation Sans',sans-serif;transform:scaleX(0.860);transform-origin:right;">0 Hz</div>
<div class="t" style="left:413.34px;top:814.32px;font-size:8px;line-height:11px;color:#111;font-family:'Liberation Sans',sans-serif;transform:scaleX(0.860);transform-origin:right;">0.0667 ms</div>
<div class="t" style="left:457.7px;top:814.32px;font-size:8px;line-height:11px;color:#111;font-family:'Liberation Sans',sans-serif;transform:scaleX(0.860);transform-origin:right;">0.0031 ms (#30095)</div>
<div class="t" style="left:537.9px;top:814.32px;font-size:8px;line-height:11px;color:#111;font-family:'Liberation Sans',sans-serif;transform:scaleX(0.860);transform-origin:right;">0.7610 ms (#30124)</div>
<div class="t" style="left:648.9px;top:814.32px;font-size:8px;line-height:11px;color:#111;font-family:'Liberation Sans',sans-serif;transform:scaleX(0.860);transform-origin:right;">13.0784 ms</div>
<div class="t" style="left:745.99px;top:814.32px;font-size:8px;line-height:11px;color:#111;font-family:'Liberation Sans',sans-serif;transform:scaleX(0.860);transform-origin:right;">0.0 ms</div>
<div class="t" style="left:776px;top:814.32px;font-size:8px;line-height:11px;color:#111;font-family:'Liberation Sans',sans-serif;transform:scaleX(0.860);transform-origin:left;">0.00%</div>
<div class="t" style="left:869.79px;top:814.32px;font-size:8px;line-height:11px;color:#111;font-family:'Liberation Sans',sans-serif;transform:scaleX(0.860);transform-origin:right;">0.0 ms</div>
<div class="t" style="left:898.6px;top:814.32px;font-size:8px;line-height:11px;color:#111;font-family:'Liberation Sans',sans-serif;transform:scaleX(0.860);transform-origin:left;">0.00%</div>
<div class="t" style="left:979.34px;top:814.32px;font-size:8px;line-height:11px;color:#111;font-family:'Liberation Sans',sans-serif;transform:scaleX(0.860);transform-origin:right;">4.1399 ms</div>
<div class="t" style="left:1022.2px;top:814.32px;font-size:8px;line-height:11px;color:#111;font-family:'Liberation Sans',sans-serif;transform:scaleX(0.860);transform-origin:left;">0.41%</div>
<div style="left:7px;top:825px;width:10px;height:10px;background:linear-gradient(#ffffff,#ffffff);border:1px solid #c8c8c8;border-radius:2.5px;box-sizing:border-box"></div>
<div class="t" style="left:22.7px;top:824.22px;font-size:8px;line-height:11px;color:#111;font-family:'Liberation Sans',sans-serif;transform:scaleX(0.860);transform-origin:left;">Idle</div>
<svg style="position:absolute;left:83.3px;top:825.7px;" width="9" height="9" viewBox="0 0 9 9"><path d="M2.6 2.4 A3.4 3.4 0 1 0 6.4 2.4" stroke="#111" stroke-width="1.2" fill="none"/><path d="M4.5 0.6V4.4" stroke="#111" stroke-width="1.2"/></svg>
<div class="t" style="left:286.05px;top:824.22px;font-size:8px;line-height:11px;color:#111;font-family:'Liberation Sans',sans-serif;transform:scaleX(0.860);transform-origin:right;">10546</div>
<div class="t" style="left:340.2px;top:824.22px;font-size:8px;line-height:11px;color:#111;font-family:'Liberation Sans',sans-serif;transform:scaleX(0.860);transform-origin:right;">1004 Hz</div>
<div class="t" style="left:413.34px;top:824.22px;font-size:8px;line-height:11px;color:#111;font-family:'Liberation Sans',sans-serif;transform:scaleX(0.860);transform-origin:right;">0.9951 ms</div>
<div class="t" style="left:457.7px;top:824.22px;font-size:8px;line-height:11px;color:#111;font-family:'Liberation Sans',sans-serif;transform:scaleX(0.860);transform-origin:right;">0.0034 ms (#17253)</div>
<div class="t" style="left:546.8px;top:824.22px;font-size:8px;line-height:11px;color:#111;font-family:'Liberation Sans',sans-serif;transform:scaleX(0.860);transform-origin:right;">0.9952 ms (#330)</div>
<div class="t" style="left:635.55px;top:824.22px;font-size:8px;line-height:11px;color:#111;font-family:'Liberation Sans',sans-serif;transform:scaleX(0.860);transform-origin:right;">10330.9959 ms</div>
<div class="t" style="left:723.75px;top:824.22px;font-size:8px;line-height:11px;color:#111;font-family:'Liberation Sans',sans-serif;transform:scaleX(0.860);transform-origin:right;">987.5671 ms</div>
<div class="t" style="left:776px;top:824.22px;font-size:8px;line-height:11px;color:#111;font-family:'Liberation Sans',sans-serif;transform:scaleX(0.860);transform-origin:left;">98.76%</div>
<div class="t" style="left:869.79px;top:824.22px;font-size:8px;line-height:11px;color:#111;font-family:'Liberation Sans',sans-serif;transform:scaleX(0.860);transform-origin:right;">0.0 ms</div>
<div class="t" style="left:898.6px;top:824.22px;font-size:8px;line-height:11px;color:#111;font-family:'Liberation Sans',sans-serif;transform:scaleX(0.860);transform-origin:left;">0.00%</div>
<div class="t" style="left:970.45px;top:824.22px;font-size:8px;line-height:11px;color:#111;font-family:'Liberation Sans',sans-serif;transform:scaleX(0.860);transform-origin:right;">988.0204 ms</div>
<div class="t" style="left:1022.2px;top:824.22px;font-size:8px;line-height:11px;color:#111;font-family:'Liberation Sans',sans-serif;transform:scaleX(0.860);transform-origin:left;">98.80%</div>
<div style="left:5px;top:898px;width:1189px;height:1px;background:#b8b8bc;"></div>
<div style="left:5px;top:899px;width:1189px;height:16px;background:#f0f0f0;"></div>
<div class="t" style="left:969.94px;top:902.79px;font-size:7.8px;line-height:11px;color:#111;font-family:'Liberation Sans',sans-serif;transform:scaleX(0.872);transform-origin:right;">43 466 Events (1 - 43 466)</div>
<div style="left:1065px;top:901px;width:1px;height:12px;background:#d8d8d8;"></div>
<div class="t" style="left:1074.86px;top:902.79px;font-size:7.8px;line-height:11px;color:#111;font-family:'Liberation Sans',sans-serif;transform:scaleX(0.861);transform-origin:right;">10.529 972</div>
<div style="left:1126px;top:901px;width:1px;height:12px;background:#d8d8d8;"></div>
<div class="t" style="left:1131.3px;top:902.79px;font-size:7.8px;line-height:11px;color:#111;font-family:'Liberation Sans',sans-serif;transform:scaleX(0.952);transform-origin:left;">Auto Scroll</div>
<div style="left:1170px;top:901px;width:1px;height:12px;background:#d8d8d8;"></div>
<div style="left:1175px;top:906px;width:6px;height:6px;background:#cc3a3a;"></div>
<div style="left:1191px;top:909px;width:1px;height:1px;background:#b0b0b0;"></div>
<div style="left:1191px;top:911px;width:1px;height:1px;background:#b0b0b0;"></div>
<div style="left:1189px;top:911px;width:1px;height:1px;background:#b0b0b0;"></div>
<div style="left:1191px;top:913px;width:1px;height:1px;background:#b0b0b0;"></div>
<div style="left:1189px;top:913px;width:1px;height:1px;background:#b0b0b0;"></div>
<div style="left:1187px;top:913px;width:1px;height:1px;background:#b0b0b0;"></div>
</div></body></html>
